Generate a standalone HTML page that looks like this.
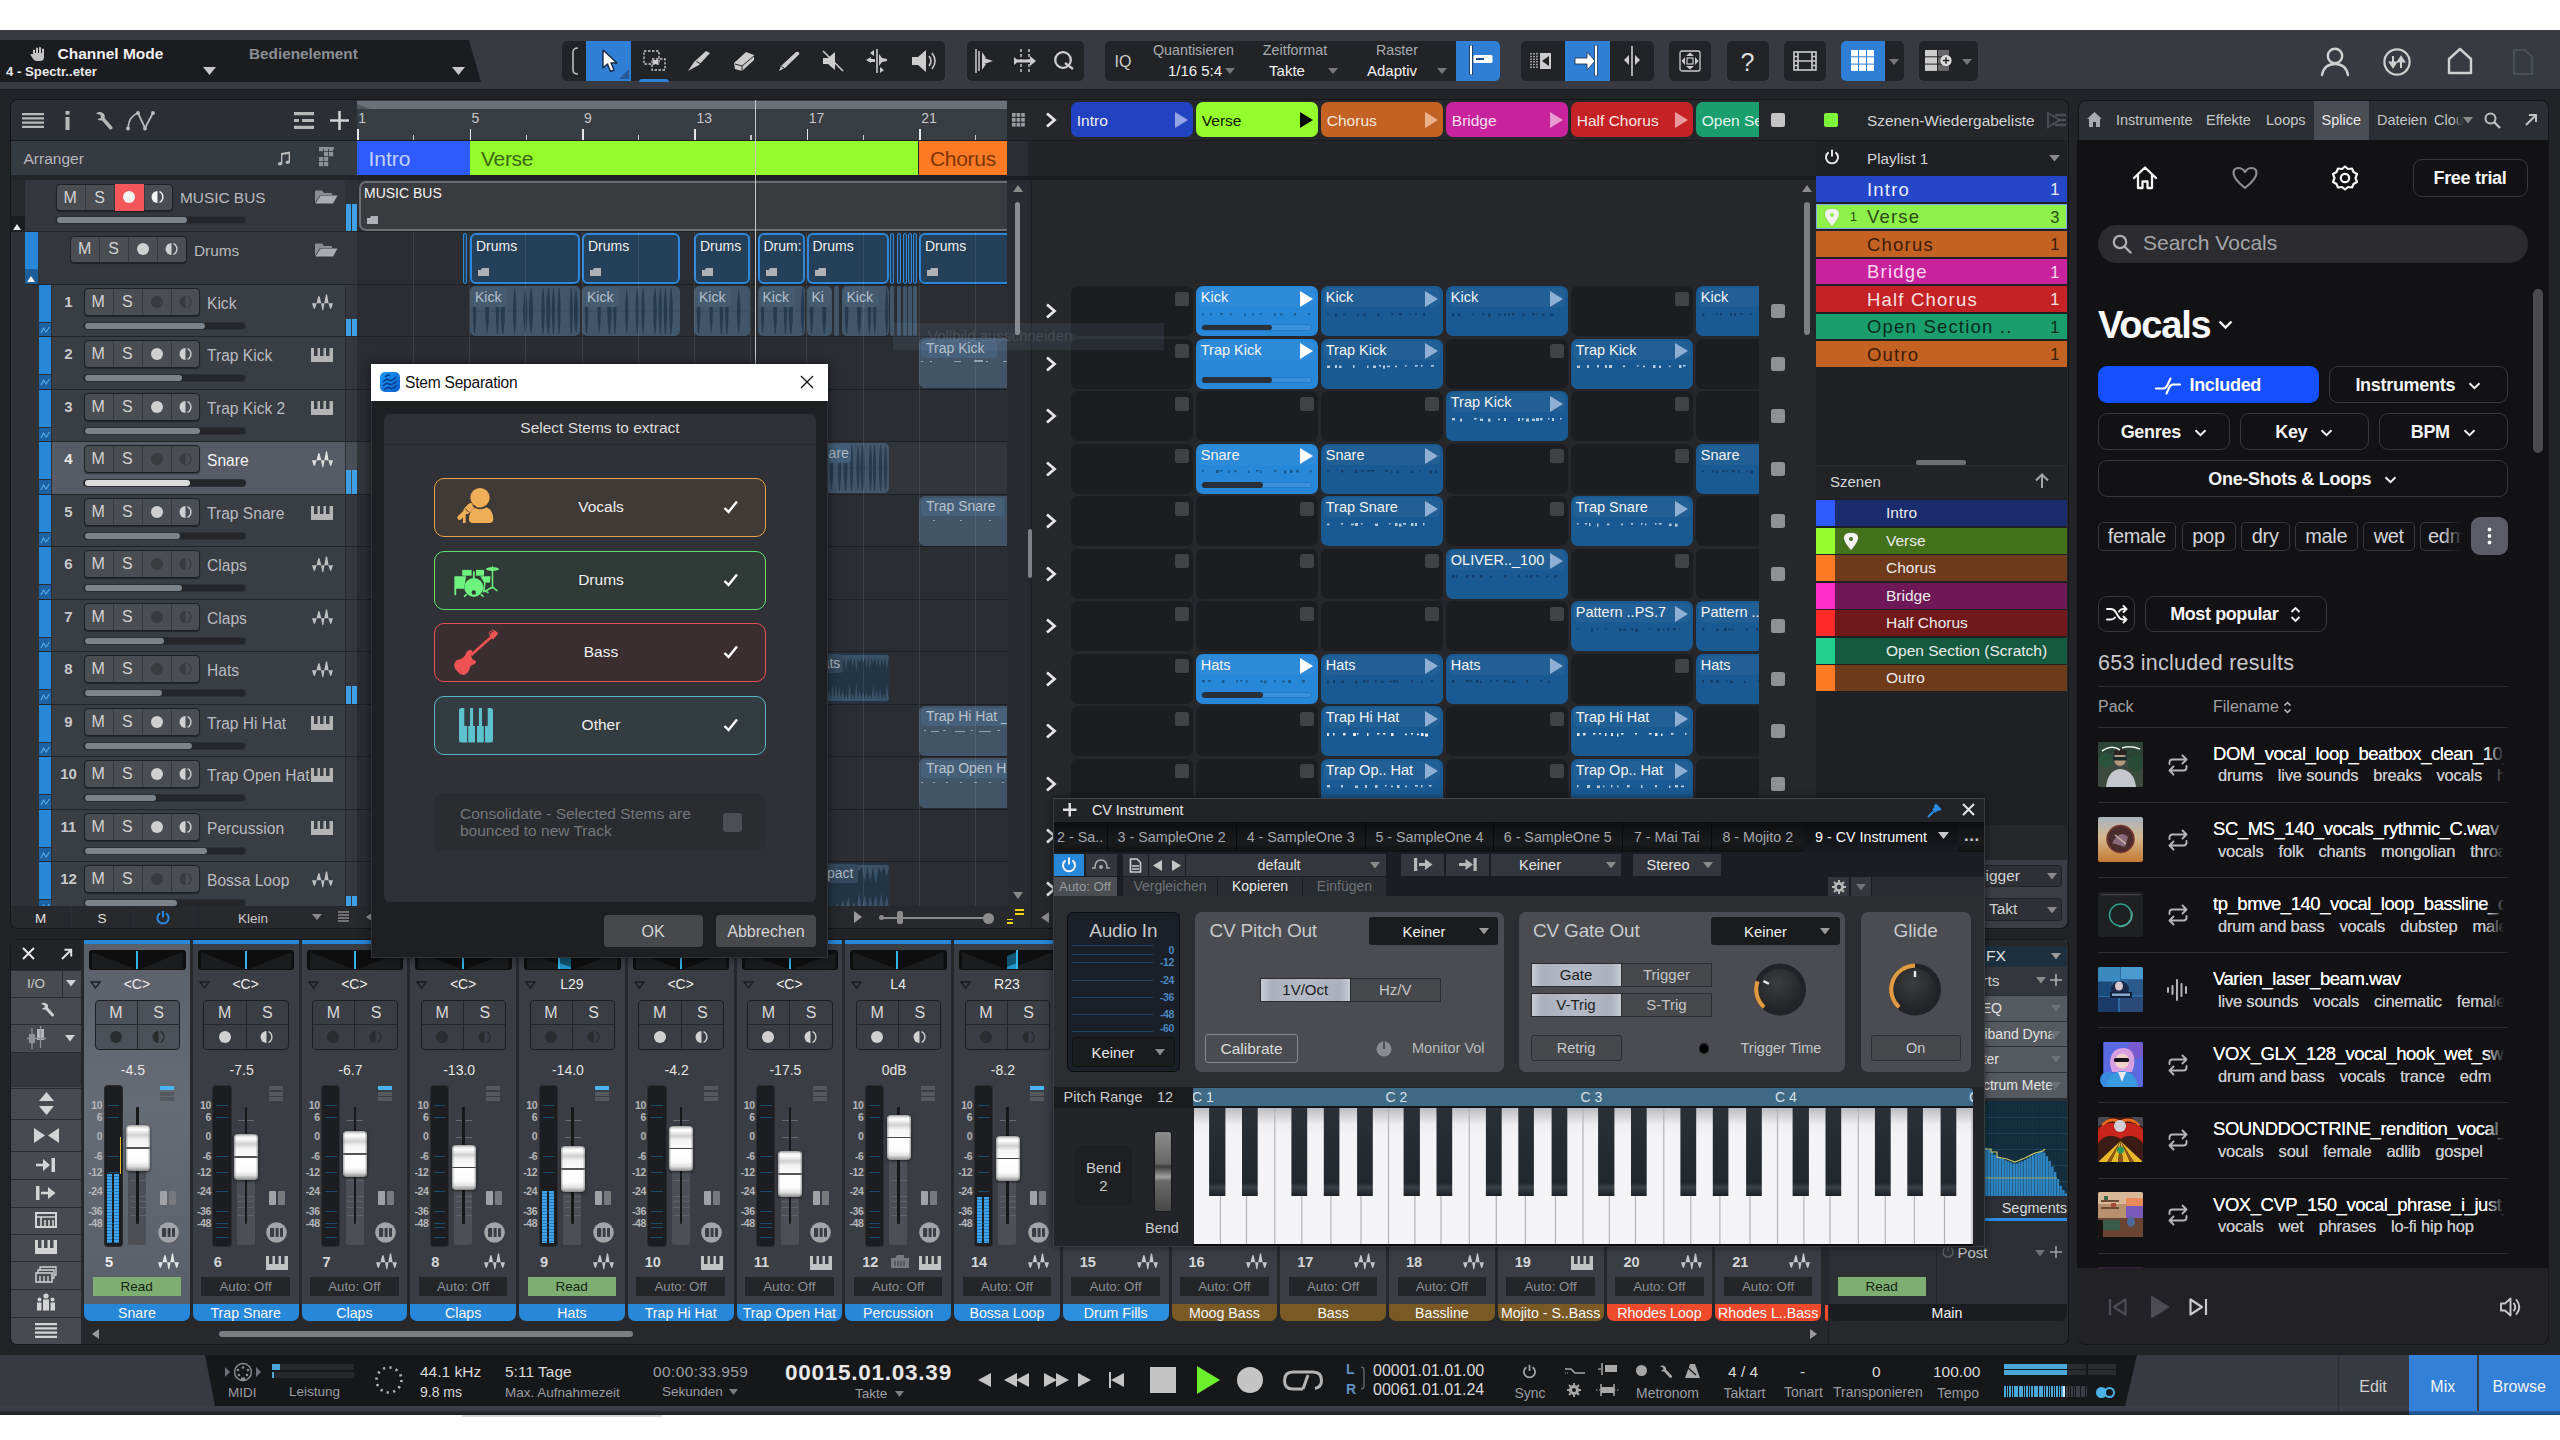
<!DOCTYPE html>
<html><head><meta charset="utf-8"><title>Studio One</title>
<style>
*{box-sizing:border-box;margin:0;padding:0}
html,body{width:2560px;height:1440px;overflow:hidden;background:#fff}
body{font-family:"Liberation Sans",sans-serif;position:relative}
div,svg{position:absolute}
.t{white-space:nowrap;line-height:1.15}
#root{left:0;top:0;width:2560px;height:1440px;overflow:hidden}
.clip{overflow:hidden}
</style></head><body><div id="root">

<div style="left:0px;top:90px;width:2560px;height:1265px;background:#222326"></div>
<div style="left:10.5px;top:99.5px;width:2057px;height:828.5px;background:#25272b;border-radius:7px;box-shadow:0 0 0 1px #151618"></div>
<div style="left:0px;top:30px;width:2560px;height:60px;background:#373b41;border-bottom:1px solid #17181a"></div>
<svg style="left:0px;top:40px;" width="482" height="42" viewBox="0 0 482 42"><polygon points="0,0 469,0 481,42 0,42" fill="#1a1c20"/></svg>
<svg style="left:30px;top:46px;" width="18" height="16" viewBox="0 0 18 16"><path d="M3 8 L3 4 Q4 3 5 4 L5 7 L6 7 L6 2 Q7 1 8 2 L8 7 L9 7 L9 1.5 Q10 .5 11 1.5 L11 7 L12 7 L12 3 Q13 2 14 3 L14 11 Q14 15 10 15 L7 15 Q4 15 2.5 12 L.5 9 Q.5 7.5 2 8 Z" fill="#c4c4c4"/></svg>
<div class="t" style="left:57.5px;top:44.7px;font-size:15.5px;color:#f0f0f0;font-weight:bold">Channel Mode</div>
<div class="t" style="left:6px;top:63.7px;font-size:13.2px;color:#e8e8e8;font-weight:bold">4 - Spectr..eter</div>
<svg style="left:203px;top:67px;" width="13" height="8" viewBox="0 0 13 8"><polygon points="0,0 13,0 6.5,8" fill="#c8c8c8"/></svg>
<div class="t" style="left:249px;top:45px;font-size:15.3px;color:#8b8e93;font-weight:bold">Bedienelement</div>
<svg style="left:452px;top:67px;" width="13" height="8" viewBox="0 0 13 8"><polygon points="0,0 13,0 6.5,8" fill="#c8c8c8"/></svg>
<div style="left:562px;top:41px;width:383px;height:40px;background:#222326;border-radius:5px"></div>
<div style="left:586px;top:41px;width:45px;height:40px;background:#2f7fd6"></div>
<svg style="left:570px;top:47px;" width="10" height="28" viewBox="0 0 10 28"><path d="M8 1 Q3 1 3 5 L3 23 Q3 27 8 27" fill="none" stroke="#bbb" stroke-width="1.6"/></svg>
<svg style="left:600px;top:48px;" width="20" height="26" viewBox="0 0 20 26"><path d="M3 2 L3 20 L7.5 16 L10.5 23.5 L14 22 L11 15 L17 15 Z" fill="#fff" stroke="#1b2c44" stroke-width="1.4" stroke-linejoin="round"/></svg>
<svg style="left:619px;top:69px;" width="10" height="10" viewBox="0 0 10 10"><polygon points="10,0 10,10 0,10" fill="#245a9a"/></svg>
<svg style="left:643px;top:50px;" width="24" height="22" viewBox="0 0 24 22"><rect x="1" y="1" width="15" height="13" fill="none" stroke="#ccc" stroke-width="1.3" stroke-dasharray="2.5 1.5"/><rect x="9" y="9" width="13" height="11" fill="none" stroke="#ccc" stroke-width="1.3" stroke-dasharray="2.5 1.5"/><rect x="10" y="10" width="5" height="4" fill="#ccc"/></svg>
<div style="left:639px;top:78.5px;width:30px;height:3px;background:#2f7fd6;border-radius:3px 3px 0 0"></div>
<svg style="left:687px;top:50px;" width="24" height="22" viewBox="0 0 24 22"><path d="M1 21 L7 12 L19 1 L23 3 L12 15 Z" fill="#ccc"/><path d="M9.5 11.5 L14 14" stroke="#222" stroke-width="1"/></svg>
<svg style="left:732px;top:50px;" width="24" height="22" viewBox="0 0 24 22"><path d="M2 13 L14 2 L22 5 L22 10 L10 21 L3 19 Z" fill="#ccc"/><path d="M3 14 L10 16 L22 6 M10 16 L10 21" stroke="#222" stroke-width="1" fill="none"/></svg>
<svg style="left:777px;top:50px;" width="24" height="22" viewBox="0 0 24 22"><path d="M2 21 L4 16 L19 2 Q22 1 22.5 4 L8 18 Z" fill="#ccc"/><path d="M4.5 16.5 L7.5 18.5" stroke="#222" stroke-width="1"/></svg>
<svg style="left:820px;top:49px;" width="26" height="24" viewBox="0 0 26 24"><path d="M3 9 L8 9 L15 3 L15 21 L8 15 L3 15 Z" fill="#ccc"/><path d="M3 2 L23 22" stroke="#ccc" stroke-width="1.6"/></svg>
<svg style="left:865px;top:48px;" width="24" height="26" viewBox="0 0 24 26"><path d="M12 1 L12 25" stroke="#ccc" stroke-width="1.6"/><path d="M1 12 L6 9 L6 11 L10 11 L10 14 L6 14 L6 15 Z M14 6 L14 18 L17 14 L22 13 L22 11 L17 10 Z M9 2 L9 8 L5 5 Z M15 19 L15 25 L19 22 Z" fill="#ccc"/></svg>
<svg style="left:911px;top:49px;" width="28" height="24" viewBox="0 0 28 24"><path d="M1 8 L7 8 L15 1 L15 23 L7 16 L1 16 Z" fill="#ccc"/><path d="M18 7 Q22 12 18 17 M21 4 Q27 12 21 20" stroke="#ccc" stroke-width="1.6" fill="none"/></svg>
<div style="left:966.5px;top:41px;width:117px;height:40px;background:#222326;border-radius:5px"></div>
<svg style="left:973px;top:48px;" width="22" height="26" viewBox="0 0 22 26"><path d="M3 1 L3 25 M6 3 L6 23" stroke="#ccc" stroke-width="1.5"/><path d="M9 4 L13 10 L11 10 L20 13 L11 16 L13 16 L9 22 Z" fill="#ccc"/></svg>
<svg style="left:1013px;top:48px;" width="24" height="26" viewBox="0 0 24 26"><path d="M8 1 L8 25 M16 1 L16 25" stroke="#ccc" stroke-width="1.4" stroke-dasharray="3 2"/><path d="M1 9 L1 17 L4 14.5 L17 14.5 L17 18 L23 13 L17 8 L17 11.5 L4 11.5 Z" fill="#ccc"/></svg>
<svg style="left:1053px;top:50px;" width="22" height="22" viewBox="0 0 22 22"><circle cx="10" cy="10" r="7.8" fill="none" stroke="#ccc" stroke-width="2.3"/><path d="M12 13 L20 19" stroke="#ccc" stroke-width="2.3"/></svg>
<div style="left:1105px;top:41px;width:395px;height:40px;background:#222326;border-radius:5px"></div>
<div style="left:1456px;top:41px;width:44px;height:40px;background:#2f7fd6;border-radius:0 5px 5px 0"></div>
<div class="t" style="left:1114.5px;top:52.5px;font-size:16px;color:#ccc;">IQ</div>
<div class="t" style="left:1113.5px;top:42.3px;font-size:14.3px;color:#a8abb0;width:160px;text-align:center;">Quantisieren</div>
<div class="t" style="left:1115px;top:62.3px;font-size:15px;color:#f2f2f2;width:160px;text-align:center;">1/16 5:4</div>
<svg style="left:1225px;top:68px;" width="10" height="6" viewBox="0 0 10 6"><polygon points="0,0 10,0 5.0,6" fill="#777"/></svg>
<div class="t" style="left:1215px;top:42.3px;font-size:14.3px;color:#a8abb0;width:160px;text-align:center;">Zeitformat</div>
<div class="t" style="left:1207px;top:62.3px;font-size:15px;color:#f2f2f2;width:160px;text-align:center;">Takte</div>
<svg style="left:1328px;top:68px;" width="10" height="6" viewBox="0 0 10 6"><polygon points="0,0 10,0 5.0,6" fill="#777"/></svg>
<div class="t" style="left:1317px;top:42.3px;font-size:14.3px;color:#a8abb0;width:160px;text-align:center;">Raster</div>
<div class="t" style="left:1312px;top:62.3px;font-size:15px;color:#f2f2f2;width:160px;text-align:center;">Adaptiv</div>
<svg style="left:1437px;top:68px;" width="10" height="6" viewBox="0 0 10 6"><polygon points="0,0 10,0 5.0,6" fill="#777"/></svg>
<svg style="left:1466px;top:44px;" width="30" height="34" viewBox="0 0 30 34"><path d="M5 1 L5 31" stroke="#1d2c45" stroke-width="3.4"/><path d="M5 1.5 L5 30.5" stroke="#fff" stroke-width="2"/><rect x="7.5" y="11" width="19" height="8" rx="1.5" fill="#fff"/><rect x="10" y="14" width="8" height="2" fill="#1d4c8a"/></svg>
<div style="left:1521px;top:41px;width:133px;height:40px;background:#222326;border-radius:5px"></div>
<div style="left:1565px;top:41px;width:45px;height:40px;background:#2f7fd6"></div>
<svg style="left:1529px;top:52px;" width="24" height="18" viewBox="0 0 24 18"><path d="M2 1 L2 17 M5 1 L5 17 M8 1 L8 17" stroke="#ccc" stroke-width="1.4" stroke-dasharray="1.5 1.2"/><rect x="11" y="1" width="11" height="16" fill="#ccc"/><polygon points="20,4 20,14 13,9" fill="#222"/></svg>
<svg style="left:1573px;top:44px;" width="28" height="34" viewBox="0 0 28 34"><path d="M2 14 L14 14 L14 8 L22 17 L14 26 L14 20 L2 20 Z" fill="#fff" stroke="#1d2c45" stroke-width=".8"/><path d="M23 1 L23 32" stroke="#1d2c45" stroke-width="3.6"/><path d="M23 1.5 L23 31.5" stroke="#fff" stroke-width="2.2"/></svg>
<svg style="left:1621px;top:45px;" width="22" height="32" viewBox="0 0 22 32"><path d="M11 1 L11 31" stroke="#ccc" stroke-width="1.6"/><polygon points="8,10 8,20 3,15" fill="#ccc"/><polygon points="14,10 14,20 19,15" fill="#ccc"/></svg>
<div style="left:1669px;top:41px;width:42px;height:40px;background:#222326;border-radius:5px"></div>
<svg style="left:1679px;top:50px;" width="22" height="22" viewBox="0 0 22 22"><rect x="1" y="1" width="20" height="20" rx="2" fill="none" stroke="#ccc" stroke-width="1.3"/><rect x="8" y="8" width="6" height="6" fill="none" stroke="#ccc" stroke-width="1.2"/><path d="M7 6 L11 2.5 L15 6 Z M7 16 L11 19.5 L15 16 Z M6 7 L2.5 11 L6 15 Z M16 7 L19.5 11 L16 15 Z" fill="#ccc"/></svg>
<div style="left:1726.5px;top:41px;width:42px;height:40px;background:#222326;border-radius:5px"></div>
<div class="t" style="left:1726.5px;top:48px;font-size:25px;color:#ddd;width:42px;text-align:center;">?</div>
<div style="left:1784px;top:41px;width:42px;height:40px;background:#222326;border-radius:5px"></div>
<svg style="left:1793px;top:50px;" width="24" height="22" viewBox="0 0 24 22"><rect x="1" y="2" width="22" height="18" fill="none" stroke="#ccc" stroke-width="1.6"/><path d="M5 2 L5 20 M19 2 L19 20 M5 11 L19 11 M1 6.5 L5 6.5 M1 11 L5 11 M1 15.5 L5 15.5 M19 6.5 L23 6.5 M19 11 L23 11 M19 15.5 L23 15.5" stroke="#ccc" stroke-width="1.6"/></svg>
<div style="left:1841px;top:41px;width:63px;height:40px;background:#222326;border-radius:5px"></div>
<div style="left:1841px;top:41px;width:44px;height:40px;background:#2f7fd6;border-radius:5px 0 0 5px"></div>
<svg style="left:1851px;top:50px;" width="24" height="22" viewBox="0 0 24 22"><rect x="0" y="0.0" width="7" height="6.3" fill="#fff"/><rect x="8" y="0.0" width="7" height="6.3" fill="#fff"/><rect x="16" y="0.0" width="7" height="6.3" fill="#fff"/><rect x="0" y="7.3" width="7" height="6.3" fill="#fff"/><rect x="8" y="7.3" width="7" height="6.3" fill="#fff"/><rect x="16" y="7.3" width="7" height="6.3" fill="#fff"/><rect x="0" y="14.6" width="7" height="6.3" fill="#fff"/><rect x="8" y="14.6" width="7" height="6.3" fill="#fff"/><rect x="16" y="14.6" width="7" height="6.3" fill="#fff"/></svg>
<svg style="left:1889px;top:59px;" width="10" height="6" viewBox="0 0 10 6"><polygon points="0,0 10,0 5.0,6" fill="#777"/></svg>
<div style="left:1919px;top:41px;width:58.5px;height:40px;background:#222326;border-radius:5px"></div>
<svg style="left:1925px;top:50px;" width="28" height="22" viewBox="0 0 28 22"><rect x="0" y="0.0" width="12" height="6.3" fill="#ccc"/><rect x="13" y="0.0" width="11" height="6.3" fill="#666"/><rect x="0" y="7.3" width="12" height="6.3" fill="#ccc"/><rect x="13" y="7.3" width="11" height="6.3" fill="#666"/><rect x="0" y="14.6" width="12" height="6.3" fill="#ccc"/><rect x="13" y="14.6" width="11" height="6.3" fill="#666"/><circle cx="21" cy="10.5" r="5.6" fill="#ddd"/><path d="M21 7.3 L21 13.7 M17.8 10.5 L24.2 10.5" stroke="#222" stroke-width="1.4"/></svg>
<svg style="left:1962px;top:59px;" width="10" height="6" viewBox="0 0 10 6"><polygon points="0,0 10,0 5.0,6" fill="#777"/></svg>
<svg style="left:2319px;top:46px;" width="32" height="32" viewBox="0 0 32 32"><circle cx="16" cy="10" r="7.2" fill="none" stroke="#d0d0d0" stroke-width="2.4"/><path d="M3 29 Q5 18 16 18 Q27 18 29 29" fill="none" stroke="#d0d0d0" stroke-width="2.4" stroke-linecap="round"/></svg>
<svg style="left:2382px;top:47px;" width="30" height="30" viewBox="0 0 30 30"><circle cx="15" cy="15" r="12.6" fill="none" stroke="#d0d0d0" stroke-width="2.2"/><path d="M11 9 L11 18 M8 15.5 L11 20 L14 15.5 Z M19 21 L19 12 M16 14.5 L19 10 L22 14.5 Z" stroke="#d0d0d0" stroke-width="2" fill="#d0d0d0"/></svg>
<svg style="left:2446px;top:46px;" width="28" height="30" viewBox="0 0 28 30"><path d="M3 13 L14 3 L25 13 L25 27 L3 27 Z" fill="none" stroke="#d0d0d0" stroke-width="2.4" stroke-linejoin="round"/></svg>
<svg style="left:2512px;top:48px;" width="22" height="28" viewBox="0 0 22 28"><path d="M2 2 L13 2 L20 9 L20 26 L2 26 Z" fill="none" stroke="#4b4f55" stroke-width="2.2" stroke-linejoin="round"/></svg>
<div style="left:11px;top:100px;width:346px;height:40px;background:#2b2e33;border-radius:7px 0 0 0"></div><svg style="left:22px;top:113px;" width="22" height="15" viewBox="0 0 22 15"><path d="M0 1.2 L22 1.2 M0 5.4 L22 5.4 M0 9.6 L22 9.6 M0 13.8 L22 13.8" stroke="#b8b8b8" stroke-width="2.2"/></svg><svg style="left:64px;top:111px;" width="8" height="19" viewBox="0 0 8 19"><rect x="1.5" y="0" width="4" height="3.6" fill="#b8b8b8"/><rect x="1.5" y="6" width="4" height="13" fill="#b8b8b8"/></svg><svg style="left:93px;top:110px;" width="22" height="22" viewBox="0 0 22 22"><path d="M3 3.5 Q7.5 .5 11 4 Q12.5 6 11.5 8 L19.5 17 Q20 19 18 19.5 Q17 19.5 16.5 19 L9 10.5 Q6 11 4.5 9 L8 8 L7.5 5 Z" fill="#b8b8b8"/></svg><svg style="left:125px;top:110px;" width="32" height="22" viewBox="0 0 32 22"><path d="M3 18 Q4 6 13 3 L20 18 L28 3" fill="none" stroke="#b8b8b8" stroke-width="1.8"/><circle cx="3" cy="18.5" r="2" fill="#b8b8b8"/><circle cx="13" cy="3" r="2" fill="#b8b8b8"/><circle cx="20" cy="18.5" r="2" fill="#b8b8b8"/><circle cx="28" cy="3" r="2" fill="#b8b8b8"/></svg><svg style="left:294px;top:112px;" width="21" height="17" viewBox="0 0 21 17"><path d="M0 1.7 L20 1.7 M0 15.3 L20 15.3 M0 8.5 L5 8.5 M8 8.5 L20 8.5" stroke="#b8b8b8" stroke-width="3.2"/></svg><svg style="left:330px;top:111px;" width="19" height="19" viewBox="0 0 19 19"><path d="M9.5 0 L9.5 19 M0 9.5 L19 9.5" stroke="#d0d0d0" stroke-width="2.6"/></svg><div style="left:11px;top:139.5px;width:346px;height:1.5px;background:#1b1c1f"></div><div style="left:11px;top:141px;width:346px;height:34px;background:#363a41"></div><div class="t" style="left:23.5px;top:149.5px;font-size:15.5px;color:#b4b7bc;">Arranger</div><svg style="left:276px;top:150px;" width="16" height="16" viewBox="0 0 16 16"><path d="M5 3 L14 1.5 L14 11.5 Q14 14 11.5 14 Q9.5 14 9.5 12.3 Q9.5 10.5 12 10.5 L12.6 10.5 L12.6 4 L6.4 5 L6.4 13 Q6.4 15.5 3.8 15.5 Q1.8 15.5 1.8 13.8 Q1.8 12 4.2 12 L5 12 Z" fill="#b8b8b8"/></svg><svg style="left:318px;top:147px;" width="18" height="20" viewBox="0 0 18 20"><rect x="1" y="0" width="4.2" height="4.2" fill="#8e9196"/><rect x="6" y="0" width="4.2" height="4.2" fill="#8e9196"/><rect x="11" y="0" width="4.2" height="4.2" fill="#8e9196"/><rect x="6" y="5" width="4.2" height="4.2" fill="#8e9196"/><rect x="11" y="5" width="4.2" height="4.2" fill="#8e9196"/><rect x="6" y="10" width="4.2" height="4.2" fill="#8e9196"/><rect x="1" y="10" width="4.2" height="4.2" fill="#8e9196"/><rect x="1" y="15" width="4.2" height="4.2" fill="#8e9196"/><rect x="6" y="15" width="4.2" height="4.2" fill="#8e9196"/><rect x="1" y="0" width="15" height="2" fill="#8e9196"/></svg><div style="left:11px;top:175px;width:346px;height:5px;background:#222428"></div><div style="left:11px;top:180px;width:346px;height:726px;background:#2c2f34"></div><div style="left:11px;top:180px;width:14px;height:51.5px;background:#26282c"></div><div style="left:11px;top:216px;width:14px;height:15.5px;background:#1c1d20"></div><svg style="left:13px;top:223.5px;" width="8" height="6" viewBox="0 0 8 6"><polygon points="0,6 8,6 4.0,0" fill="#e8e8e8"/></svg><div style="left:25px;top:180px;width:320px;height:51px;background:#33363c"></div><div style="left:55.5px;top:183.5px;width:117.5px;height:27px;background:#4a4d52;border:1px solid #1f2023;border-radius:4px;box-shadow:0 1px 1px rgba(0,0,0,.4)"></div><div style="left:84.875px;top:184.5px;width:1px;height:25px;background:#38393d"></div><div style="left:114.25px;top:184.5px;width:1px;height:25px;background:#38393d"></div><div style="left:143.625px;top:184.5px;width:1px;height:25px;background:#38393d"></div><div class="t" style="left:55.5px;top:183.5px;font-size:16px;color:#d2d2d2;width:29.375px;height:27px;line-height:27px;text-align:center;">M</div><div class="t" style="left:84.875px;top:183.5px;font-size:16px;color:#d2d2d2;width:29.375px;height:27px;line-height:27px;text-align:center;">S</div><div style="left:114.75px;top:183.5px;width:29.375px;height:27px;background:#f4565a"></div><div style="left:122.9375px;top:191.0px;width:12px;height:12px;background:#f4f4f4;border-radius:6px"></div><svg style="left:151.3125px;top:190.0px;" width="14" height="14" viewBox="0 0 14 14"><path d="M6.5 1 A6 6 0 0 0 6.5 13 Z" fill="#f4f4f4"/><path d="M8.5 1.6 A6 6 0 0 1 8.5 12.4" fill="none" stroke="#f4f4f4" stroke-width="1.4"/></svg><div class="t" style="left:180px;top:189.3px;font-size:15.4px;color:#b8bbc0;">MUSIC BUS</div><svg style="left:314px;top:190px;" width="24" height="14" viewBox="0 0 24 14"><path d="M1 13 L1 1.5 Q1 .5 2 .5 L8 .5 L10 3 L17 3 Q18 3 18 4 L18 5 L6 5 Z" fill="#8a8d92"/><path d="M1.5 13.5 L6.5 5.5 L23.5 5.5 L19 13.5 Z" fill="#a9acb0"/></svg><div style="left:56px;top:216.8px;width:189px;height:6.4px;background:#24262a;border-radius:4px;box-shadow:0 0 0 1px #2d2f34"></div><div style="left:57px;top:217.3px;width:130.41px;height:5.4px;background:#7d838b;border-radius:3px"></div><div style="left:345px;top:180px;width:12px;height:51px;background:#2e3136"></div><div style="left:345.5px;top:204px;width:5px;height:27px;background:#3ea0e4"></div><div style="left:351.5px;top:204px;width:5px;height:27px;background:#3ea0e4"></div><div style="left:11px;top:231px;width:346px;height:1px;background:#222428"></div><div style="left:11px;top:232px;width:14px;height:674px;background:#2f3237"></div><div style="left:25px;top:232px;width:12.5px;height:36.5px;background:#2787d9"></div><div style="left:25px;top:269px;width:12.5px;height:15.5px;background:#1d5e9a"></div><svg style="left:27px;top:275.5px;" width="8" height="6" viewBox="0 0 8 6"><polygon points="0,6 8,6 4.0,0" fill="#f0f0f0"/></svg><div style="left:37.5px;top:232px;width:319.5px;height:52px;background:#33363c"></div><div style="left:70px;top:236px;width:116.5px;height:26.5px;background:#4a4d52;border:1px solid #1f2023;border-radius:4px;box-shadow:0 1px 1px rgba(0,0,0,.4)"></div><div style="left:99.125px;top:237px;width:1px;height:24.5px;background:#38393d"></div><div style="left:128.25px;top:237px;width:1px;height:24.5px;background:#38393d"></div><div style="left:157.375px;top:237px;width:1px;height:24.5px;background:#38393d"></div><div class="t" style="left:70px;top:236px;font-size:16px;color:#d2d2d2;width:29.125px;height:26.5px;line-height:26.5px;text-align:center;">M</div><div class="t" style="left:99.125px;top:236px;font-size:16px;color:#d2d2d2;width:29.125px;height:26.5px;line-height:26.5px;text-align:center;">S</div><div style="left:136.8125px;top:243.25px;width:12px;height:12px;background:#d0d0d0;border-radius:6px"></div><svg style="left:164.9375px;top:242.25px;" width="14" height="14" viewBox="0 0 14 14"><path d="M6.5 1 A6 6 0 0 0 6.5 13 Z" fill="#d0d0d0"/><path d="M8.5 1.6 A6 6 0 0 1 8.5 12.4" fill="none" stroke="#d0d0d0" stroke-width="1.4"/></svg><div class="t" style="left:194px;top:241.8px;font-size:15.4px;color:#b8bbc0;">Drums</div><svg style="left:314px;top:243px;" width="24" height="14" viewBox="0 0 24 14"><path d="M1 13 L1 1.5 Q1 .5 2 .5 L8 .5 L10 3 L17 3 Q18 3 18 4 L18 5 L6 5 Z" fill="#8a8d92"/><path d="M1.5 13.5 L6.5 5.5 L23.5 5.5 L19 13.5 Z" fill="#a9acb0"/></svg><div style="left:25px;top:284px;width:332px;height:1px;background:#222428"></div><div style="left:25px;top:285px;width:14px;height:621px;background:#2f3237"></div><div style="left:39px;top:285px;width:12px;height:36.5px;background:#2787d9"></div><div style="left:39px;top:322.5px;width:12px;height:13.5px;background:#1d62a5"></div><svg style="left:40px;top:325px;" width="11" height="10" viewBox="0 0 11 10"><path d="M1 8 L3.5 3 L6 7 L9.5 2" fill="none" stroke="#58b0f0" stroke-width="1.1"/></svg><div style="left:51.5px;top:285px;width:293.5px;height:51px;background:#393d44"></div><div style="left:345px;top:285px;width:12px;height:51px;background:#34373d;border-left:1px solid #2a2c30"></div><div class="t" style="left:53.5px;top:293.2px;font-size:15px;color:#c6c8cb;width:30px;text-align:center;font-weight:bold">1</div><div style="left:83.6px;top:288.3px;width:116.8px;height:27.4px;background:#4a4d52;border:1px solid #1f2023;border-radius:4px;box-shadow:0 1px 1px rgba(0,0,0,.4)"></div><div style="left:112.8px;top:289.3px;width:1px;height:25.4px;background:#38393d"></div><div style="left:142.0px;top:289.3px;width:1px;height:25.4px;background:#38393d"></div><div style="left:171.2px;top:289.3px;width:1px;height:25.4px;background:#38393d"></div><div class="t" style="left:83.6px;top:288.3px;font-size:16px;color:#d2d2d2;width:29.2px;height:27.4px;line-height:27.4px;text-align:center;">M</div><div class="t" style="left:112.8px;top:288.3px;font-size:16px;color:#d2d2d2;width:29.2px;height:27.4px;line-height:27.4px;text-align:center;">S</div><div style="left:150.6px;top:296.0px;width:12px;height:12px;background:#393b3f;border-radius:6px"></div><svg style="left:178.8px;top:295.0px;" width="14" height="14" viewBox="0 0 14 14"><path d="M6.5 1 A6 6 0 0 0 6.5 13 Z" fill="#393b3f"/><path d="M8.5 1.6 A6 6 0 0 1 8.5 12.4" fill="none" stroke="#393b3f" stroke-width="1.4"/></svg><div class="t" style="left:207px;top:294.9px;font-size:15.6px;color:#b8bbc0;">Kick</div><svg style="left:312px;top:293.5px;" width="21" height="17.5" viewBox="0 0 21 17.5"><path d="M0 9.3 L4.7 9.3 L3 14.4 Q2.3 15.2 1.7 14.4 Z M4.5 9.3 L9.3 9.3 L7.6 2.6 Q6.9 1.6 6.2 2.6 Z M9.1 9.3 L12.5 9.3 L11.3 16 Q10.8 16.8 10.3 16 Z M12.3 9.3 L16.6 9.3 L15.2 .9 Q14.5 -.2 13.8 .9 Z M16.4 9.3 L21 9.3 L19.3 14.6 Q18.7 15.4 18.1 14.6 Z" fill="#c0c0c0"/></svg><div style="left:84px;top:322.7px;width:161px;height:6.4px;background:#24262a;border-radius:4px;box-shadow:0 0 0 1px #2d2f34"></div><div style="left:85px;top:323.2px;width:119.945px;height:5.4px;background:#7d838b;border-radius:3px"></div><div style="left:345.5px;top:319px;width:5px;height:17px;background:#3ea0e4"></div><div style="left:351.5px;top:319px;width:5px;height:17px;background:#3ea0e4"></div><div style="left:39px;top:336px;width:318px;height:1px;background:#222428"></div><div style="left:39px;top:337px;width:12px;height:36.5px;background:#2787d9"></div><div style="left:39px;top:374.5px;width:12px;height:14.5px;background:#1d62a5"></div><svg style="left:40px;top:377px;" width="11" height="10" viewBox="0 0 11 10"><path d="M1 8 L3.5 3 L6 7 L9.5 2" fill="none" stroke="#58b0f0" stroke-width="1.1"/></svg><div style="left:51.5px;top:337px;width:293.5px;height:52px;background:#393d44"></div><div style="left:345px;top:337px;width:12px;height:52px;background:#34373d;border-left:1px solid #2a2c30"></div><div class="t" style="left:53.5px;top:345.2px;font-size:15px;color:#c6c8cb;width:30px;text-align:center;font-weight:bold">2</div><div style="left:83.6px;top:340.3px;width:116.8px;height:27.4px;background:#4a4d52;border:1px solid #1f2023;border-radius:4px;box-shadow:0 1px 1px rgba(0,0,0,.4)"></div><div style="left:112.8px;top:341.3px;width:1px;height:25.4px;background:#38393d"></div><div style="left:142.0px;top:341.3px;width:1px;height:25.4px;background:#38393d"></div><div style="left:171.2px;top:341.3px;width:1px;height:25.4px;background:#38393d"></div><div class="t" style="left:83.6px;top:340.3px;font-size:16px;color:#d2d2d2;width:29.2px;height:27.4px;line-height:27.4px;text-align:center;">M</div><div class="t" style="left:112.8px;top:340.3px;font-size:16px;color:#d2d2d2;width:29.2px;height:27.4px;line-height:27.4px;text-align:center;">S</div><div style="left:150.6px;top:348.0px;width:12px;height:12px;background:#d0d0d0;border-radius:6px"></div><svg style="left:178.8px;top:347.0px;" width="14" height="14" viewBox="0 0 14 14"><path d="M6.5 1 A6 6 0 0 0 6.5 13 Z" fill="#d0d0d0"/><path d="M8.5 1.6 A6 6 0 0 1 8.5 12.4" fill="none" stroke="#d0d0d0" stroke-width="1.4"/></svg><div class="t" style="left:207px;top:346.9px;font-size:15.6px;color:#b8bbc0;">Trap Kick</div><svg style="left:311px;top:347.6px;" width="22" height="14" viewBox="0 0 22 14"><path d="M0 0 L3 0 L3 8 L6.5 8 L6.5 0 L9 0 L9 8 L12.5 8 L12.5 0 L15 0 L15 8 L18.5 8 L18.5 0 L22 0 L22 14 L0 14 Z" fill="#b4b4b4"/></svg><div style="left:84px;top:374.7px;width:161px;height:6.4px;background:#24262a;border-radius:4px;box-shadow:0 0 0 1px #2d2f34"></div><div style="left:85px;top:375.2px;width:96.6px;height:5.4px;background:#7d838b;border-radius:3px"></div><div style="left:39px;top:389px;width:318px;height:1px;background:#222428"></div><div style="left:39px;top:390px;width:12px;height:36.5px;background:#2787d9"></div><div style="left:39px;top:427.5px;width:12px;height:13.5px;background:#1d62a5"></div><svg style="left:40px;top:430px;" width="11" height="10" viewBox="0 0 11 10"><path d="M1 8 L3.5 3 L6 7 L9.5 2" fill="none" stroke="#58b0f0" stroke-width="1.1"/></svg><div style="left:51.5px;top:390px;width:293.5px;height:51px;background:#393d44"></div><div style="left:345px;top:390px;width:12px;height:51px;background:#34373d;border-left:1px solid #2a2c30"></div><div class="t" style="left:53.5px;top:398.2px;font-size:15px;color:#c6c8cb;width:30px;text-align:center;font-weight:bold">3</div><div style="left:83.6px;top:393.3px;width:116.8px;height:27.4px;background:#4a4d52;border:1px solid #1f2023;border-radius:4px;box-shadow:0 1px 1px rgba(0,0,0,.4)"></div><div style="left:112.8px;top:394.3px;width:1px;height:25.4px;background:#38393d"></div><div style="left:142.0px;top:394.3px;width:1px;height:25.4px;background:#38393d"></div><div style="left:171.2px;top:394.3px;width:1px;height:25.4px;background:#38393d"></div><div class="t" style="left:83.6px;top:393.3px;font-size:16px;color:#d2d2d2;width:29.2px;height:27.4px;line-height:27.4px;text-align:center;">M</div><div class="t" style="left:112.8px;top:393.3px;font-size:16px;color:#d2d2d2;width:29.2px;height:27.4px;line-height:27.4px;text-align:center;">S</div><div style="left:150.6px;top:401.0px;width:12px;height:12px;background:#d0d0d0;border-radius:6px"></div><svg style="left:178.8px;top:400.0px;" width="14" height="14" viewBox="0 0 14 14"><path d="M6.5 1 A6 6 0 0 0 6.5 13 Z" fill="#d0d0d0"/><path d="M8.5 1.6 A6 6 0 0 1 8.5 12.4" fill="none" stroke="#d0d0d0" stroke-width="1.4"/></svg><div class="t" style="left:207px;top:399.9px;font-size:15.6px;color:#b8bbc0;">Trap Kick 2</div><svg style="left:311px;top:400.6px;" width="22" height="14" viewBox="0 0 22 14"><path d="M0 0 L3 0 L3 8 L6.5 8 L6.5 0 L9 0 L9 8 L12.5 8 L12.5 0 L15 0 L15 8 L18.5 8 L18.5 0 L22 0 L22 14 L0 14 Z" fill="#b4b4b4"/></svg><div style="left:84px;top:427.7px;width:161px;height:6.4px;background:#24262a;border-radius:4px;box-shadow:0 0 0 1px #2d2f34"></div><div style="left:85px;top:428.2px;width:115.115px;height:5.4px;background:#7d838b;border-radius:3px"></div><div style="left:39px;top:441px;width:318px;height:1px;background:#222428"></div><div style="left:39px;top:442px;width:12px;height:36.5px;background:#2787d9"></div><div style="left:39px;top:479.5px;width:12px;height:14.5px;background:#1d62a5"></div><svg style="left:40px;top:482px;" width="11" height="10" viewBox="0 0 11 10"><path d="M1 8 L3.5 3 L6 7 L9.5 2" fill="none" stroke="#58b0f0" stroke-width="1.1"/></svg><div style="left:51.5px;top:442px;width:293.5px;height:52px;background:#565b65"></div><div style="left:345px;top:442px;width:12px;height:52px;background:#4a4e57;border-left:1px solid #2a2c30"></div><div class="t" style="left:53.5px;top:450.2px;font-size:15px;color:#e8e8e8;width:30px;text-align:center;font-weight:bold">4</div><div style="left:83.6px;top:445.3px;width:116.8px;height:27.4px;background:#4a4d52;border:1px solid #1f2023;border-radius:4px;box-shadow:0 1px 1px rgba(0,0,0,.4)"></div><div style="left:112.8px;top:446.3px;width:1px;height:25.4px;background:#38393d"></div><div style="left:142.0px;top:446.3px;width:1px;height:25.4px;background:#38393d"></div><div style="left:171.2px;top:446.3px;width:1px;height:25.4px;background:#38393d"></div><div class="t" style="left:83.6px;top:445.3px;font-size:16px;color:#d2d2d2;width:29.2px;height:27.4px;line-height:27.4px;text-align:center;">M</div><div class="t" style="left:112.8px;top:445.3px;font-size:16px;color:#d2d2d2;width:29.2px;height:27.4px;line-height:27.4px;text-align:center;">S</div><div style="left:150.6px;top:453.0px;width:12px;height:12px;background:#393b3f;border-radius:6px"></div><svg style="left:178.8px;top:452.0px;" width="14" height="14" viewBox="0 0 14 14"><path d="M6.5 1 A6 6 0 0 0 6.5 13 Z" fill="#393b3f"/><path d="M8.5 1.6 A6 6 0 0 1 8.5 12.4" fill="none" stroke="#393b3f" stroke-width="1.4"/></svg><div class="t" style="left:207px;top:451.9px;font-size:15.6px;color:#f2f2f2;">Snare</div><svg style="left:312px;top:450.5px;" width="21" height="17.5" viewBox="0 0 21 17.5"><path d="M0 9.3 L4.7 9.3 L3 14.4 Q2.3 15.2 1.7 14.4 Z M4.5 9.3 L9.3 9.3 L7.6 2.6 Q6.9 1.6 6.2 2.6 Z M9.1 9.3 L12.5 9.3 L11.3 16 Q10.8 16.8 10.3 16 Z M12.3 9.3 L16.6 9.3 L15.2 .9 Q14.5 -.2 13.8 .9 Z M16.4 9.3 L21 9.3 L19.3 14.6 Q18.7 15.4 18.1 14.6 Z" fill="#e0e0e0"/></svg><div style="left:84px;top:479.7px;width:161px;height:6.4px;background:#24262a;border-radius:4px;box-shadow:0 0 0 1px #2d2f34"></div><div style="left:85px;top:480.2px;width:105.455px;height:5.4px;background:#dcdcdc;border-radius:3px"></div><div style="left:345.5px;top:469.5px;width:5px;height:24.5px;background:#3ea0e4"></div><div style="left:351.5px;top:469.5px;width:5px;height:24.5px;background:#3ea0e4"></div><div style="left:39px;top:494px;width:318px;height:1px;background:#222428"></div><div style="left:39px;top:495px;width:12px;height:36.5px;background:#2787d9"></div><div style="left:39px;top:532.5px;width:12px;height:13.5px;background:#1d62a5"></div><svg style="left:40px;top:535px;" width="11" height="10" viewBox="0 0 11 10"><path d="M1 8 L3.5 3 L6 7 L9.5 2" fill="none" stroke="#58b0f0" stroke-width="1.1"/></svg><div style="left:51.5px;top:495px;width:293.5px;height:51px;background:#393d44"></div><div style="left:345px;top:495px;width:12px;height:51px;background:#34373d;border-left:1px solid #2a2c30"></div><div class="t" style="left:53.5px;top:503.2px;font-size:15px;color:#c6c8cb;width:30px;text-align:center;font-weight:bold">5</div><div style="left:83.6px;top:498.3px;width:116.8px;height:27.4px;background:#4a4d52;border:1px solid #1f2023;border-radius:4px;box-shadow:0 1px 1px rgba(0,0,0,.4)"></div><div style="left:112.8px;top:499.3px;width:1px;height:25.4px;background:#38393d"></div><div style="left:142.0px;top:499.3px;width:1px;height:25.4px;background:#38393d"></div><div style="left:171.2px;top:499.3px;width:1px;height:25.4px;background:#38393d"></div><div class="t" style="left:83.6px;top:498.3px;font-size:16px;color:#d2d2d2;width:29.2px;height:27.4px;line-height:27.4px;text-align:center;">M</div><div class="t" style="left:112.8px;top:498.3px;font-size:16px;color:#d2d2d2;width:29.2px;height:27.4px;line-height:27.4px;text-align:center;">S</div><div style="left:150.6px;top:506.0px;width:12px;height:12px;background:#d0d0d0;border-radius:6px"></div><svg style="left:178.8px;top:505.0px;" width="14" height="14" viewBox="0 0 14 14"><path d="M6.5 1 A6 6 0 0 0 6.5 13 Z" fill="#d0d0d0"/><path d="M8.5 1.6 A6 6 0 0 1 8.5 12.4" fill="none" stroke="#d0d0d0" stroke-width="1.4"/></svg><div class="t" style="left:207px;top:504.9px;font-size:15.6px;color:#b8bbc0;">Trap Snare</div><svg style="left:311px;top:505.6px;" width="22" height="14" viewBox="0 0 22 14"><path d="M0 0 L3 0 L3 8 L6.5 8 L6.5 0 L9 0 L9 8 L12.5 8 L12.5 0 L15 0 L15 8 L18.5 8 L18.5 0 L22 0 L22 14 L0 14 Z" fill="#b4b4b4"/></svg><div style="left:84px;top:532.7px;width:161px;height:6.4px;background:#24262a;border-radius:4px;box-shadow:0 0 0 1px #2d2f34"></div><div style="left:85px;top:533.2px;width:94.99px;height:5.4px;background:#7d838b;border-radius:3px"></div><div style="left:39px;top:546px;width:318px;height:1px;background:#222428"></div><div style="left:39px;top:547px;width:12px;height:36.5px;background:#2787d9"></div><div style="left:39px;top:584.5px;width:12px;height:14.5px;background:#1d62a5"></div><svg style="left:40px;top:587px;" width="11" height="10" viewBox="0 0 11 10"><path d="M1 8 L3.5 3 L6 7 L9.5 2" fill="none" stroke="#58b0f0" stroke-width="1.1"/></svg><div style="left:51.5px;top:547px;width:293.5px;height:52px;background:#393d44"></div><div style="left:345px;top:547px;width:12px;height:52px;background:#34373d;border-left:1px solid #2a2c30"></div><div class="t" style="left:53.5px;top:555.2px;font-size:15px;color:#c6c8cb;width:30px;text-align:center;font-weight:bold">6</div><div style="left:83.6px;top:550.3px;width:116.8px;height:27.4px;background:#4a4d52;border:1px solid #1f2023;border-radius:4px;box-shadow:0 1px 1px rgba(0,0,0,.4)"></div><div style="left:112.8px;top:551.3px;width:1px;height:25.4px;background:#38393d"></div><div style="left:142.0px;top:551.3px;width:1px;height:25.4px;background:#38393d"></div><div style="left:171.2px;top:551.3px;width:1px;height:25.4px;background:#38393d"></div><div class="t" style="left:83.6px;top:550.3px;font-size:16px;color:#d2d2d2;width:29.2px;height:27.4px;line-height:27.4px;text-align:center;">M</div><div class="t" style="left:112.8px;top:550.3px;font-size:16px;color:#d2d2d2;width:29.2px;height:27.4px;line-height:27.4px;text-align:center;">S</div><div style="left:150.6px;top:558.0px;width:12px;height:12px;background:#393b3f;border-radius:6px"></div><svg style="left:178.8px;top:557.0px;" width="14" height="14" viewBox="0 0 14 14"><path d="M6.5 1 A6 6 0 0 0 6.5 13 Z" fill="#393b3f"/><path d="M8.5 1.6 A6 6 0 0 1 8.5 12.4" fill="none" stroke="#393b3f" stroke-width="1.4"/></svg><div class="t" style="left:207px;top:556.9px;font-size:15.6px;color:#b8bbc0;">Claps</div><svg style="left:312px;top:555.5px;" width="21" height="17.5" viewBox="0 0 21 17.5"><path d="M0 9.3 L4.7 9.3 L3 14.4 Q2.3 15.2 1.7 14.4 Z M4.5 9.3 L9.3 9.3 L7.6 2.6 Q6.9 1.6 6.2 2.6 Z M9.1 9.3 L12.5 9.3 L11.3 16 Q10.8 16.8 10.3 16 Z M12.3 9.3 L16.6 9.3 L15.2 .9 Q14.5 -.2 13.8 .9 Z M16.4 9.3 L21 9.3 L19.3 14.6 Q18.7 15.4 18.1 14.6 Z" fill="#c0c0c0"/></svg><div style="left:84px;top:584.7px;width:161px;height:6.4px;background:#24262a;border-radius:4px;box-shadow:0 0 0 1px #2d2f34"></div><div style="left:85px;top:585.2px;width:96.6px;height:5.4px;background:#7d838b;border-radius:3px"></div><div style="left:39px;top:599px;width:318px;height:1px;background:#222428"></div><div style="left:39px;top:600px;width:12px;height:36.5px;background:#2787d9"></div><div style="left:39px;top:637.5px;width:12px;height:13.5px;background:#1d62a5"></div><svg style="left:40px;top:640px;" width="11" height="10" viewBox="0 0 11 10"><path d="M1 8 L3.5 3 L6 7 L9.5 2" fill="none" stroke="#58b0f0" stroke-width="1.1"/></svg><div style="left:51.5px;top:600px;width:293.5px;height:51px;background:#393d44"></div><div style="left:345px;top:600px;width:12px;height:51px;background:#34373d;border-left:1px solid #2a2c30"></div><div class="t" style="left:53.5px;top:608.2px;font-size:15px;color:#c6c8cb;width:30px;text-align:center;font-weight:bold">7</div><div style="left:83.6px;top:603.3px;width:116.8px;height:27.4px;background:#4a4d52;border:1px solid #1f2023;border-radius:4px;box-shadow:0 1px 1px rgba(0,0,0,.4)"></div><div style="left:112.8px;top:604.3px;width:1px;height:25.4px;background:#38393d"></div><div style="left:142.0px;top:604.3px;width:1px;height:25.4px;background:#38393d"></div><div style="left:171.2px;top:604.3px;width:1px;height:25.4px;background:#38393d"></div><div class="t" style="left:83.6px;top:603.3px;font-size:16px;color:#d2d2d2;width:29.2px;height:27.4px;line-height:27.4px;text-align:center;">M</div><div class="t" style="left:112.8px;top:603.3px;font-size:16px;color:#d2d2d2;width:29.2px;height:27.4px;line-height:27.4px;text-align:center;">S</div><div style="left:150.6px;top:611.0px;width:12px;height:12px;background:#393b3f;border-radius:6px"></div><svg style="left:178.8px;top:610.0px;" width="14" height="14" viewBox="0 0 14 14"><path d="M6.5 1 A6 6 0 0 0 6.5 13 Z" fill="#393b3f"/><path d="M8.5 1.6 A6 6 0 0 1 8.5 12.4" fill="none" stroke="#393b3f" stroke-width="1.4"/></svg><div class="t" style="left:207px;top:609.9px;font-size:15.6px;color:#b8bbc0;">Claps</div><svg style="left:312px;top:608.5px;" width="21" height="17.5" viewBox="0 0 21 17.5"><path d="M0 9.3 L4.7 9.3 L3 14.4 Q2.3 15.2 1.7 14.4 Z M4.5 9.3 L9.3 9.3 L7.6 2.6 Q6.9 1.6 6.2 2.6 Z M9.1 9.3 L12.5 9.3 L11.3 16 Q10.8 16.8 10.3 16 Z M12.3 9.3 L16.6 9.3 L15.2 .9 Q14.5 -.2 13.8 .9 Z M16.4 9.3 L21 9.3 L19.3 14.6 Q18.7 15.4 18.1 14.6 Z" fill="#c0c0c0"/></svg><div style="left:84px;top:637.7px;width:161px;height:6.4px;background:#24262a;border-radius:4px;box-shadow:0 0 0 1px #2d2f34"></div><div style="left:85px;top:638.2px;width:78.89px;height:5.4px;background:#7d838b;border-radius:3px"></div><div style="left:39px;top:651px;width:318px;height:1px;background:#222428"></div><div style="left:39px;top:652px;width:12px;height:36.5px;background:#2787d9"></div><div style="left:39px;top:689.5px;width:12px;height:14.5px;background:#1d62a5"></div><svg style="left:40px;top:692px;" width="11" height="10" viewBox="0 0 11 10"><path d="M1 8 L3.5 3 L6 7 L9.5 2" fill="none" stroke="#58b0f0" stroke-width="1.1"/></svg><div style="left:51.5px;top:652px;width:293.5px;height:52px;background:#393d44"></div><div style="left:345px;top:652px;width:12px;height:52px;background:#34373d;border-left:1px solid #2a2c30"></div><div class="t" style="left:53.5px;top:660.2px;font-size:15px;color:#c6c8cb;width:30px;text-align:center;font-weight:bold">8</div><div style="left:83.6px;top:655.3px;width:116.8px;height:27.4px;background:#4a4d52;border:1px solid #1f2023;border-radius:4px;box-shadow:0 1px 1px rgba(0,0,0,.4)"></div><div style="left:112.8px;top:656.3px;width:1px;height:25.4px;background:#38393d"></div><div style="left:142.0px;top:656.3px;width:1px;height:25.4px;background:#38393d"></div><div style="left:171.2px;top:656.3px;width:1px;height:25.4px;background:#38393d"></div><div class="t" style="left:83.6px;top:655.3px;font-size:16px;color:#d2d2d2;width:29.2px;height:27.4px;line-height:27.4px;text-align:center;">M</div><div class="t" style="left:112.8px;top:655.3px;font-size:16px;color:#d2d2d2;width:29.2px;height:27.4px;line-height:27.4px;text-align:center;">S</div><div style="left:150.6px;top:663.0px;width:12px;height:12px;background:#393b3f;border-radius:6px"></div><svg style="left:178.8px;top:662.0px;" width="14" height="14" viewBox="0 0 14 14"><path d="M6.5 1 A6 6 0 0 0 6.5 13 Z" fill="#393b3f"/><path d="M8.5 1.6 A6 6 0 0 1 8.5 12.4" fill="none" stroke="#393b3f" stroke-width="1.4"/></svg><div class="t" style="left:207px;top:661.9px;font-size:15.6px;color:#b8bbc0;">Hats</div><svg style="left:312px;top:660.5px;" width="21" height="17.5" viewBox="0 0 21 17.5"><path d="M0 9.3 L4.7 9.3 L3 14.4 Q2.3 15.2 1.7 14.4 Z M4.5 9.3 L9.3 9.3 L7.6 2.6 Q6.9 1.6 6.2 2.6 Z M9.1 9.3 L12.5 9.3 L11.3 16 Q10.8 16.8 10.3 16 Z M12.3 9.3 L16.6 9.3 L15.2 .9 Q14.5 -.2 13.8 .9 Z M16.4 9.3 L21 9.3 L19.3 14.6 Q18.7 15.4 18.1 14.6 Z" fill="#c0c0c0"/></svg><div style="left:84px;top:689.7px;width:161px;height:6.4px;background:#24262a;border-radius:4px;box-shadow:0 0 0 1px #2d2f34"></div><div style="left:85px;top:690.2px;width:77.28px;height:5.4px;background:#7d838b;border-radius:3px"></div><div style="left:345.5px;top:686px;width:5px;height:18px;background:#3ea0e4"></div><div style="left:351.5px;top:686px;width:5px;height:18px;background:#3ea0e4"></div><div style="left:39px;top:704px;width:318px;height:1px;background:#222428"></div><div style="left:39px;top:705px;width:12px;height:36.5px;background:#2787d9"></div><div style="left:39px;top:742.5px;width:12px;height:13.5px;background:#1d62a5"></div><svg style="left:40px;top:745px;" width="11" height="10" viewBox="0 0 11 10"><path d="M1 8 L3.5 3 L6 7 L9.5 2" fill="none" stroke="#58b0f0" stroke-width="1.1"/></svg><div style="left:51.5px;top:705px;width:293.5px;height:51px;background:#393d44"></div><div style="left:345px;top:705px;width:12px;height:51px;background:#34373d;border-left:1px solid #2a2c30"></div><div class="t" style="left:53.5px;top:713.2px;font-size:15px;color:#c6c8cb;width:30px;text-align:center;font-weight:bold">9</div><div style="left:83.6px;top:708.3px;width:116.8px;height:27.4px;background:#4a4d52;border:1px solid #1f2023;border-radius:4px;box-shadow:0 1px 1px rgba(0,0,0,.4)"></div><div style="left:112.8px;top:709.3px;width:1px;height:25.4px;background:#38393d"></div><div style="left:142.0px;top:709.3px;width:1px;height:25.4px;background:#38393d"></div><div style="left:171.2px;top:709.3px;width:1px;height:25.4px;background:#38393d"></div><div class="t" style="left:83.6px;top:708.3px;font-size:16px;color:#d2d2d2;width:29.2px;height:27.4px;line-height:27.4px;text-align:center;">M</div><div class="t" style="left:112.8px;top:708.3px;font-size:16px;color:#d2d2d2;width:29.2px;height:27.4px;line-height:27.4px;text-align:center;">S</div><div style="left:150.6px;top:716.0px;width:12px;height:12px;background:#d0d0d0;border-radius:6px"></div><svg style="left:178.8px;top:715.0px;" width="14" height="14" viewBox="0 0 14 14"><path d="M6.5 1 A6 6 0 0 0 6.5 13 Z" fill="#d0d0d0"/><path d="M8.5 1.6 A6 6 0 0 1 8.5 12.4" fill="none" stroke="#d0d0d0" stroke-width="1.4"/></svg><div class="t" style="left:207px;top:714.9px;font-size:15.6px;color:#b8bbc0;">Trap Hi Hat</div><svg style="left:311px;top:715.6px;" width="22" height="14" viewBox="0 0 22 14"><path d="M0 0 L3 0 L3 8 L6.5 8 L6.5 0 L9 0 L9 8 L12.5 8 L12.5 0 L15 0 L15 8 L18.5 8 L18.5 0 L22 0 L22 14 L0 14 Z" fill="#b4b4b4"/></svg><div style="left:84px;top:742.7px;width:161px;height:6.4px;background:#24262a;border-radius:4px;box-shadow:0 0 0 1px #2d2f34"></div><div style="left:85px;top:743.2px;width:107.06500000000001px;height:5.4px;background:#7d838b;border-radius:3px"></div><div style="left:39px;top:756px;width:318px;height:1px;background:#222428"></div><div style="left:39px;top:757px;width:12px;height:36.5px;background:#2787d9"></div><div style="left:39px;top:794.5px;width:12px;height:14.5px;background:#1d62a5"></div><svg style="left:40px;top:797px;" width="11" height="10" viewBox="0 0 11 10"><path d="M1 8 L3.5 3 L6 7 L9.5 2" fill="none" stroke="#58b0f0" stroke-width="1.1"/></svg><div style="left:51.5px;top:757px;width:293.5px;height:52px;background:#393d44"></div><div style="left:345px;top:757px;width:12px;height:52px;background:#34373d;border-left:1px solid #2a2c30"></div><div class="t" style="left:53.5px;top:765.2px;font-size:15px;color:#c6c8cb;width:30px;text-align:center;font-weight:bold">10</div><div style="left:83.6px;top:760.3px;width:116.8px;height:27.4px;background:#4a4d52;border:1px solid #1f2023;border-radius:4px;box-shadow:0 1px 1px rgba(0,0,0,.4)"></div><div style="left:112.8px;top:761.3px;width:1px;height:25.4px;background:#38393d"></div><div style="left:142.0px;top:761.3px;width:1px;height:25.4px;background:#38393d"></div><div style="left:171.2px;top:761.3px;width:1px;height:25.4px;background:#38393d"></div><div class="t" style="left:83.6px;top:760.3px;font-size:16px;color:#d2d2d2;width:29.2px;height:27.4px;line-height:27.4px;text-align:center;">M</div><div class="t" style="left:112.8px;top:760.3px;font-size:16px;color:#d2d2d2;width:29.2px;height:27.4px;line-height:27.4px;text-align:center;">S</div><div style="left:150.6px;top:768.0px;width:12px;height:12px;background:#d0d0d0;border-radius:6px"></div><svg style="left:178.8px;top:767.0px;" width="14" height="14" viewBox="0 0 14 14"><path d="M6.5 1 A6 6 0 0 0 6.5 13 Z" fill="#d0d0d0"/><path d="M8.5 1.6 A6 6 0 0 1 8.5 12.4" fill="none" stroke="#d0d0d0" stroke-width="1.4"/></svg><div class="t" style="left:207px;top:766.9px;font-size:15.6px;color:#b8bbc0;">Trap Open Hat</div><svg style="left:311px;top:767.6px;" width="22" height="14" viewBox="0 0 22 14"><path d="M0 0 L3 0 L3 8 L6.5 8 L6.5 0 L9 0 L9 8 L12.5 8 L12.5 0 L15 0 L15 8 L18.5 8 L18.5 0 L22 0 L22 14 L0 14 Z" fill="#b4b4b4"/></svg><div style="left:84px;top:794.7px;width:161px;height:6.4px;background:#24262a;border-radius:4px;box-shadow:0 0 0 1px #2d2f34"></div><div style="left:85px;top:795.2px;width:70.84px;height:5.4px;background:#7d838b;border-radius:3px"></div><div style="left:39px;top:809px;width:318px;height:1px;background:#222428"></div><div style="left:39px;top:810px;width:12px;height:36.5px;background:#2787d9"></div><div style="left:39px;top:847.5px;width:12px;height:13.5px;background:#1d62a5"></div><svg style="left:40px;top:850px;" width="11" height="10" viewBox="0 0 11 10"><path d="M1 8 L3.5 3 L6 7 L9.5 2" fill="none" stroke="#58b0f0" stroke-width="1.1"/></svg><div style="left:51.5px;top:810px;width:293.5px;height:51px;background:#393d44"></div><div style="left:345px;top:810px;width:12px;height:51px;background:#34373d;border-left:1px solid #2a2c30"></div><div class="t" style="left:53.5px;top:818.2px;font-size:15px;color:#c6c8cb;width:30px;text-align:center;font-weight:bold">11</div><div style="left:83.6px;top:813.3px;width:116.8px;height:27.4px;background:#4a4d52;border:1px solid #1f2023;border-radius:4px;box-shadow:0 1px 1px rgba(0,0,0,.4)"></div><div style="left:112.8px;top:814.3px;width:1px;height:25.4px;background:#38393d"></div><div style="left:142.0px;top:814.3px;width:1px;height:25.4px;background:#38393d"></div><div style="left:171.2px;top:814.3px;width:1px;height:25.4px;background:#38393d"></div><div class="t" style="left:83.6px;top:813.3px;font-size:16px;color:#d2d2d2;width:29.2px;height:27.4px;line-height:27.4px;text-align:center;">M</div><div class="t" style="left:112.8px;top:813.3px;font-size:16px;color:#d2d2d2;width:29.2px;height:27.4px;line-height:27.4px;text-align:center;">S</div><div style="left:150.6px;top:821.0px;width:12px;height:12px;background:#d0d0d0;border-radius:6px"></div><svg style="left:178.8px;top:820.0px;" width="14" height="14" viewBox="0 0 14 14"><path d="M6.5 1 A6 6 0 0 0 6.5 13 Z" fill="#d0d0d0"/><path d="M8.5 1.6 A6 6 0 0 1 8.5 12.4" fill="none" stroke="#d0d0d0" stroke-width="1.4"/></svg><div class="t" style="left:207px;top:819.9px;font-size:15.6px;color:#b8bbc0;">Percussion</div><svg style="left:311px;top:820.6px;" width="22" height="14" viewBox="0 0 22 14"><path d="M0 0 L3 0 L3 8 L6.5 8 L6.5 0 L9 0 L9 8 L12.5 8 L12.5 0 L15 0 L15 8 L18.5 8 L18.5 0 L22 0 L22 14 L0 14 Z" fill="#b4b4b4"/></svg><div style="left:84px;top:847.7px;width:161px;height:6.4px;background:#24262a;border-radius:4px;box-shadow:0 0 0 1px #2d2f34"></div><div style="left:85px;top:848.2px;width:122.36px;height:5.4px;background:#7d838b;border-radius:3px"></div><div style="left:39px;top:861px;width:318px;height:1px;background:#222428"></div><div style="left:39px;top:862px;width:12px;height:36.5px;background:#2787d9"></div><div style="left:39px;top:899.5px;width:12px;height:14.5px;background:#1d62a5"></div><svg style="left:40px;top:902px;" width="11" height="10" viewBox="0 0 11 10"><path d="M1 8 L3.5 3 L6 7 L9.5 2" fill="none" stroke="#58b0f0" stroke-width="1.1"/></svg><div style="left:51.5px;top:862px;width:293.5px;height:52px;background:#393d44"></div><div style="left:345px;top:862px;width:12px;height:52px;background:#34373d;border-left:1px solid #2a2c30"></div><div class="t" style="left:53.5px;top:870.2px;font-size:15px;color:#c6c8cb;width:30px;text-align:center;font-weight:bold">12</div><div style="left:83.6px;top:865.3px;width:116.8px;height:27.4px;background:#4a4d52;border:1px solid #1f2023;border-radius:4px;box-shadow:0 1px 1px rgba(0,0,0,.4)"></div><div style="left:112.8px;top:866.3px;width:1px;height:25.4px;background:#38393d"></div><div style="left:142.0px;top:866.3px;width:1px;height:25.4px;background:#38393d"></div><div style="left:171.2px;top:866.3px;width:1px;height:25.4px;background:#38393d"></div><div class="t" style="left:83.6px;top:865.3px;font-size:16px;color:#d2d2d2;width:29.2px;height:27.4px;line-height:27.4px;text-align:center;">M</div><div class="t" style="left:112.8px;top:865.3px;font-size:16px;color:#d2d2d2;width:29.2px;height:27.4px;line-height:27.4px;text-align:center;">S</div><div style="left:150.6px;top:873.0px;width:12px;height:12px;background:#393b3f;border-radius:6px"></div><svg style="left:178.8px;top:872.0px;" width="14" height="14" viewBox="0 0 14 14"><path d="M6.5 1 A6 6 0 0 0 6.5 13 Z" fill="#393b3f"/><path d="M8.5 1.6 A6 6 0 0 1 8.5 12.4" fill="none" stroke="#393b3f" stroke-width="1.4"/></svg><div class="t" style="left:207px;top:871.9px;font-size:15.6px;color:#b8bbc0;">Bossa Loop</div><svg style="left:312px;top:870.5px;" width="21" height="17.5" viewBox="0 0 21 17.5"><path d="M0 9.3 L4.7 9.3 L3 14.4 Q2.3 15.2 1.7 14.4 Z M4.5 9.3 L9.3 9.3 L7.6 2.6 Q6.9 1.6 6.2 2.6 Z M9.1 9.3 L12.5 9.3 L11.3 16 Q10.8 16.8 10.3 16 Z M12.3 9.3 L16.6 9.3 L15.2 .9 Q14.5 -.2 13.8 .9 Z M16.4 9.3 L21 9.3 L19.3 14.6 Q18.7 15.4 18.1 14.6 Z" fill="#c0c0c0"/></svg><div style="left:84px;top:899.7px;width:161px;height:6.4px;background:#24262a;border-radius:4px;box-shadow:0 0 0 1px #2d2f34"></div><div style="left:85px;top:900.2px;width:91.77px;height:5.4px;background:#7d838b;border-radius:3px"></div><div style="left:345.5px;top:896px;width:5px;height:18px;background:#3ea0e4"></div><div style="left:351.5px;top:896px;width:5px;height:18px;background:#3ea0e4"></div><div style="left:39px;top:914px;width:318px;height:1px;background:#222428"></div>
<div style="left:357px;top:100px;width:650px;height:40px;background:#383c43"></div><div style="left:357px;top:101px;width:650px;height:8px;background:#6c7079"></div><svg style="left:357px;top:101px;" width="14" height="8" viewBox="0 0 14 8"><polygon points="0,3 0,8 13,8 " fill="#50545b"/></svg><div class="t" style="left:358.2px;top:110.3px;font-size:14px;color:#c4c6c9;">1</div><div style="left:357.2px;top:129px;width:1.5px;height:11px;background:#e6e6e6"></div><div style="left:413.2px;top:135px;width:1.2px;height:5px;background:#c8c8c8"></div><div class="t" style="left:471.6px;top:110.3px;font-size:14px;color:#c4c6c9;">5</div><div style="left:469.6px;top:129px;width:1.5px;height:11px;background:#e6e6e6"></div><div style="left:525.6px;top:135px;width:1.2px;height:5px;background:#c8c8c8"></div><div class="t" style="left:584.0px;top:110.3px;font-size:14px;color:#c4c6c9;">9</div><div style="left:582.0px;top:129px;width:1.5px;height:11px;background:#e6e6e6"></div><div style="left:638.0px;top:135px;width:1.2px;height:5px;background:#c8c8c8"></div><div class="t" style="left:696.4000000000001px;top:110.3px;font-size:14px;color:#c4c6c9;">13</div><div style="left:694.4000000000001px;top:129px;width:1.5px;height:11px;background:#e6e6e6"></div><div style="left:750.4000000000001px;top:135px;width:1.2px;height:5px;background:#c8c8c8"></div><div class="t" style="left:808.8px;top:110.3px;font-size:14px;color:#c4c6c9;">17</div><div style="left:806.8px;top:129px;width:1.5px;height:11px;background:#e6e6e6"></div><div style="left:862.8px;top:135px;width:1.2px;height:5px;background:#c8c8c8"></div><div class="t" style="left:921.2px;top:110.3px;font-size:14px;color:#c4c6c9;">21</div><div style="left:919.2px;top:129px;width:1.5px;height:11px;background:#e6e6e6"></div><div style="left:975.2px;top:135px;width:1.2px;height:5px;background:#c8c8c8"></div><div style="left:357px;top:139.5px;width:650px;height:1.5px;background:#1b1c1f"></div><div style="left:357px;top:141px;width:113px;height:34px;background:#2d5bff"></div><div style="left:470px;top:141px;width:448px;height:34px;background:#95fd2b"></div><div style="left:918.5px;top:141px;width:88.5px;height:34px;background:#ff7a24"></div><div class="t" style="left:368.5px;top:146.5px;font-size:21px;color:#c4d0ff;letter-spacing:0px">Intro</div><div class="t" style="left:481px;top:146.5px;font-size:21px;color:#3c6614;letter-spacing:-.3px">Verse</div><div class="t" style="left:930px;top:146.5px;font-size:21px;color:#7c3608;letter-spacing:-.3px">Chorus</div><div style="left:357px;top:175px;width:671px;height:5px;background:#1f2124"></div><div style="left:357px;top:180px;width:650px;height:726px;background:#2a2d32"></div><div style="left:357px;top:442px;width:650px;height:52px;background:#323539"></div><div style="left:357px;top:231px;width:650px;height:1px;background:#1e1f22"></div><div style="left:357px;top:284px;width:650px;height:1px;background:#1e1f22"></div><div style="left:357px;top:336px;width:650px;height:1px;background:#1e1f22"></div><div style="left:357px;top:389px;width:650px;height:1px;background:#1e1f22"></div><div style="left:357px;top:441px;width:650px;height:1px;background:#1e1f22"></div><div style="left:357px;top:494px;width:650px;height:1px;background:#1e1f22"></div><div style="left:357px;top:546px;width:650px;height:1px;background:#1e1f22"></div><div style="left:357px;top:599px;width:650px;height:1px;background:#1e1f22"></div><div style="left:357px;top:651px;width:650px;height:1px;background:#1e1f22"></div><div style="left:357px;top:704px;width:650px;height:1px;background:#1e1f22"></div><div style="left:357px;top:756px;width:650px;height:1px;background:#1e1f22"></div><div style="left:357px;top:809px;width:650px;height:1px;background:#1e1f22"></div><div style="left:357px;top:861px;width:650px;height:1px;background:#1e1f22"></div><div style="left:357px;top:914px;width:650px;height:1px;background:#1e1f22"></div><div style="left:359px;top:181px;width:660px;height:49.5px;background:#3a3b3e;border:2px solid #6c6e72;border-radius:7px"></div><div class="t" style="left:364px;top:184.5px;font-size:14px;color:#f4f4f4;">MUSIC BUS</div><svg style="left:367px;top:216px;" width="11" height="8" viewBox="0 0 11 8"><path d="M0 8 L0 2 L3 2 L4 0 L11 0 L11 8 Z" fill="#aeb1b5"/></svg><div style="left:470px;top:233px;width:110px;height:50.5px;background:#243f58;border:2px solid #2b88dc;border-radius:6px;overflow:hidden"><div class="t" style="left:4px;top:3px;font-size:14px;color:#f0f0f0;">Drums</div><svg style="left:6px;top:33px;" width="11" height="8" viewBox="0 0 11 8"><path d="M0 8 L0 2 L3 2 L4 0 L11 0 L11 8 Z" fill="#aeb1b5"/></svg></div><div style="left:582px;top:233px;width:98px;height:50.5px;background:#243f58;border:2px solid #2b88dc;border-radius:6px;overflow:hidden"><div class="t" style="left:4px;top:3px;font-size:14px;color:#f0f0f0;">Drums</div><svg style="left:6px;top:33px;" width="11" height="8" viewBox="0 0 11 8"><path d="M0 8 L0 2 L3 2 L4 0 L11 0 L11 8 Z" fill="#aeb1b5"/></svg></div><div style="left:694px;top:233px;width:56px;height:50.5px;background:#243f58;border:2px solid #2b88dc;border-radius:6px;overflow:hidden"><div class="t" style="left:4px;top:3px;font-size:14px;color:#f0f0f0;">Drums</div><svg style="left:6px;top:33px;" width="11" height="8" viewBox="0 0 11 8"><path d="M0 8 L0 2 L3 2 L4 0 L11 0 L11 8 Z" fill="#aeb1b5"/></svg></div><div style="left:757.5px;top:233px;width:47.0px;height:50.5px;background:#243f58;border:2px solid #2b88dc;border-radius:6px;overflow:hidden"><div class="t" style="left:4px;top:3px;font-size:14px;color:#f0f0f0;">Drum:</div><svg style="left:6px;top:33px;" width="11" height="8" viewBox="0 0 11 8"><path d="M0 8 L0 2 L3 2 L4 0 L11 0 L11 8 Z" fill="#aeb1b5"/></svg></div><div style="left:806.5px;top:233px;width:82.0px;height:50.5px;background:#243f58;border:2px solid #2b88dc;border-radius:6px;overflow:hidden"><div class="t" style="left:4px;top:3px;font-size:14px;color:#f0f0f0;">Drums</div><svg style="left:6px;top:33px;" width="11" height="8" viewBox="0 0 11 8"><path d="M0 8 L0 2 L3 2 L4 0 L11 0 L11 8 Z" fill="#aeb1b5"/></svg></div><div style="left:919px;top:233px;width:101px;height:50.5px;background:#243f58;border:2px solid #2b88dc;border-radius:6px;overflow:hidden"><div class="t" style="left:4px;top:3px;font-size:14px;color:#f0f0f0;">Drums</div><svg style="left:6px;top:33px;" width="11" height="8" viewBox="0 0 11 8"><path d="M0 8 L0 2 L3 2 L4 0 L11 0 L11 8 Z" fill="#aeb1b5"/></svg></div><div style="left:462.5px;top:233px;width:4.5px;height:50.5px;border:1.6px solid #2b88dc;border-radius:2px;background:#243f58"></div><div style="left:890px;top:233px;width:4.2px;height:50.5px;border:1.5px solid #2b88dc;border-radius:2px;background:#243f58"></div><div style="left:897px;top:233px;width:4.2px;height:50.5px;border:1.5px solid #2b88dc;border-radius:2px;background:#243f58"></div><div style="left:902.5px;top:233px;width:4.2px;height:50.5px;border:1.5px solid #2b88dc;border-radius:2px;background:#243f58"></div><div style="left:908px;top:233px;width:4.2px;height:50.5px;border:1.5px solid #2b88dc;border-radius:2px;background:#243f58"></div><div style="left:913px;top:233px;width:4.2px;height:50.5px;border:1.5px solid #2b88dc;border-radius:2px;background:#243f58"></div><div style="left:470px;top:286px;width:110px;height:49.5px;background:#3f566b;border-radius:5px;overflow:hidden"><svg style="left:0px;top:2px;" width="110" height="46" viewBox="0 0 110 46"><path d="M4.2 0.0 L5.0 0.0 Q7.7 23.0 5.0 46.0 L4.2 46.0 Q1.5 23.0 4.2 0.0 Z" fill="#253b50"/><path d="M16.8 1.8 L17.6 1.8 Q20.5 23.0 17.6 44.2 L16.8 44.2 Q13.9 23.0 16.8 1.8 Z" fill="#253b50"/><path d="M27.0 0.0 L27.8 0.0 Q30.3 23.0 27.8 46.0 L27.0 46.0 Q24.5 23.0 27.0 0.0 Z" fill="#253b50"/><path d="M32.4 0.0 L33.2 0.0 Q36.7 23.0 33.2 46.0 L32.4 46.0 Q28.9 23.0 32.4 0.0 Z" fill="#253b50"/><path d="M44.3 0.0 L45.1 0.0 Q47.8 23.0 45.1 46.0 L44.3 46.0 Q41.6 23.0 44.3 0.0 Z" fill="#253b50"/><path d="M54.9 1.8 L55.7 1.8 Q59.2 23.0 55.7 44.2 L54.9 44.2 Q51.4 23.0 54.9 1.8 Z" fill="#253b50"/><path d="M60.6 0.0 L61.4 0.0 Q64.9 23.0 61.4 46.0 L60.6 46.0 Q57.1 23.0 60.6 0.0 Z" fill="#253b50"/><path d="M72.6 0.0 L73.4 0.0 Q76.1 23.0 73.4 46.0 L72.6 46.0 Q69.9 23.0 72.6 0.0 Z" fill="#253b50"/><path d="M77.9 0.0 L78.7 0.0 Q82.2 23.0 78.7 46.0 L77.9 46.0 Q74.4 23.0 77.9 0.0 Z" fill="#253b50"/><path d="M83.0 0.0 L83.8 0.0 Q86.3 23.0 83.8 46.0 L83.0 46.0 Q80.5 23.0 83.0 0.0 Z" fill="#253b50"/><path d="M88.6 0.0 L89.4 0.0 Q91.9 23.0 89.4 46.0 L88.6 46.0 Q86.1 23.0 88.6 0.0 Z" fill="#253b50"/><path d="M100.8 0.0 L101.6 0.0 Q104.1 23.0 101.6 46.0 L100.8 46.0 Q98.3 23.0 100.8 0.0 Z" fill="#253b50"/><path d="M105.6 1.8 L106.4 1.8 Q109.9 23.0 106.4 44.2 L105.6 44.2 Q102.1 23.0 105.6 1.8 Z" fill="#253b50"/><rect x="0" y="22.7" width="110" height=".6" fill="#253b50" opacity=".5"/></svg><div style="left:1px;top:1px;width:36px;height:20px;background:#455b70;border-radius:4px"></div><div class="t" style="left:5px;top:3px;font-size:14px;color:#b4c0cc;">Kick</div></div><div style="left:582px;top:286px;width:98px;height:49.5px;background:#3f566b;border-radius:5px;overflow:hidden"><svg style="left:0px;top:2px;" width="98" height="46" viewBox="0 0 98 46"><path d="M4.2 0.0 L5.0 0.0 Q7.7 23.0 5.0 46.0 L4.2 46.0 Q1.5 23.0 4.2 0.0 Z" fill="#253b50"/><path d="M16.8 1.8 L17.6 1.8 Q20.1 23.0 17.6 44.2 L16.8 44.2 Q14.3 23.0 16.8 1.8 Z" fill="#253b50"/><path d="M27.0 0.0 L27.8 0.0 Q31.3 23.0 27.8 46.0 L27.0 46.0 Q23.5 23.0 27.0 0.0 Z" fill="#253b50"/><path d="M32.4 0.0 L33.2 0.0 Q35.7 23.0 33.2 46.0 L32.4 46.0 Q29.9 23.0 32.4 0.0 Z" fill="#253b50"/><path d="M44.3 1.8 L45.1 1.8 Q47.6 23.0 45.1 44.2 L44.3 44.2 Q41.8 23.0 44.3 1.8 Z" fill="#253b50"/><path d="M54.9 0.0 L55.7 0.0 Q58.6 23.0 55.7 46.0 L54.9 46.0 Q52.0 23.0 54.9 0.0 Z" fill="#253b50"/><path d="M60.6 0.0 L61.4 0.0 Q64.1 23.0 61.4 46.0 L60.6 46.0 Q57.9 23.0 60.6 0.0 Z" fill="#253b50"/><path d="M72.6 0.0 L73.4 0.0 Q76.3 23.0 73.4 46.0 L72.6 46.0 Q69.7 23.0 72.6 0.0 Z" fill="#253b50"/><path d="M77.9 0.0 L78.7 0.0 Q81.2 23.0 78.7 46.0 L77.9 46.0 Q75.4 23.0 77.9 0.0 Z" fill="#253b50"/><path d="M83.0 0.0 L83.8 0.0 Q86.5 23.0 83.8 46.0 L83.0 46.0 Q80.3 23.0 83.0 0.0 Z" fill="#253b50"/><path d="M88.6 0.0 L89.4 0.0 Q92.3 23.0 89.4 46.0 L88.6 46.0 Q85.7 23.0 88.6 0.0 Z" fill="#253b50"/><rect x="0" y="22.7" width="98" height=".6" fill="#253b50" opacity=".5"/></svg><div style="left:1px;top:1px;width:36px;height:20px;background:#455b70;border-radius:4px"></div><div class="t" style="left:5px;top:3px;font-size:14px;color:#b4c0cc;">Kick</div></div><div style="left:694px;top:286px;width:55.5px;height:49.5px;background:#3f566b;border-radius:5px;overflow:hidden"><svg style="left:0px;top:2px;" width="55.5" height="46" viewBox="0 0 55.5 46"><path d="M4.2 0.0 L5.0 0.0 Q7.9 23.0 5.0 46.0 L4.2 46.0 Q1.3 23.0 4.2 0.0 Z" fill="#253b50"/><path d="M16.8 1.8 L17.6 1.8 Q20.1 23.0 17.6 44.2 L16.8 44.2 Q14.3 23.0 16.8 1.8 Z" fill="#253b50"/><path d="M27.0 0.0 L27.8 0.0 Q30.5 23.0 27.8 46.0 L27.0 46.0 Q24.3 23.0 27.0 0.0 Z" fill="#253b50"/><path d="M32.4 0.0 L33.2 0.0 Q35.9 23.0 33.2 46.0 L32.4 46.0 Q29.7 23.0 32.4 0.0 Z" fill="#253b50"/><path d="M44.3 1.8 L45.1 1.8 Q48.0 23.0 45.1 44.2 L44.3 44.2 Q41.4 23.0 44.3 1.8 Z" fill="#253b50"/><rect x="0" y="22.7" width="55.5" height=".6" fill="#253b50" opacity=".5"/></svg><div style="left:1px;top:1px;width:36px;height:20px;background:#455b70;border-radius:4px"></div><div class="t" style="left:5px;top:3px;font-size:14px;color:#b4c0cc;">Kick</div></div><div style="left:757.5px;top:286px;width:47.0px;height:49.5px;background:#3f566b;border-radius:5px;overflow:hidden"><svg style="left:0px;top:2px;" width="47.0" height="46" viewBox="0 0 47.0 46"><path d="M4.2 1.8 L5.0 1.8 Q7.5 23.0 5.0 44.2 L4.2 44.2 Q1.7 23.0 4.2 1.8 Z" fill="#253b50"/><path d="M16.8 0.0 L17.6 0.0 Q20.5 23.0 17.6 46.0 L16.8 46.0 Q13.9 23.0 16.8 0.0 Z" fill="#253b50"/><path d="M27.0 0.0 L27.8 0.0 Q30.3 23.0 27.8 46.0 L27.0 46.0 Q24.5 23.0 27.0 0.0 Z" fill="#253b50"/><path d="M32.4 0.0 L33.2 0.0 Q36.7 23.0 33.2 46.0 L32.4 46.0 Q28.9 23.0 32.4 0.0 Z" fill="#253b50"/><path d="M44.3 0.0 L45.1 0.0 Q48.0 23.0 45.1 46.0 L44.3 46.0 Q41.4 23.0 44.3 0.0 Z" fill="#253b50"/><rect x="0" y="22.7" width="47.0" height=".6" fill="#253b50" opacity=".5"/></svg><div style="left:1px;top:1px;width:36px;height:20px;background:#455b70;border-radius:4px"></div><div class="t" style="left:5px;top:3px;font-size:14px;color:#b4c0cc;">Kick</div></div><div style="left:806.5px;top:286px;width:25.0px;height:49.5px;background:#3f566b;border-radius:5px;overflow:hidden"><svg style="left:0px;top:2px;" width="25.0" height="46" viewBox="0 0 25.0 46"><path d="M4.2 0.0 L5.0 0.0 Q7.9 23.0 5.0 46.0 L4.2 46.0 Q1.3 23.0 4.2 0.0 Z" fill="#253b50"/><path d="M16.8 0.0 L17.6 0.0 Q21.1 23.0 17.6 46.0 L16.8 46.0 Q13.3 23.0 16.8 0.0 Z" fill="#253b50"/><rect x="0" y="22.7" width="25.0" height=".6" fill="#253b50" opacity=".5"/></svg><div style="left:1px;top:1px;width:23.0px;height:20px;background:#455b70;border-radius:4px"></div><div class="t" style="left:5px;top:3px;font-size:14px;color:#b4c0cc;">Ki</div></div><div style="left:841.5px;top:286px;width:47.0px;height:49.5px;background:#3f566b;border-radius:5px;overflow:hidden"><svg style="left:0px;top:2px;" width="47.0" height="46" viewBox="0 0 47.0 46"><path d="M4.2 0.0 L5.0 0.0 Q7.7 23.0 5.0 46.0 L4.2 46.0 Q1.5 23.0 4.2 0.0 Z" fill="#253b50"/><path d="M16.8 0.0 L17.6 0.0 Q21.1 23.0 17.6 46.0 L16.8 46.0 Q13.3 23.0 16.8 0.0 Z" fill="#253b50"/><path d="M27.0 0.0 L27.8 0.0 Q30.5 23.0 27.8 46.0 L27.0 46.0 Q24.3 23.0 27.0 0.0 Z" fill="#253b50"/><path d="M32.4 0.0 L33.2 0.0 Q35.7 23.0 33.2 46.0 L32.4 46.0 Q29.9 23.0 32.4 0.0 Z" fill="#253b50"/><path d="M44.3 0.0 L45.1 0.0 Q47.8 23.0 45.1 46.0 L44.3 46.0 Q41.6 23.0 44.3 0.0 Z" fill="#253b50"/><rect x="0" y="22.7" width="47.0" height=".6" fill="#253b50" opacity=".5"/></svg><div style="left:1px;top:1px;width:36px;height:20px;background:#455b70;border-radius:4px"></div><div class="t" style="left:5px;top:3px;font-size:14px;color:#b4c0cc;">Kick</div></div><div style="left:834px;top:286px;width:5px;height:49.5px;background:#3f566b;border-radius:2px"></div><div style="left:890px;top:286px;width:4.2px;height:49.5px;background:#3f566b;border-radius:2px"></div><div style="left:897px;top:286px;width:4.2px;height:49.5px;background:#3f566b;border-radius:2px"></div><div style="left:902.5px;top:286px;width:4.2px;height:49.5px;background:#3f566b;border-radius:2px"></div><div style="left:908px;top:286px;width:4.2px;height:49.5px;background:#3f566b;border-radius:2px"></div><div style="left:913px;top:286px;width:4.2px;height:49.5px;background:#3f566b;border-radius:2px"></div><div style="left:919px;top:337.8px;width:101px;height:50px;background:#415468;border-radius:6px;overflow:hidden"><div style="left:2px;top:2px;width:75.7px;height:18px;background:#47607a;border-radius:4px"></div><div class="t" style="left:7px;top:2.5px;font-size:14px;color:#b8c2cc;">Trap Kick</div><div style="left:2px;top:23px;width:1.5px;height:1.6px;background:#8fa0b0"></div><div style="left:11px;top:23px;width:1.5px;height:1.6px;background:#8fa0b0"></div><div style="left:35px;top:23px;width:7px;height:1.6px;background:#8fa0b0"></div><div style="left:55px;top:22.6px;width:9px;height:1.6px;background:#8fa0b0"></div><div style="left:67px;top:23px;width:2px;height:1.6px;background:#8fa0b0"></div><div style="left:84px;top:23px;width:4px;height:1.6px;background:#8fa0b0"></div></div><div style="left:919px;top:495.8px;width:101px;height:50px;background:#415468;border-radius:6px;overflow:hidden"><div style="left:2px;top:2px;width:83.0px;height:18px;background:#47607a;border-radius:4px"></div><div class="t" style="left:7px;top:2.5px;font-size:14px;color:#b8c2cc;">Trap Snare</div><div style="left:14px;top:24px;width:2px;height:1.6px;background:#8fa0b0"></div><div style="left:41px;top:24px;width:2px;height:1.6px;background:#8fa0b0"></div><div style="left:70px;top:24px;width:2px;height:1.6px;background:#8fa0b0"></div></div><div style="left:919px;top:705.8px;width:101px;height:50px;background:#415468;border-radius:6px;overflow:hidden"><div style="left:2px;top:2px;width:104.89999999999999px;height:18px;background:#47607a;border-radius:4px"></div><div class="t" style="left:7px;top:2.5px;font-size:14px;color:#b8c2cc;">Trap Hi Hat _</div><div style="left:5px;top:24px;width:2px;height:1.6px;background:#8fa0b0"></div><div style="left:12px;top:25px;width:8px;height:1.6px;background:#8fa0b0"></div><div style="left:24px;top:24px;width:3px;height:1.6px;background:#8fa0b0"></div><div style="left:36px;top:25px;width:10px;height:1.6px;background:#8fa0b0"></div><div style="left:52px;top:24px;width:2px;height:1.6px;background:#8fa0b0"></div><div style="left:60px;top:25px;width:12px;height:1.6px;background:#8fa0b0"></div><div style="left:78px;top:24px;width:3px;height:1.6px;background:#8fa0b0"></div></div><div style="left:919px;top:757.8px;width:101px;height:50px;background:#415468;border-radius:6px;overflow:hidden"><div style="left:2px;top:2px;width:90.3px;height:18px;background:#47607a;border-radius:4px"></div><div class="t" style="left:7px;top:2.5px;font-size:14px;color:#b8c2cc;">Trap Open H</div><div style="left:2px;top:24px;width:1.5px;height:1.6px;background:#8fa0b0"></div><div style="left:14px;top:24px;width:2px;height:1.6px;background:#8fa0b0"></div><div style="left:27px;top:24px;width:2px;height:1.6px;background:#8fa0b0"></div><div style="left:41px;top:24px;width:2px;height:1.6px;background:#8fa0b0"></div><div style="left:55px;top:24px;width:3px;height:1.6px;background:#8fa0b0"></div><div style="left:70px;top:24px;width:2px;height:1.6px;background:#8fa0b0"></div><div style="left:83px;top:24px;width:2px;height:1.6px;background:#8fa0b0"></div></div><div style="left:806.5px;top:442.8px;width:82.0px;height:50px;background:#3f566b;border-radius:5px;overflow:hidden"><svg style="left:0px;top:2px;" width="82.0" height="46" viewBox="0 0 82.0 46"><path d="M5.6 1.8 L6.4 1.8 Q9.9 23.0 6.4 44.2 L5.6 44.2 Q2.1 23.0 5.6 1.8 Z" fill="#253b50"/><path d="M12.1 0.0 L12.9 0.0 Q16.4 23.0 12.9 46.0 L12.1 46.0 Q8.6 23.0 12.1 0.0 Z" fill="#253b50"/><path d="M24.1 1.8 L24.9 1.8 Q27.6 23.0 24.9 44.2 L24.1 44.2 Q21.4 23.0 24.1 1.8 Z" fill="#253b50"/><path d="M32.1 0.0 L32.9 0.0 Q35.6 23.0 32.9 46.0 L32.1 46.0 Q29.4 23.0 32.1 0.0 Z" fill="#253b50"/><path d="M38.1 0.0 L38.9 0.0 Q42.4 23.0 38.9 46.0 L38.1 46.0 Q34.6 23.0 38.1 0.0 Z" fill="#253b50"/><path d="M44.1 0.0 L44.9 0.0 Q47.6 23.0 44.9 46.0 L44.1 46.0 Q41.4 23.0 44.1 0.0 Z" fill="#253b50"/><path d="M50.6 1.8 L51.4 1.8 Q53.9 23.0 51.4 44.2 L50.6 44.2 Q48.1 23.0 50.6 1.8 Z" fill="#253b50"/><path d="M55.1 0.0 L55.9 0.0 Q59.4 23.0 55.9 46.0 L55.1 46.0 Q51.6 23.0 55.1 0.0 Z" fill="#253b50"/><path d="M63.1 0.0 L63.9 0.0 Q66.4 23.0 63.9 46.0 L63.1 46.0 Q60.6 23.0 63.1 0.0 Z" fill="#253b50"/><path d="M67.1 0.0 L67.9 0.0 Q70.4 23.0 67.9 46.0 L67.1 46.0 Q64.6 23.0 67.1 0.0 Z" fill="#253b50"/><path d="M73.1 0.0 L73.9 0.0 Q76.6 23.0 73.9 46.0 L73.1 46.0 Q70.4 23.0 73.1 0.0 Z" fill="#253b50"/><path d="M78.1 1.8 L78.9 1.8 Q81.4 23.0 78.9 44.2 L78.1 44.2 Q75.6 23.0 78.1 1.8 Z" fill="#253b50"/><rect x="0" y="22.7" width="82.0" height=".6" fill="#253b50" opacity=".5"/></svg><div style="left:1px;top:1px;width:43.0px;height:19px;background:#425d78;border-radius:4px"></div><div class="t" style="left:5px;top:2.5px;font-size:14px;color:#aab6c2;">Snare</div></div><div style="left:806.5px;top:652.8px;width:82.0px;height:50px;background:#223545;border-radius:5px;overflow:hidden"><svg style="left:0px;top:2px;" width="82.0" height="46" viewBox="0 0 82.0 46"><path d="M0 0 L0.0 2 L1.7 12.2 L3.4 2 L5.1 14.3 L6.8 2 L8.5 7.1 L10.2 2 L11.9 10.0 L13.6 2 L15.3 14.6 L17.0 2 L18.7 13.1 L20.4 2 L22.1 8.6 L23.8 2 L25.5 8.8 L27.2 2 L28.9 7.6 L30.6 2 L32.3 7.8 L34.0 2 L35.7 10.7 L37.4 2 L39.1 16.3 L40.8 2 L42.5 7.7 L44.2 2 L45.9 12.6 L47.6 2 L49.3 17.9 L51.0 2 L52.7 8.2 L54.4 2 L56.1 8.5 L57.8 2 L59.5 13.8 L61.2 2 L62.9 14.7 L64.6 2 L66.3 8.9 L68.0 2 L69.7 11.4 L71.4 2 L73.1 13.6 L74.8 2 L76.5 11.2 L78.2 2 L79.9 15.0 L81.6 2 L83.3 17.7 L82.0 2 L82.0 0 Z" fill="#3a5268"/><path d="M0 46 L0.0 44 L1.7 31.8 L3.4 44 L5.1 37.4 L6.8 44 L8.5 34.9 L10.2 44 L11.9 30.1 L13.6 44 L15.3 32.4 L17.0 44 L18.7 31.7 L20.4 44 L22.1 34.2 L23.8 44 L25.5 29.0 L27.2 44 L28.9 30.0 L30.6 44 L32.3 31.4 L34.0 44 L35.7 34.5 L37.4 44 L39.1 38.8 L40.8 44 L42.5 28.9 L44.2 44 L45.9 38.0 L47.6 44 L49.3 28.6 L51.0 44 L52.7 34.3 L54.4 44 L56.1 35.6 L57.8 44 L59.5 37.2 L61.2 44 L62.9 38.4 L64.6 44 L66.3 30.0 L68.0 44 L69.7 34.4 L71.4 44 L73.1 33.8 L74.8 44 L76.5 38.7 L78.2 44 L79.9 28.4 L81.6 44 L83.3 31.7 L82.0 44 L82.0 46 Z" fill="#3a5268"/></svg><div style="left:1px;top:1px;width:35.8px;height:19px;background:#34495c;border-radius:4px"></div><div class="t" style="left:5px;top:2.5px;font-size:14px;color:#aab6c2;">Hats</div></div><div style="left:806.5px;top:862.8px;width:82.0px;height:50px;background:#223545;border-radius:5px;overflow:hidden"><svg style="left:0px;top:2px;" width="82.0" height="46" viewBox="0 0 82.0 46"><path d="M0 0 L0.0 2 L2.8 8.1 L5.5 2 L8.2 14.9 L11.0 2 L13.8 7.0 L16.5 2 L19.2 6.4 L22.0 2 L24.8 15.7 L27.5 2 L30.2 12.5 L33.0 2 L35.8 8.7 L38.5 2 L41.2 17.4 L44.0 2 L46.8 4.2 L49.5 2 L52.2 6.3 L55.0 2 L57.8 17.0 L60.5 2 L63.2 17.2 L66.0 2 L68.8 19.2 L71.5 2 L74.2 8.1 L77.0 2 L79.8 11.8 L82.0 2 L82.0 0 Z" fill="#3a5268"/><path d="M0 46 L0.0 44 L2.8 31.0 L5.5 44 L8.2 28.4 L11.0 44 L13.8 38.3 L16.5 44 L19.2 38.4 L22.0 44 L24.8 39.9 L27.5 44 L30.2 38.6 L33.0 44 L35.8 35.1 L38.5 44 L41.2 32.3 L44.0 44 L46.8 37.6 L49.5 44 L52.2 28.1 L55.0 44 L57.8 29.1 L60.5 44 L63.2 30.1 L66.0 44 L68.8 29.3 L71.5 44 L74.2 28.4 L77.0 44 L79.8 29.9 L82.0 44 L82.0 46 Z" fill="#3a5268"/></svg><div style="left:1px;top:1px;width:50.2px;height:19px;background:#34495c;border-radius:4px"></div><div class="t" style="left:5px;top:2.5px;font-size:14px;color:#aab6c2;">Impact</div></div><div style="left:412.9px;top:232px;width:1.2px;height:674px;background:rgba(255,255,255,.085)"></div><div style="left:469.1px;top:232px;width:1.2px;height:674px;background:rgba(255,255,255,.085)"></div><div style="left:525.3px;top:232px;width:1.2px;height:674px;background:rgba(255,255,255,.085)"></div><div style="left:581.5px;top:232px;width:1.2px;height:674px;background:rgba(255,255,255,.085)"></div><div style="left:637.7px;top:232px;width:1.2px;height:674px;background:rgba(255,255,255,.085)"></div><div style="left:693.9000000000001px;top:232px;width:1.2px;height:674px;background:rgba(255,255,255,.085)"></div><div style="left:750.1px;top:232px;width:1.2px;height:674px;background:rgba(255,255,255,.085)"></div><div style="left:806.3px;top:232px;width:1.2px;height:674px;background:rgba(255,255,255,.085)"></div><div style="left:862.5px;top:232px;width:1.2px;height:674px;background:rgba(255,255,255,.085)"></div><div style="left:918.7px;top:232px;width:1.2px;height:674px;background:rgba(255,255,255,.085)"></div><div style="left:974.9000000000001px;top:232px;width:1.2px;height:674px;background:rgba(255,255,255,.085)"></div><div style="left:755px;top:100px;width:1.2px;height:806px;background:#c4c6c8"></div>
<div style="left:11px;top:906px;width:346px;height:21.5px;background:#28292c;border-radius:0 0 0 6px"></div><div class="t" style="left:25.5px;top:911px;font-size:13.5px;color:#e0e0e0;width:30px;text-align:center;">M</div><div class="t" style="left:87px;top:911px;font-size:13.5px;color:#e0e0e0;width:30px;text-align:center;">S</div><svg style="left:154.5px;top:910px;" width="16" height="16" viewBox="0 0 16 16"><path d="M5 3.2 A5.6 5.6 0 1 0 11 3.2" fill="none" stroke="#2b8be6" stroke-width="1.9"/><path d="M8 1 L8 7.5" stroke="#2b8be6" stroke-width="1.9"/></svg><div class="t" style="left:223px;top:911px;font-size:13.5px;color:#c8c8c8;width:60px;text-align:center;">Klein</div><svg style="left:312px;top:914px;" width="10" height="6" viewBox="0 0 10 6"><polygon points="0,0 10,0 5.0,6" fill="#8a8a8a"/></svg><svg style="left:338px;top:911px;" width="11" height="11" viewBox="0 0 11 11"><path d="M0 1 L11 1 M0 4 L11 4 M0 7 L11 7 M0 10 L11 10" stroke="#8a8a8a" stroke-width="1.6"/></svg><div style="left:71px;top:906px;width:1px;height:21.5px;background:#2c2e33"></div><div style="left:132.5px;top:906px;width:1px;height:21.5px;background:#2c2e33"></div><div style="left:192.5px;top:906px;width:1px;height:21.5px;background:#2c2e33"></div><div style="left:357px;top:906px;width:671px;height:21.5px;background:#28292c"></div><svg style="left:366px;top:912px;" width="7" height="10" viewBox="0 0 7 10"><polygon points="7,0 0,5.0 7,10" fill="#9a9a9a"/></svg><svg style="left:853.5px;top:911px;" width="8" height="12" viewBox="0 0 8 12"><polygon points="0,0 8,6.0 0,12" fill="#9a9a9a"/></svg><div style="left:881px;top:916.5px;width:108px;height:2.6px;background:#8c8c8c"></div><div style="left:879px;top:915px;width:5px;height:5px;background:#8c8c8c;border-radius:3px"></div><div style="left:897px;top:911px;width:5.5px;height:13px;background:#8c8c8c;border-radius:2px"></div><div style="left:983px;top:912.5px;width:11px;height:11px;background:#8c8c8c;border-radius:6px"></div><div style="left:1015px;top:908.5px;width:9px;height:2.2px;background:#f2d40c"></div><div style="left:1015px;top:912.5px;width:9px;height:2.2px;background:#f2d40c"></div><div style="left:1007px;top:918.5px;width:6px;height:1.8px;background:#f2d40c"></div><div style="left:1007px;top:922px;width:6px;height:1.8px;background:#f2d40c"></div><div style="left:1007px;top:180px;width:21px;height:726px;background:#282b2f"></div><svg style="left:1012.5px;top:185px;" width="10" height="7" viewBox="0 0 10 7"><polygon points="0,7 10,7 5.0,0" fill="#8a8a8a"/></svg><div style="left:1014.5px;top:202px;width:5.5px;height:133px;background:#8a8c90;border-radius:3px"></div><svg style="left:1012.5px;top:892px;" width="10" height="7" viewBox="0 0 10 7"><polygon points="0,0 10,0 5.0,7" fill="#8a8a8a"/></svg>
<div style="left:1007px;top:100px;width:809px;height:39.5px;background:#25272b"></div><svg style="left:1012px;top:112.5px;" width="13" height="15" viewBox="0 0 13 15"><rect x="0.0" y="0.0" width="3.6" height="3.8" fill="#9a9ca0"/><rect x="4.6" y="0.0" width="3.6" height="3.8" fill="#9a9ca0"/><rect x="9.2" y="0.0" width="3.6" height="3.8" fill="#9a9ca0"/><rect x="0.0" y="4.9" width="3.6" height="3.8" fill="#9a9ca0"/><rect x="4.6" y="4.9" width="3.6" height="3.8" fill="#9a9ca0"/><rect x="9.2" y="4.9" width="3.6" height="3.8" fill="#9a9ca0"/><rect x="0.0" y="9.8" width="3.6" height="3.8" fill="#9a9ca0"/><rect x="4.6" y="9.8" width="3.6" height="3.8" fill="#9a9ca0"/><rect x="9.2" y="9.8" width="3.6" height="3.8" fill="#9a9ca0"/></svg><svg style="left:1045px;top:112px;" width="12" height="16" viewBox="0 0 12 16"><path d="M2 1.5 L9.5 8 L2 14.5" fill="none" stroke="#e6e6e6" stroke-width="2.8"/></svg><div style="left:1007px;top:139.5px;width:1060px;height:1.5px;background:#1a1b1e"></div><div style="left:1007px;top:141px;width:21px;height:34.5px;background:#2a2d31"></div><div style="left:1028px;top:141px;width:788px;height:34.5px;background:#222428"></div><div style="left:1007px;top:175.5px;width:809px;height:4.5px;background:#1c1d20"></div><div style="left:1028px;top:180px;width:788px;height:747.5px;background:#25272b"></div><div style="left:1031px;top:180px;width:1px;height:747px;background:#1d1e21"></div><div style="left:1070.8px;top:100px;width:688.2px;height:827px;overflow:hidden"><div style="left:0px;top:2.3px;width:122.6px;height:34.7px;background:#2243c1;border-radius:7px"><div class="t" style="left:6px;top:9.7px;font-size:15.5px;color:#f0f0f0;">Intro</div><svg style="left:104px;top:9.5px;" width="13" height="16" viewBox="0 0 13 16"><polygon points="0,0 13,8 0,16" fill="#93a4e4"/></svg></div><div style="left:125px;top:2.3px;width:122.6px;height:34.7px;background:#95fd2b;border-radius:7px"><div class="t" style="left:6px;top:9.7px;font-size:15.5px;color:#0c1404;">Verse</div><svg style="left:104px;top:9.5px;" width="13" height="16" viewBox="0 0 13 16"><polygon points="0,0 13,8 0,16" fill="#0a0a0a"/></svg></div><div style="left:250px;top:2.3px;width:122.6px;height:34.7px;background:#c46224;border-radius:7px"><div class="t" style="left:6px;top:9.7px;font-size:15.5px;color:#f4e6d8;">Chorus</div><svg style="left:104px;top:9.5px;" width="13" height="16" viewBox="0 0 13 16"><polygon points="0,0 13,8 0,16" fill="#e8b48e"/></svg></div><div style="left:375px;top:2.3px;width:122.6px;height:34.7px;background:#c8239c;border-radius:7px"><div class="t" style="left:6px;top:9.7px;font-size:15.5px;color:#f8e0f0;">Bridge</div><svg style="left:104px;top:9.5px;" width="13" height="16" viewBox="0 0 13 16"><polygon points="0,0 13,8 0,16" fill="#e89ad2"/></svg></div><div style="left:500px;top:2.3px;width:122.6px;height:34.7px;background:#c42225;border-radius:7px"><div class="t" style="left:6px;top:9.7px;font-size:15.5px;color:#f8e4e4;">Half Chorus</div><svg style="left:104px;top:9.5px;" width="13" height="16" viewBox="0 0 13 16"><polygon points="0,0 13,8 0,16" fill="#ea9a9a"/></svg></div><div style="left:625px;top:2.3px;width:122.6px;height:34.7px;background:#1b9e6e;border-radius:7px"><div class="t" style="left:6px;top:9.7px;font-size:15.5px;color:#e4f4ec;">Open Section</div><svg style="left:104px;top:9.5px;" width="13" height="16" viewBox="0 0 13 16"><polygon points="0,0 13,8 0,16" fill="#90d4b8"/></svg></div><div style="left:0px;top:186.3px;width:122.4px;height:49.8px;background:#1c1d20;border-radius:7px"><div style="left:104px;top:5.3px;width:14px;height:14px;background:#404246;border-radius:2.5px"></div></div><div style="left:125px;top:186.3px;width:122.4px;height:49.8px;background:#2787d9;border-radius:7px;overflow:hidden"><div style="left:3px;top:2px;width:116px;height:19px;background:rgba(255,255,255,.035);border-radius:5px"></div><div class="t" style="left:5px;top:2.8px;font-size:14.5px;color:#f4f4f4;">Kick</div><svg style="left:104px;top:4.5px;" width="13" height="16" viewBox="0 0 13 16"><polygon points="0,0 13,8 0,16" fill="#ffffff"/></svg><svg style="left:3px;top:26.5px;" width="116" height="4" viewBox="0 0 116 4"><rect x="3.0" y="0.6" width="2" height="1.6" fill="#1a5a92"/><rect x="11.0" y="0" width="1.5" height="2.4" fill="#1a5a92"/><rect x="21.0" y="0" width="3" height="1.6" fill="#1a5a92"/><rect x="31.0" y="0" width="1.5" height="2.4" fill="#1a5a92"/><rect x="45.0" y="0.6" width="1.5" height="2.4" fill="#1a5a92"/><rect x="53.0" y="0.6" width="2" height="1.6" fill="#1a5a92"/><rect x="61.0" y="0" width="1.5" height="1.6" fill="#1a5a92"/><rect x="75.0" y="0" width="1.5" height="3" fill="#1a5a92"/><rect x="81.0" y="0.6" width="3" height="1.6" fill="#1a5a92"/><rect x="95.0" y="0" width="2" height="2.4" fill="#1a5a92"/><rect x="109.0" y="0" width="2" height="1.6" fill="#1a5a92"/></svg><div style="left:5.5px;top:38px;width:111px;height:6.5px;background:#3a90dc;border-radius:4px;box-shadow:inset 0 0 0 1px #2478c8"></div><div style="left:6px;top:38.5px;width:70px;height:5.5px;background:#2a3038;border-radius:3px"></div></div><div style="left:250px;top:186.3px;width:122.4px;height:49.8px;background:#1a5a92;border-radius:7px;overflow:hidden"><div style="left:3px;top:2px;width:116px;height:19px;background:rgba(255,255,255,.035);border-radius:5px"></div><div class="t" style="left:5px;top:2.8px;font-size:14.5px;color:#f4f4f4;">Kick</div><svg style="left:104px;top:4.5px;" width="13" height="16" viewBox="0 0 13 16"><polygon points="0,0 13,8 0,16" fill="#8fb0d4"/></svg><svg style="left:3px;top:26.5px;" width="116" height="4" viewBox="0 0 116 4"><rect x="3.0" y="0" width="1.5" height="1.6" fill="#123f6a"/><rect x="11.0" y="0.6" width="2" height="3" fill="#123f6a"/><rect x="19.0" y="0.6" width="2.5" height="1.6" fill="#123f6a"/><rect x="33.0" y="0.6" width="1.5" height="3" fill="#123f6a"/><rect x="39.0" y="0.6" width="3" height="2.4" fill="#123f6a"/><rect x="53.0" y="0.6" width="2.5" height="2.4" fill="#123f6a"/><rect x="67.0" y="0" width="2.5" height="1.6" fill="#123f6a"/><rect x="75.0" y="0" width="3" height="2.4" fill="#123f6a"/><rect x="85.0" y="0.6" width="2" height="1.6" fill="#123f6a"/><rect x="91.0" y="0" width="2" height="1.6" fill="#123f6a"/><rect x="99.0" y="0" width="2" height="3" fill="#123f6a"/></svg></div><div style="left:375px;top:186.3px;width:122.4px;height:49.8px;background:#1a5a92;border-radius:7px;overflow:hidden"><div style="left:3px;top:2px;width:116px;height:19px;background:rgba(255,255,255,.035);border-radius:5px"></div><div class="t" style="left:5px;top:2.8px;font-size:14.5px;color:#f4f4f4;">Kick</div><svg style="left:104px;top:4.5px;" width="13" height="16" viewBox="0 0 13 16"><polygon points="0,0 13,8 0,16" fill="#8fb0d4"/></svg><svg style="left:3px;top:26.5px;" width="116" height="4" viewBox="0 0 116 4"><rect x="3.0" y="0.6" width="2" height="3" fill="#123f6a"/><rect x="9.0" y="0.6" width="2.5" height="2.4" fill="#123f6a"/><rect x="23.0" y="0.6" width="1.5" height="1.6" fill="#123f6a"/><rect x="33.0" y="0.6" width="2.5" height="1.6" fill="#123f6a"/><rect x="39.0" y="0.6" width="3" height="3" fill="#123f6a"/><rect x="49.0" y="0.6" width="3" height="1.6" fill="#123f6a"/><rect x="55.0" y="0.6" width="2" height="2.4" fill="#123f6a"/><rect x="59.0" y="0" width="1.5" height="3" fill="#123f6a"/><rect x="63.0" y="0" width="2.5" height="2.4" fill="#123f6a"/><rect x="73.0" y="0.6" width="3" height="2.4" fill="#123f6a"/><rect x="83.0" y="0" width="3" height="2.4" fill="#123f6a"/><rect x="87.0" y="0" width="1.5" height="2.4" fill="#123f6a"/><rect x="93.0" y="0.6" width="2.5" height="2.4" fill="#123f6a"/><rect x="101.0" y="0.6" width="3" height="2.4" fill="#123f6a"/></svg></div><div style="left:500px;top:186.3px;width:122.4px;height:49.8px;background:#1c1d20;border-radius:7px"><div style="left:104px;top:5.3px;width:14px;height:14px;background:#404246;border-radius:2.5px"></div></div><div style="left:625px;top:186.3px;width:122.4px;height:49.8px;background:#1a5a92;border-radius:7px;overflow:hidden"><div style="left:3px;top:2px;width:116px;height:19px;background:rgba(255,255,255,.035);border-radius:5px"></div><div class="t" style="left:5px;top:2.8px;font-size:14.5px;color:#f4f4f4;">Kick</div><svg style="left:104px;top:4.5px;" width="13" height="16" viewBox="0 0 13 16"><polygon points="0,0 13,8 0,16" fill="#8fb0d4"/></svg><svg style="left:3px;top:26.5px;" width="116" height="4" viewBox="0 0 116 4"><rect x="3.0" y="0.6" width="2.5" height="2.4" fill="#123f6a"/><rect x="17.0" y="0" width="1.5" height="1.6" fill="#123f6a"/><rect x="21.0" y="0" width="2" height="2.4" fill="#123f6a"/><rect x="31.0" y="0" width="2" height="3" fill="#123f6a"/><rect x="35.0" y="0" width="2" height="3" fill="#123f6a"/><rect x="41.0" y="0" width="3" height="1.6" fill="#123f6a"/><rect x="51.0" y="0" width="2" height="1.6" fill="#123f6a"/><rect x="65.0" y="0" width="3" height="1.6" fill="#123f6a"/><rect x="69.0" y="0" width="1.5" height="1.6" fill="#123f6a"/><rect x="75.0" y="0" width="2" height="2.4" fill="#123f6a"/><rect x="81.0" y="0" width="2" height="3" fill="#123f6a"/><rect x="87.0" y="0" width="3" height="1.6" fill="#123f6a"/><rect x="95.0" y="0" width="3" height="1.6" fill="#123f6a"/><rect x="103.0" y="0" width="1.5" height="2.4" fill="#123f6a"/></svg></div><div style="left:0px;top:238.8px;width:122.4px;height:49.8px;background:#1c1d20;border-radius:7px"><div style="left:104px;top:5.3px;width:14px;height:14px;background:#404246;border-radius:2.5px"></div></div><div style="left:125px;top:238.8px;width:122.4px;height:49.8px;background:#2787d9;border-radius:7px;overflow:hidden"><div style="left:3px;top:2px;width:116px;height:19px;background:rgba(255,255,255,.035);border-radius:5px"></div><div class="t" style="left:5px;top:2.8px;font-size:14.5px;color:#f4f4f4;">Trap Kick</div><svg style="left:104px;top:4.5px;" width="13" height="16" viewBox="0 0 13 16"><polygon points="0,0 13,8 0,16" fill="#ffffff"/></svg><div style="left:5.5px;top:38px;width:111px;height:6.5px;background:#3a90dc;border-radius:4px;box-shadow:inset 0 0 0 1px #2478c8"></div><div style="left:6px;top:38.5px;width:70px;height:5.5px;background:#2a3038;border-radius:3px"></div></div><div style="left:250px;top:238.8px;width:122.4px;height:49.8px;background:#1a5a92;border-radius:7px;overflow:hidden"><div style="left:3px;top:2px;width:116px;height:19px;background:rgba(255,255,255,.035);border-radius:5px"></div><div class="t" style="left:5px;top:2.8px;font-size:14.5px;color:#f4f4f4;">Trap Kick</div><svg style="left:104px;top:4.5px;" width="13" height="16" viewBox="0 0 13 16"><polygon points="0,0 13,8 0,16" fill="#8fb0d4"/></svg><svg style="left:3px;top:26.5px;" width="116" height="4" viewBox="0 0 116 4"><rect x="3.0" y="0.6" width="3" height="2.4" fill="#b8cce0"/><rect x="11.0" y="0" width="2" height="3" fill="#b8cce0"/><rect x="15.0" y="0.6" width="2.5" height="2.4" fill="#b8cce0"/><rect x="29.0" y="0" width="1.5" height="3" fill="#b8cce0"/><rect x="43.0" y="0.6" width="1.5" height="2.4" fill="#b8cce0"/><rect x="49.0" y="0.6" width="3" height="2.4" fill="#b8cce0"/><rect x="55.0" y="0" width="2" height="1.6" fill="#b8cce0"/><rect x="59.0" y="0.6" width="2" height="3" fill="#b8cce0"/><rect x="63.0" y="0.6" width="3" height="1.6" fill="#b8cce0"/><rect x="71.0" y="0.6" width="2" height="1.6" fill="#b8cce0"/><rect x="81.0" y="0" width="1.5" height="1.6" fill="#b8cce0"/><rect x="91.0" y="0" width="2.5" height="1.6" fill="#b8cce0"/><rect x="97.0" y="0" width="1.5" height="1.6" fill="#b8cce0"/><rect x="107.0" y="0" width="3" height="1.6" fill="#b8cce0"/></svg></div><div style="left:375px;top:238.8px;width:122.4px;height:49.8px;background:#1c1d20;border-radius:7px"><div style="left:104px;top:5.3px;width:14px;height:14px;background:#404246;border-radius:2.5px"></div></div><div style="left:500px;top:238.8px;width:122.4px;height:49.8px;background:#1a5a92;border-radius:7px;overflow:hidden"><div style="left:3px;top:2px;width:116px;height:19px;background:rgba(255,255,255,.035);border-radius:5px"></div><div class="t" style="left:5px;top:2.8px;font-size:14.5px;color:#f4f4f4;">Trap Kick</div><svg style="left:104px;top:4.5px;" width="13" height="16" viewBox="0 0 13 16"><polygon points="0,0 13,8 0,16" fill="#8fb0d4"/></svg><svg style="left:3px;top:26.5px;" width="116" height="4" viewBox="0 0 116 4"><rect x="3.0" y="0.6" width="3" height="2.4" fill="#b8cce0"/><rect x="13.0" y="0" width="2" height="3" fill="#b8cce0"/><rect x="23.0" y="0" width="2" height="2.4" fill="#b8cce0"/><rect x="31.0" y="0" width="2" height="3" fill="#b8cce0"/><rect x="35.0" y="0" width="3" height="3" fill="#b8cce0"/><rect x="49.0" y="0.6" width="2" height="1.6" fill="#b8cce0"/><rect x="63.0" y="0" width="1.5" height="1.6" fill="#b8cce0"/><rect x="69.0" y="0.6" width="2" height="1.6" fill="#b8cce0"/><rect x="79.0" y="0" width="2.5" height="3" fill="#b8cce0"/><rect x="85.0" y="0.6" width="2" height="2.4" fill="#b8cce0"/><rect x="95.0" y="0.6" width="1.5" height="1.6" fill="#b8cce0"/><rect x="105.0" y="0" width="2.5" height="3" fill="#b8cce0"/><rect x="109.0" y="0" width="2.5" height="1.6" fill="#b8cce0"/></svg></div><div style="left:625px;top:238.8px;width:122.4px;height:49.8px;background:#1c1d20;border-radius:7px"><div style="left:104px;top:5.3px;width:14px;height:14px;background:#404246;border-radius:2.5px"></div></div><div style="left:0px;top:291.3px;width:122.4px;height:49.8px;background:#1c1d20;border-radius:7px"><div style="left:104px;top:5.3px;width:14px;height:14px;background:#404246;border-radius:2.5px"></div></div><div style="left:125px;top:291.3px;width:122.4px;height:49.8px;background:#1c1d20;border-radius:7px"><div style="left:104px;top:5.3px;width:14px;height:14px;background:#404246;border-radius:2.5px"></div></div><div style="left:250px;top:291.3px;width:122.4px;height:49.8px;background:#1c1d20;border-radius:7px"><div style="left:104px;top:5.3px;width:14px;height:14px;background:#404246;border-radius:2.5px"></div></div><div style="left:375px;top:291.3px;width:122.4px;height:49.8px;background:#1a5a92;border-radius:7px;overflow:hidden"><div style="left:3px;top:2px;width:116px;height:19px;background:rgba(255,255,255,.035);border-radius:5px"></div><div class="t" style="left:5px;top:2.8px;font-size:14.5px;color:#f4f4f4;">Trap Kick</div><svg style="left:104px;top:4.5px;" width="13" height="16" viewBox="0 0 13 16"><polygon points="0,0 13,8 0,16" fill="#8fb0d4"/></svg><svg style="left:3px;top:26.5px;" width="116" height="4" viewBox="0 0 116 4"><rect x="3.0" y="0" width="3" height="2.4" fill="#b8cce0"/><rect x="11.0" y="0.6" width="2" height="3" fill="#b8cce0"/><rect x="25.0" y="0" width="2.5" height="1.6" fill="#b8cce0"/><rect x="31.0" y="0.6" width="3" height="2.4" fill="#b8cce0"/><rect x="39.0" y="0.6" width="2.5" height="3" fill="#b8cce0"/><rect x="49.0" y="0.6" width="2" height="1.6" fill="#b8cce0"/><rect x="55.0" y="0" width="2" height="3" fill="#b8cce0"/><rect x="69.0" y="0" width="2" height="3" fill="#b8cce0"/><rect x="73.0" y="0" width="1.5" height="2.4" fill="#b8cce0"/><rect x="77.0" y="0.6" width="3" height="3" fill="#b8cce0"/><rect x="83.0" y="0.6" width="3" height="2.4" fill="#b8cce0"/><rect x="87.0" y="0" width="3" height="3" fill="#b8cce0"/><rect x="91.0" y="0" width="2.5" height="2.4" fill="#b8cce0"/><rect x="99.0" y="0" width="1.5" height="1.6" fill="#b8cce0"/><rect x="103.0" y="0" width="2" height="3" fill="#b8cce0"/><rect x="111.0" y="0" width="1.5" height="1.6" fill="#b8cce0"/></svg></div><div style="left:500px;top:291.3px;width:122.4px;height:49.8px;background:#1c1d20;border-radius:7px"><div style="left:104px;top:5.3px;width:14px;height:14px;background:#404246;border-radius:2.5px"></div></div><div style="left:625px;top:291.3px;width:122.4px;height:49.8px;background:#1c1d20;border-radius:7px"><div style="left:104px;top:5.3px;width:14px;height:14px;background:#404246;border-radius:2.5px"></div></div><div style="left:0px;top:343.8px;width:122.4px;height:49.8px;background:#1c1d20;border-radius:7px"><div style="left:104px;top:5.3px;width:14px;height:14px;background:#404246;border-radius:2.5px"></div></div><div style="left:125px;top:343.8px;width:122.4px;height:49.8px;background:#2787d9;border-radius:7px;overflow:hidden"><div style="left:3px;top:2px;width:116px;height:19px;background:rgba(255,255,255,.035);border-radius:5px"></div><div class="t" style="left:5px;top:2.8px;font-size:14.5px;color:#f4f4f4;">Snare</div><svg style="left:104px;top:4.5px;" width="13" height="16" viewBox="0 0 13 16"><polygon points="0,0 13,8 0,16" fill="#ffffff"/></svg><svg style="left:3px;top:26.5px;" width="116" height="4" viewBox="0 0 116 4"><rect x="3.0" y="0" width="2" height="1.6" fill="#1a5a92"/><rect x="17.0" y="0" width="3" height="3" fill="#1a5a92"/><rect x="21.0" y="0" width="2.5" height="1.6" fill="#1a5a92"/><rect x="29.0" y="0" width="1.5" height="3" fill="#1a5a92"/><rect x="35.0" y="0.6" width="3" height="1.6" fill="#1a5a92"/><rect x="49.0" y="0.6" width="1.5" height="2.4" fill="#1a5a92"/><rect x="57.0" y="0" width="3" height="1.6" fill="#1a5a92"/><rect x="61.0" y="0.6" width="1.5" height="2.4" fill="#1a5a92"/><rect x="75.0" y="0" width="2.5" height="1.6" fill="#1a5a92"/><rect x="85.0" y="0.6" width="2.5" height="3" fill="#1a5a92"/><rect x="91.0" y="0" width="2.5" height="3" fill="#1a5a92"/><rect x="97.0" y="0" width="3" height="2.4" fill="#1a5a92"/><rect x="111.0" y="0" width="1.5" height="2.4" fill="#1a5a92"/></svg><div style="left:5.5px;top:38px;width:111px;height:6.5px;background:#3a90dc;border-radius:4px;box-shadow:inset 0 0 0 1px #2478c8"></div><div style="left:6px;top:38.5px;width:61px;height:5.5px;background:#2a3038;border-radius:3px"></div></div><div style="left:250px;top:343.8px;width:122.4px;height:49.8px;background:#1a5a92;border-radius:7px;overflow:hidden"><div style="left:3px;top:2px;width:116px;height:19px;background:rgba(255,255,255,.035);border-radius:5px"></div><div class="t" style="left:5px;top:2.8px;font-size:14.5px;color:#f4f4f4;">Snare</div><svg style="left:104px;top:4.5px;" width="13" height="16" viewBox="0 0 13 16"><polygon points="0,0 13,8 0,16" fill="#8fb0d4"/></svg><svg style="left:3px;top:26.5px;" width="116" height="4" viewBox="0 0 116 4"><rect x="3.0" y="0" width="2.5" height="1.6" fill="#123f6a"/><rect x="17.0" y="0" width="2.5" height="2.4" fill="#123f6a"/><rect x="31.0" y="0" width="2.5" height="3" fill="#123f6a"/><rect x="37.0" y="0" width="2.5" height="1.6" fill="#123f6a"/><rect x="43.0" y="0" width="3" height="1.6" fill="#123f6a"/><rect x="47.0" y="0" width="3" height="1.6" fill="#123f6a"/><rect x="61.0" y="0" width="3" height="1.6" fill="#123f6a"/><rect x="67.0" y="0.6" width="1.5" height="2.4" fill="#123f6a"/><rect x="73.0" y="0.6" width="2" height="2.4" fill="#123f6a"/><rect x="87.0" y="0.6" width="2.5" height="2.4" fill="#123f6a"/><rect x="95.0" y="0" width="1.5" height="1.6" fill="#123f6a"/><rect x="105.0" y="0.6" width="3" height="3" fill="#123f6a"/><rect x="111.0" y="0" width="2" height="3" fill="#123f6a"/></svg></div><div style="left:375px;top:343.8px;width:122.4px;height:49.8px;background:#1c1d20;border-radius:7px"><div style="left:104px;top:5.3px;width:14px;height:14px;background:#404246;border-radius:2.5px"></div></div><div style="left:500px;top:343.8px;width:122.4px;height:49.8px;background:#1c1d20;border-radius:7px"><div style="left:104px;top:5.3px;width:14px;height:14px;background:#404246;border-radius:2.5px"></div></div><div style="left:625px;top:343.8px;width:122.4px;height:49.8px;background:#1a5a92;border-radius:7px;overflow:hidden"><div style="left:3px;top:2px;width:116px;height:19px;background:rgba(255,255,255,.035);border-radius:5px"></div><div class="t" style="left:5px;top:2.8px;font-size:14.5px;color:#f4f4f4;">Snare</div><svg style="left:104px;top:4.5px;" width="13" height="16" viewBox="0 0 13 16"><polygon points="0,0 13,8 0,16" fill="#8fb0d4"/></svg><svg style="left:3px;top:26.5px;" width="116" height="4" viewBox="0 0 116 4"><rect x="3.0" y="0.6" width="2" height="1.6" fill="#123f6a"/><rect x="13.0" y="0" width="1.5" height="2.4" fill="#123f6a"/><rect x="17.0" y="0.6" width="2" height="2.4" fill="#123f6a"/><rect x="23.0" y="0.6" width="3" height="1.6" fill="#123f6a"/><rect x="27.0" y="0" width="2" height="1.6" fill="#123f6a"/><rect x="33.0" y="0" width="3" height="2.4" fill="#123f6a"/><rect x="39.0" y="0" width="1.5" height="3" fill="#123f6a"/><rect x="47.0" y="0.6" width="1.5" height="1.6" fill="#123f6a"/><rect x="51.0" y="0.6" width="3" height="3" fill="#123f6a"/><rect x="65.0" y="0" width="2.5" height="3" fill="#123f6a"/><rect x="75.0" y="0.6" width="3" height="1.6" fill="#123f6a"/><rect x="79.0" y="0" width="2.5" height="3" fill="#123f6a"/><rect x="89.0" y="0.6" width="3" height="3" fill="#123f6a"/><rect x="95.0" y="0" width="1.5" height="1.6" fill="#123f6a"/><rect x="101.0" y="0" width="1.5" height="2.4" fill="#123f6a"/><rect x="107.0" y="0.6" width="2.5" height="1.6" fill="#123f6a"/></svg></div><div style="left:0px;top:396.3px;width:122.4px;height:49.8px;background:#1c1d20;border-radius:7px"><div style="left:104px;top:5.3px;width:14px;height:14px;background:#404246;border-radius:2.5px"></div></div><div style="left:125px;top:396.3px;width:122.4px;height:49.8px;background:#1c1d20;border-radius:7px"><div style="left:104px;top:5.3px;width:14px;height:14px;background:#404246;border-radius:2.5px"></div></div><div style="left:250px;top:396.3px;width:122.4px;height:49.8px;background:#1a5a92;border-radius:7px;overflow:hidden"><div style="left:3px;top:2px;width:116px;height:19px;background:rgba(255,255,255,.035);border-radius:5px"></div><div class="t" style="left:5px;top:2.8px;font-size:14.5px;color:#f4f4f4;">Trap Snare</div><svg style="left:104px;top:4.5px;" width="13" height="16" viewBox="0 0 13 16"><polygon points="0,0 13,8 0,16" fill="#8fb0d4"/></svg><svg style="left:3px;top:26.5px;" width="116" height="4" viewBox="0 0 116 4"><rect x="3.0" y="0.6" width="2.5" height="1.6" fill="#b8cce0"/><rect x="17.0" y="0" width="2" height="1.6" fill="#b8cce0"/><rect x="27.0" y="0.6" width="3" height="1.6" fill="#b8cce0"/><rect x="31.0" y="0" width="3" height="3" fill="#b8cce0"/><rect x="37.0" y="0" width="1.5" height="1.6" fill="#b8cce0"/><rect x="51.0" y="0.6" width="3" height="2.4" fill="#b8cce0"/><rect x="65.0" y="0" width="1.5" height="1.6" fill="#b8cce0"/><rect x="71.0" y="0" width="2.5" height="3" fill="#b8cce0"/><rect x="75.0" y="0.6" width="2.5" height="3" fill="#b8cce0"/><rect x="79.0" y="0" width="3" height="1.6" fill="#b8cce0"/><rect x="87.0" y="0" width="2.5" height="3" fill="#b8cce0"/><rect x="91.0" y="0" width="2" height="3" fill="#b8cce0"/><rect x="99.0" y="0" width="1.5" height="2.4" fill="#b8cce0"/></svg></div><div style="left:375px;top:396.3px;width:122.4px;height:49.8px;background:#1c1d20;border-radius:7px"><div style="left:104px;top:5.3px;width:14px;height:14px;background:#404246;border-radius:2.5px"></div></div><div style="left:500px;top:396.3px;width:122.4px;height:49.8px;background:#1a5a92;border-radius:7px;overflow:hidden"><div style="left:3px;top:2px;width:116px;height:19px;background:rgba(255,255,255,.035);border-radius:5px"></div><div class="t" style="left:5px;top:2.8px;font-size:14.5px;color:#f4f4f4;">Trap Snare</div><svg style="left:104px;top:4.5px;" width="13" height="16" viewBox="0 0 13 16"><polygon points="0,0 13,8 0,16" fill="#8fb0d4"/></svg><svg style="left:3px;top:26.5px;" width="116" height="4" viewBox="0 0 116 4"><rect x="3.0" y="0" width="1.5" height="1.6" fill="#b8cce0"/><rect x="11.0" y="0" width="2" height="1.6" fill="#b8cce0"/><rect x="15.0" y="0" width="1.5" height="3" fill="#b8cce0"/><rect x="23.0" y="0.6" width="1.5" height="3" fill="#b8cce0"/><rect x="33.0" y="0.6" width="2.5" height="1.6" fill="#b8cce0"/><rect x="47.0" y="0.6" width="2" height="1.6" fill="#b8cce0"/><rect x="57.0" y="0" width="2" height="1.6" fill="#b8cce0"/><rect x="67.0" y="0" width="1.5" height="1.6" fill="#b8cce0"/><rect x="71.0" y="0.6" width="1.5" height="1.6" fill="#b8cce0"/><rect x="81.0" y="0" width="1.5" height="1.6" fill="#b8cce0"/><rect x="85.0" y="0" width="2.5" height="1.6" fill="#b8cce0"/><rect x="95.0" y="0.6" width="2.5" height="2.4" fill="#b8cce0"/><rect x="101.0" y="0.6" width="2.5" height="3" fill="#b8cce0"/></svg></div><div style="left:625px;top:396.3px;width:122.4px;height:49.8px;background:#1c1d20;border-radius:7px"><div style="left:104px;top:5.3px;width:14px;height:14px;background:#404246;border-radius:2.5px"></div></div><div style="left:0px;top:448.8px;width:122.4px;height:49.8px;background:#1c1d20;border-radius:7px"><div style="left:104px;top:5.3px;width:14px;height:14px;background:#404246;border-radius:2.5px"></div></div><div style="left:125px;top:448.8px;width:122.4px;height:49.8px;background:#1c1d20;border-radius:7px"><div style="left:104px;top:5.3px;width:14px;height:14px;background:#404246;border-radius:2.5px"></div></div><div style="left:250px;top:448.8px;width:122.4px;height:49.8px;background:#1c1d20;border-radius:7px"><div style="left:104px;top:5.3px;width:14px;height:14px;background:#404246;border-radius:2.5px"></div></div><div style="left:375px;top:448.8px;width:122.4px;height:49.8px;background:#1a5a92;border-radius:7px;overflow:hidden"><div style="left:3px;top:2px;width:116px;height:19px;background:rgba(255,255,255,.035);border-radius:5px"></div><div class="t" style="left:5px;top:2.8px;font-size:14.5px;color:#f4f4f4;">OLIVER.._100</div><svg style="left:104px;top:4.5px;" width="13" height="16" viewBox="0 0 13 16"><polygon points="0,0 13,8 0,16" fill="#8fb0d4"/></svg><svg style="left:3px;top:26.5px;" width="116" height="4" viewBox="0 0 116 4"><rect x="3.0" y="0" width="3" height="3" fill="#123f6a"/><rect x="7.0" y="0" width="1.5" height="3" fill="#123f6a"/><rect x="17.0" y="0" width="2.5" height="3" fill="#123f6a"/><rect x="23.0" y="0" width="2.5" height="2.4" fill="#123f6a"/><rect x="31.0" y="0" width="2.5" height="3" fill="#123f6a"/><rect x="41.0" y="0.6" width="2" height="1.6" fill="#123f6a"/><rect x="55.0" y="0" width="3" height="2.4" fill="#123f6a"/><rect x="69.0" y="0" width="2" height="2.4" fill="#123f6a"/><rect x="77.0" y="0" width="1.5" height="2.4" fill="#123f6a"/><rect x="81.0" y="0" width="2.5" height="3" fill="#123f6a"/><rect x="87.0" y="0" width="3" height="1.6" fill="#123f6a"/><rect x="97.0" y="0.6" width="2.5" height="1.6" fill="#123f6a"/><rect x="105.0" y="0" width="3" height="2.4" fill="#123f6a"/></svg></div><div style="left:500px;top:448.8px;width:122.4px;height:49.8px;background:#1c1d20;border-radius:7px"><div style="left:104px;top:5.3px;width:14px;height:14px;background:#404246;border-radius:2.5px"></div></div><div style="left:625px;top:448.8px;width:122.4px;height:49.8px;background:#1c1d20;border-radius:7px"><div style="left:104px;top:5.3px;width:14px;height:14px;background:#404246;border-radius:2.5px"></div></div><div style="left:0px;top:501.3px;width:122.4px;height:49.8px;background:#1c1d20;border-radius:7px"><div style="left:104px;top:5.3px;width:14px;height:14px;background:#404246;border-radius:2.5px"></div></div><div style="left:125px;top:501.3px;width:122.4px;height:49.8px;background:#1c1d20;border-radius:7px"><div style="left:104px;top:5.3px;width:14px;height:14px;background:#404246;border-radius:2.5px"></div></div><div style="left:250px;top:501.3px;width:122.4px;height:49.8px;background:#1c1d20;border-radius:7px"><div style="left:104px;top:5.3px;width:14px;height:14px;background:#404246;border-radius:2.5px"></div></div><div style="left:375px;top:501.3px;width:122.4px;height:49.8px;background:#1c1d20;border-radius:7px"><div style="left:104px;top:5.3px;width:14px;height:14px;background:#404246;border-radius:2.5px"></div></div><div style="left:500px;top:501.3px;width:122.4px;height:49.8px;background:#1a5a92;border-radius:7px;overflow:hidden"><div style="left:3px;top:2px;width:116px;height:19px;background:rgba(255,255,255,.035);border-radius:5px"></div><div class="t" style="left:5px;top:2.8px;font-size:14.5px;color:#f4f4f4;">Pattern ..PS.7</div><svg style="left:104px;top:4.5px;" width="13" height="16" viewBox="0 0 13 16"><polygon points="0,0 13,8 0,16" fill="#8fb0d4"/></svg><svg style="left:3px;top:26.5px;" width="116" height="4" viewBox="0 0 116 4"><rect x="3.0" y="0" width="1.5" height="1.6" fill="#123f6a"/><rect x="17.0" y="0.6" width="2" height="3" fill="#123f6a"/><rect x="23.0" y="0" width="1.5" height="1.6" fill="#123f6a"/><rect x="31.0" y="0" width="1.5" height="1.6" fill="#123f6a"/><rect x="45.0" y="0.6" width="2.5" height="2.4" fill="#123f6a"/><rect x="49.0" y="0.6" width="3" height="2.4" fill="#123f6a"/><rect x="57.0" y="0" width="2" height="2.4" fill="#123f6a"/><rect x="61.0" y="0.6" width="3" height="3" fill="#123f6a"/><rect x="75.0" y="0" width="1.5" height="1.6" fill="#123f6a"/><rect x="83.0" y="0.6" width="3" height="2.4" fill="#123f6a"/><rect x="89.0" y="0.6" width="1.5" height="2.4" fill="#123f6a"/><rect x="93.0" y="0" width="2.5" height="2.4" fill="#123f6a"/><rect x="99.0" y="0" width="3" height="2.4" fill="#123f6a"/><rect x="105.0" y="0.6" width="1.5" height="1.6" fill="#123f6a"/></svg></div><div style="left:625px;top:501.3px;width:122.4px;height:49.8px;background:#1a5a92;border-radius:7px;overflow:hidden"><div style="left:3px;top:2px;width:116px;height:19px;background:rgba(255,255,255,.035);border-radius:5px"></div><div class="t" style="left:5px;top:2.8px;font-size:14.5px;color:#f4f4f4;">Pattern ..</div><svg style="left:104px;top:4.5px;" width="13" height="16" viewBox="0 0 13 16"><polygon points="0,0 13,8 0,16" fill="#8fb0d4"/></svg><svg style="left:3px;top:26.5px;" width="116" height="4" viewBox="0 0 116 4"><rect x="3.0" y="0" width="2.5" height="2.4" fill="#123f6a"/><rect x="17.0" y="0.6" width="3" height="2.4" fill="#123f6a"/><rect x="25.0" y="0" width="3" height="3" fill="#123f6a"/><rect x="29.0" y="0.6" width="3" height="1.6" fill="#123f6a"/><rect x="33.0" y="0" width="1.5" height="2.4" fill="#123f6a"/><rect x="47.0" y="0" width="1.5" height="3" fill="#123f6a"/><rect x="57.0" y="0" width="2" height="3" fill="#123f6a"/><rect x="71.0" y="0" width="2.5" height="1.6" fill="#123f6a"/><rect x="75.0" y="0.6" width="2.5" height="3" fill="#123f6a"/><rect x="83.0" y="0.6" width="2.5" height="3" fill="#123f6a"/><rect x="89.0" y="0.6" width="2" height="1.6" fill="#123f6a"/><rect x="95.0" y="0" width="2.5" height="2.4" fill="#123f6a"/><rect x="109.0" y="0.6" width="3" height="3" fill="#123f6a"/></svg></div><div style="left:0px;top:553.8px;width:122.4px;height:49.8px;background:#1c1d20;border-radius:7px"><div style="left:104px;top:5.3px;width:14px;height:14px;background:#404246;border-radius:2.5px"></div></div><div style="left:125px;top:553.8px;width:122.4px;height:49.8px;background:#2787d9;border-radius:7px;overflow:hidden"><div style="left:3px;top:2px;width:116px;height:19px;background:rgba(255,255,255,.035);border-radius:5px"></div><div class="t" style="left:5px;top:2.8px;font-size:14.5px;color:#f4f4f4;">Hats</div><svg style="left:104px;top:4.5px;" width="13" height="16" viewBox="0 0 13 16"><polygon points="0,0 13,8 0,16" fill="#ffffff"/></svg><svg style="left:3px;top:26.5px;" width="116" height="4" viewBox="0 0 116 4"><rect x="3.0" y="0" width="3" height="2.4" fill="#1a5a92"/><rect x="9.0" y="0" width="3" height="1.6" fill="#1a5a92"/><rect x="23.0" y="0" width="2.5" height="3" fill="#1a5a92"/><rect x="37.0" y="0" width="1.5" height="2.4" fill="#1a5a92"/><rect x="41.0" y="0" width="2.5" height="1.6" fill="#1a5a92"/><rect x="47.0" y="0" width="1.5" height="3" fill="#1a5a92"/><rect x="61.0" y="0.6" width="3" height="1.6" fill="#1a5a92"/><rect x="65.0" y="0.6" width="2.5" height="3" fill="#1a5a92"/><rect x="75.0" y="0" width="1.5" height="2.4" fill="#1a5a92"/><rect x="83.0" y="0.6" width="3" height="1.6" fill="#1a5a92"/><rect x="89.0" y="0" width="3" height="3" fill="#1a5a92"/><rect x="103.0" y="0" width="3" height="2.4" fill="#1a5a92"/></svg><div style="left:5.5px;top:38px;width:111px;height:6.5px;background:#3a90dc;border-radius:4px;box-shadow:inset 0 0 0 1px #2478c8"></div><div style="left:6px;top:38.5px;width:61px;height:5.5px;background:#2a3038;border-radius:3px"></div></div><div style="left:250px;top:553.8px;width:122.4px;height:49.8px;background:#1a5a92;border-radius:7px;overflow:hidden"><div style="left:3px;top:2px;width:116px;height:19px;background:rgba(255,255,255,.035);border-radius:5px"></div><div class="t" style="left:5px;top:2.8px;font-size:14.5px;color:#f4f4f4;">Hats</div><svg style="left:104px;top:4.5px;" width="13" height="16" viewBox="0 0 13 16"><polygon points="0,0 13,8 0,16" fill="#8fb0d4"/></svg><svg style="left:3px;top:26.5px;" width="116" height="4" viewBox="0 0 116 4"><rect x="3.0" y="0.6" width="2" height="3" fill="#123f6a"/><rect x="9.0" y="0" width="2" height="3" fill="#123f6a"/><rect x="17.0" y="0.6" width="3" height="2.4" fill="#123f6a"/><rect x="31.0" y="0.6" width="2.5" height="3" fill="#123f6a"/><rect x="39.0" y="0" width="3" height="2.4" fill="#123f6a"/><rect x="43.0" y="0" width="1.5" height="3" fill="#123f6a"/><rect x="51.0" y="0" width="1.5" height="3" fill="#123f6a"/><rect x="57.0" y="0.6" width="2.5" height="2.4" fill="#123f6a"/><rect x="65.0" y="0.6" width="3" height="1.6" fill="#123f6a"/><rect x="69.0" y="0" width="3" height="2.4" fill="#123f6a"/><rect x="73.0" y="0" width="1.5" height="3" fill="#123f6a"/><rect x="87.0" y="0" width="1.5" height="3" fill="#123f6a"/><rect x="97.0" y="0.6" width="1.5" height="2.4" fill="#123f6a"/><rect x="107.0" y="0" width="2" height="1.6" fill="#123f6a"/></svg></div><div style="left:375px;top:553.8px;width:122.4px;height:49.8px;background:#1a5a92;border-radius:7px;overflow:hidden"><div style="left:3px;top:2px;width:116px;height:19px;background:rgba(255,255,255,.035);border-radius:5px"></div><div class="t" style="left:5px;top:2.8px;font-size:14.5px;color:#f4f4f4;">Hats</div><svg style="left:104px;top:4.5px;" width="13" height="16" viewBox="0 0 13 16"><polygon points="0,0 13,8 0,16" fill="#8fb0d4"/></svg><svg style="left:3px;top:26.5px;" width="116" height="4" viewBox="0 0 116 4"><rect x="3.0" y="0" width="2.5" height="3" fill="#123f6a"/><rect x="17.0" y="0" width="3" height="2.4" fill="#123f6a"/><rect x="21.0" y="0" width="2" height="2.4" fill="#123f6a"/><rect x="27.0" y="0" width="2.5" height="3" fill="#123f6a"/><rect x="31.0" y="0.6" width="1.5" height="2.4" fill="#123f6a"/><rect x="41.0" y="0" width="1.5" height="1.6" fill="#123f6a"/><rect x="47.0" y="0" width="2" height="1.6" fill="#123f6a"/><rect x="55.0" y="0" width="3" height="2.4" fill="#123f6a"/><rect x="59.0" y="0.6" width="1.5" height="2.4" fill="#123f6a"/><rect x="63.0" y="0.6" width="3" height="2.4" fill="#123f6a"/><rect x="77.0" y="0" width="2" height="2.4" fill="#123f6a"/><rect x="91.0" y="0" width="2" height="1.6" fill="#123f6a"/><rect x="99.0" y="0.6" width="2" height="2.4" fill="#123f6a"/></svg></div><div style="left:500px;top:553.8px;width:122.4px;height:49.8px;background:#1c1d20;border-radius:7px"><div style="left:104px;top:5.3px;width:14px;height:14px;background:#404246;border-radius:2.5px"></div></div><div style="left:625px;top:553.8px;width:122.4px;height:49.8px;background:#1a5a92;border-radius:7px;overflow:hidden"><div style="left:3px;top:2px;width:116px;height:19px;background:rgba(255,255,255,.035);border-radius:5px"></div><div class="t" style="left:5px;top:2.8px;font-size:14.5px;color:#f4f4f4;">Hats</div><svg style="left:104px;top:4.5px;" width="13" height="16" viewBox="0 0 13 16"><polygon points="0,0 13,8 0,16" fill="#8fb0d4"/></svg><svg style="left:3px;top:26.5px;" width="116" height="4" viewBox="0 0 116 4"><rect x="3.0" y="0" width="2" height="3" fill="#123f6a"/><rect x="11.0" y="0" width="3" height="2.4" fill="#123f6a"/><rect x="17.0" y="0" width="3" height="3" fill="#123f6a"/><rect x="27.0" y="0.6" width="2" height="1.6" fill="#123f6a"/><rect x="31.0" y="0.6" width="3" height="2.4" fill="#123f6a"/><rect x="45.0" y="0.6" width="1.5" height="2.4" fill="#123f6a"/><rect x="59.0" y="0" width="2.5" height="2.4" fill="#123f6a"/><rect x="73.0" y="0" width="2" height="3" fill="#123f6a"/><rect x="81.0" y="0" width="2.5" height="3" fill="#123f6a"/><rect x="85.0" y="0.6" width="3" height="1.6" fill="#123f6a"/><rect x="93.0" y="0" width="2.5" height="1.6" fill="#123f6a"/><rect x="97.0" y="0.6" width="2" height="1.6" fill="#123f6a"/><rect x="107.0" y="0" width="2" height="3" fill="#123f6a"/></svg></div><div style="left:0px;top:606.3px;width:122.4px;height:49.8px;background:#1c1d20;border-radius:7px"><div style="left:104px;top:5.3px;width:14px;height:14px;background:#404246;border-radius:2.5px"></div></div><div style="left:125px;top:606.3px;width:122.4px;height:49.8px;background:#1c1d20;border-radius:7px"><div style="left:104px;top:5.3px;width:14px;height:14px;background:#404246;border-radius:2.5px"></div></div><div style="left:250px;top:606.3px;width:122.4px;height:49.8px;background:#1a5a92;border-radius:7px;overflow:hidden"><div style="left:3px;top:2px;width:116px;height:19px;background:rgba(255,255,255,.035);border-radius:5px"></div><div class="t" style="left:5px;top:2.8px;font-size:14.5px;color:#f4f4f4;">Trap Hi Hat</div><svg style="left:104px;top:4.5px;" width="13" height="16" viewBox="0 0 13 16"><polygon points="0,0 13,8 0,16" fill="#8fb0d4"/></svg><svg style="left:3px;top:26.5px;" width="116" height="4" viewBox="0 0 116 4"><rect x="3.0" y="0" width="2" height="3" fill="#e8eef4"/><rect x="9.0" y="0" width="1.5" height="2.4" fill="#e8eef4"/><rect x="19.0" y="0" width="2.5" height="2.4" fill="#e8eef4"/><rect x="29.0" y="0" width="3" height="3" fill="#e8eef4"/><rect x="33.0" y="0" width="1.5" height="1.6" fill="#e8eef4"/><rect x="43.0" y="0" width="1.5" height="3" fill="#e8eef4"/><rect x="53.0" y="0" width="2.5" height="1.6" fill="#e8eef4"/><rect x="59.0" y="0" width="2.5" height="1.6" fill="#e8eef4"/><rect x="67.0" y="0" width="2.5" height="3" fill="#e8eef4"/><rect x="81.0" y="0.6" width="2" height="1.6" fill="#e8eef4"/><rect x="87.0" y="0" width="2" height="1.6" fill="#e8eef4"/><rect x="93.0" y="0.6" width="2" height="1.6" fill="#e8eef4"/><rect x="97.0" y="0" width="2.5" height="3" fill="#e8eef4"/><rect x="101.0" y="0.6" width="3" height="3" fill="#e8eef4"/></svg></div><div style="left:375px;top:606.3px;width:122.4px;height:49.8px;background:#1c1d20;border-radius:7px"><div style="left:104px;top:5.3px;width:14px;height:14px;background:#404246;border-radius:2.5px"></div></div><div style="left:500px;top:606.3px;width:122.4px;height:49.8px;background:#1a5a92;border-radius:7px;overflow:hidden"><div style="left:3px;top:2px;width:116px;height:19px;background:rgba(255,255,255,.035);border-radius:5px"></div><div class="t" style="left:5px;top:2.8px;font-size:14.5px;color:#f4f4f4;">Trap Hi Hat</div><svg style="left:104px;top:4.5px;" width="13" height="16" viewBox="0 0 13 16"><polygon points="0,0 13,8 0,16" fill="#8fb0d4"/></svg><svg style="left:3px;top:26.5px;" width="116" height="4" viewBox="0 0 116 4"><rect x="3.0" y="0" width="2.5" height="3" fill="#e8eef4"/><rect x="9.0" y="0" width="2.5" height="2.4" fill="#e8eef4"/><rect x="19.0" y="0" width="2.5" height="1.6" fill="#e8eef4"/><rect x="25.0" y="0" width="2" height="1.6" fill="#e8eef4"/><rect x="31.0" y="0" width="1.5" height="3" fill="#e8eef4"/><rect x="37.0" y="0" width="2" height="3" fill="#e8eef4"/><rect x="43.0" y="0.6" width="1.5" height="3" fill="#e8eef4"/><rect x="47.0" y="0" width="2.5" height="1.6" fill="#e8eef4"/><rect x="61.0" y="0" width="2" height="1.6" fill="#e8eef4"/><rect x="75.0" y="0" width="2.5" height="1.6" fill="#e8eef4"/><rect x="81.0" y="0" width="2.5" height="3" fill="#e8eef4"/><rect x="87.0" y="0.6" width="1.5" height="2.4" fill="#e8eef4"/><rect x="97.0" y="0" width="2.5" height="1.6" fill="#e8eef4"/><rect x="111.0" y="0" width="1.5" height="1.6" fill="#e8eef4"/></svg></div><div style="left:625px;top:606.3px;width:122.4px;height:49.8px;background:#1c1d20;border-radius:7px"><div style="left:104px;top:5.3px;width:14px;height:14px;background:#404246;border-radius:2.5px"></div></div><div style="left:0px;top:658.8px;width:122.4px;height:49.8px;background:#1c1d20;border-radius:7px"><div style="left:104px;top:5.3px;width:14px;height:14px;background:#404246;border-radius:2.5px"></div></div><div style="left:125px;top:658.8px;width:122.4px;height:49.8px;background:#1c1d20;border-radius:7px"><div style="left:104px;top:5.3px;width:14px;height:14px;background:#404246;border-radius:2.5px"></div></div><div style="left:250px;top:658.8px;width:122.4px;height:49.8px;background:#1a5a92;border-radius:7px;overflow:hidden"><div style="left:3px;top:2px;width:116px;height:19px;background:rgba(255,255,255,.035);border-radius:5px"></div><div class="t" style="left:5px;top:2.8px;font-size:14.5px;color:#f4f4f4;">Trap Op.. Hat</div><svg style="left:104px;top:4.5px;" width="13" height="16" viewBox="0 0 13 16"><polygon points="0,0 13,8 0,16" fill="#8fb0d4"/></svg><svg style="left:3px;top:26.5px;" width="116" height="4" viewBox="0 0 116 4"><rect x="3.0" y="0" width="3" height="2.4" fill="#b8cce0"/><rect x="17.0" y="0" width="2" height="2.4" fill="#b8cce0"/><rect x="31.0" y="0.6" width="3" height="2.4" fill="#b8cce0"/><rect x="41.0" y="0" width="2" height="3" fill="#b8cce0"/><rect x="51.0" y="0" width="2.5" height="3" fill="#b8cce0"/><rect x="61.0" y="0" width="1.5" height="1.6" fill="#b8cce0"/><rect x="67.0" y="0.6" width="2" height="1.6" fill="#b8cce0"/><rect x="73.0" y="0" width="2.5" height="3" fill="#b8cce0"/><rect x="81.0" y="0.6" width="2" height="1.6" fill="#b8cce0"/><rect x="91.0" y="0" width="3" height="1.6" fill="#b8cce0"/><rect x="97.0" y="0" width="1.5" height="2.4" fill="#b8cce0"/><rect x="105.0" y="0" width="2.5" height="1.6" fill="#b8cce0"/></svg></div><div style="left:375px;top:658.8px;width:122.4px;height:49.8px;background:#1c1d20;border-radius:7px"><div style="left:104px;top:5.3px;width:14px;height:14px;background:#404246;border-radius:2.5px"></div></div><div style="left:500px;top:658.8px;width:122.4px;height:49.8px;background:#1a5a92;border-radius:7px;overflow:hidden"><div style="left:3px;top:2px;width:116px;height:19px;background:rgba(255,255,255,.035);border-radius:5px"></div><div class="t" style="left:5px;top:2.8px;font-size:14.5px;color:#f4f4f4;">Trap Op.. Hat</div><svg style="left:104px;top:4.5px;" width="13" height="16" viewBox="0 0 13 16"><polygon points="0,0 13,8 0,16" fill="#8fb0d4"/></svg><svg style="left:3px;top:26.5px;" width="116" height="4" viewBox="0 0 116 4"><rect x="3.0" y="0" width="1.5" height="2.4" fill="#b8cce0"/><rect x="13.0" y="0" width="3" height="3" fill="#b8cce0"/><rect x="23.0" y="0.6" width="3" height="2.4" fill="#b8cce0"/><rect x="29.0" y="0.6" width="1.5" height="1.6" fill="#b8cce0"/><rect x="37.0" y="0" width="1.5" height="2.4" fill="#b8cce0"/><rect x="43.0" y="0.6" width="1.5" height="1.6" fill="#b8cce0"/><rect x="53.0" y="0" width="2.5" height="2.4" fill="#b8cce0"/><rect x="67.0" y="0" width="1.5" height="3" fill="#b8cce0"/><rect x="81.0" y="0" width="2" height="2.4" fill="#b8cce0"/><rect x="95.0" y="0.6" width="1.5" height="2.4" fill="#b8cce0"/><rect x="101.0" y="0" width="3" height="2.4" fill="#b8cce0"/><rect x="107.0" y="0.6" width="3" height="1.6" fill="#b8cce0"/></svg></div><div style="left:625px;top:658.8px;width:122.4px;height:49.8px;background:#1c1d20;border-radius:7px"><div style="left:104px;top:5.3px;width:14px;height:14px;background:#404246;border-radius:2.5px"></div></div><div style="left:0px;top:711.3px;width:122.4px;height:49.8px;background:#1c1d20;border-radius:7px"><div style="left:104px;top:5.3px;width:14px;height:14px;background:#404246;border-radius:2.5px"></div></div><div style="left:125px;top:711.3px;width:122.4px;height:49.8px;background:#1c1d20;border-radius:7px"><div style="left:104px;top:5.3px;width:14px;height:14px;background:#404246;border-radius:2.5px"></div></div><div style="left:250px;top:711.3px;width:122.4px;height:49.8px;background:#1c1d20;border-radius:7px"><div style="left:104px;top:5.3px;width:14px;height:14px;background:#404246;border-radius:2.5px"></div></div><div style="left:375px;top:711.3px;width:122.4px;height:49.8px;background:#1c1d20;border-radius:7px"><div style="left:104px;top:5.3px;width:14px;height:14px;background:#404246;border-radius:2.5px"></div></div><div style="left:500px;top:711.3px;width:122.4px;height:49.8px;background:#1c1d20;border-radius:7px"><div style="left:104px;top:5.3px;width:14px;height:14px;background:#404246;border-radius:2.5px"></div></div><div style="left:625px;top:711.3px;width:122.4px;height:49.8px;background:#1c1d20;border-radius:7px"><div style="left:104px;top:5.3px;width:14px;height:14px;background:#404246;border-radius:2.5px"></div></div></div><svg style="left:1045px;top:303.3px;" width="12" height="16" viewBox="0 0 12 16"><path d="M2 1.5 L9.5 8 L2 14.5" fill="none" stroke="#e6e6e6" stroke-width="2.8"/></svg><svg style="left:1045px;top:355.8px;" width="12" height="16" viewBox="0 0 12 16"><path d="M2 1.5 L9.5 8 L2 14.5" fill="none" stroke="#e6e6e6" stroke-width="2.8"/></svg><svg style="left:1045px;top:408.3px;" width="12" height="16" viewBox="0 0 12 16"><path d="M2 1.5 L9.5 8 L2 14.5" fill="none" stroke="#e6e6e6" stroke-width="2.8"/></svg><svg style="left:1045px;top:460.8px;" width="12" height="16" viewBox="0 0 12 16"><path d="M2 1.5 L9.5 8 L2 14.5" fill="none" stroke="#e6e6e6" stroke-width="2.8"/></svg><svg style="left:1045px;top:513.3px;" width="12" height="16" viewBox="0 0 12 16"><path d="M2 1.5 L9.5 8 L2 14.5" fill="none" stroke="#e6e6e6" stroke-width="2.8"/></svg><svg style="left:1045px;top:565.8px;" width="12" height="16" viewBox="0 0 12 16"><path d="M2 1.5 L9.5 8 L2 14.5" fill="none" stroke="#e6e6e6" stroke-width="2.8"/></svg><svg style="left:1045px;top:618.3px;" width="12" height="16" viewBox="0 0 12 16"><path d="M2 1.5 L9.5 8 L2 14.5" fill="none" stroke="#e6e6e6" stroke-width="2.8"/></svg><svg style="left:1045px;top:670.8px;" width="12" height="16" viewBox="0 0 12 16"><path d="M2 1.5 L9.5 8 L2 14.5" fill="none" stroke="#e6e6e6" stroke-width="2.8"/></svg><svg style="left:1045px;top:723.3px;" width="12" height="16" viewBox="0 0 12 16"><path d="M2 1.5 L9.5 8 L2 14.5" fill="none" stroke="#e6e6e6" stroke-width="2.8"/></svg><svg style="left:1045px;top:775.8px;" width="12" height="16" viewBox="0 0 12 16"><path d="M2 1.5 L9.5 8 L2 14.5" fill="none" stroke="#e6e6e6" stroke-width="2.8"/></svg><svg style="left:1045px;top:828.3px;" width="12" height="16" viewBox="0 0 12 16"><path d="M2 1.5 L9.5 8 L2 14.5" fill="none" stroke="#e6e6e6" stroke-width="2.8"/></svg><svg style="left:1045px;top:880.8px;" width="12" height="16" viewBox="0 0 12 16"><path d="M2 1.5 L9.5 8 L2 14.5" fill="none" stroke="#e6e6e6" stroke-width="2.8"/></svg><div style="left:1771px;top:113px;width:14px;height:14px;background:#c4c4c4;border-radius:2px"></div><div style="left:1771px;top:304.2px;width:14px;height:14px;background:#8e9094;border-radius:2.5px"></div><div style="left:1771px;top:356.7px;width:14px;height:14px;background:#8e9094;border-radius:2.5px"></div><div style="left:1771px;top:409.2px;width:14px;height:14px;background:#8e9094;border-radius:2.5px"></div><div style="left:1771px;top:461.7px;width:14px;height:14px;background:#8e9094;border-radius:2.5px"></div><div style="left:1771px;top:514.2px;width:14px;height:14px;background:#8e9094;border-radius:2.5px"></div><div style="left:1771px;top:566.7px;width:14px;height:14px;background:#8e9094;border-radius:2.5px"></div><div style="left:1771px;top:619.2px;width:14px;height:14px;background:#8e9094;border-radius:2.5px"></div><div style="left:1771px;top:671.7px;width:14px;height:14px;background:#8e9094;border-radius:2.5px"></div><div style="left:1771px;top:724.2px;width:14px;height:14px;background:#8e9094;border-radius:2.5px"></div><div style="left:1771px;top:776.7px;width:14px;height:14px;background:#8e9094;border-radius:2.5px"></div><div style="left:1771px;top:829.2px;width:14px;height:14px;background:#8e9094;border-radius:2.5px"></div><div style="left:1771px;top:881.7px;width:14px;height:14px;background:#8e9094;border-radius:2.5px"></div><svg style="left:1801.5px;top:185px;" width="10" height="7" viewBox="0 0 10 7"><polygon points="0,7 10,7 5.0,0" fill="#8a8a8a"/></svg><div style="left:1804px;top:202px;width:6px;height:133px;background:#7c7e82;border-radius:3px"></div><div style="left:1028px;top:529px;width:3.8px;height:49px;background:#808286;border-radius:2px"></div><svg style="left:1041px;top:912px;" width="8" height="11" viewBox="0 0 8 11"><polygon points="8,0 0,5.5 8,11" fill="#8a8a8a"/></svg><div style="left:893px;top:323px;width:271px;height:27px;background:rgba(120,150,180,.13)"><div class="t" style="left:35px;top:4px;font-size:15px;color:rgba(190,200,210,.16);">Vollbild ausschneiden</div></div>
<div style="left:1816px;top:100px;width:251px;height:39.5px;background:#25272b;border-radius:0 7px 0 0"></div><div style="left:1824px;top:113px;width:14px;height:14px;background:#7cf53a;border-radius:2px"></div><div class="t" style="left:1867px;top:111.7px;font-size:15.4px;color:#d2d4d6;">Szenen-Wiedergabeliste</div><svg style="left:2047px;top:111px;" width="20" height="18" viewBox="0 0 20 18"><path d="M1 2 L13 9 L1 16 Z" fill="none" stroke="#4a4d52" stroke-width="2"/><path d="M8 4 L19 4 M10 9 L19 9 M8 14 L19 14" stroke="#4a4d52" stroke-width="2.4"/></svg><div style="left:1816px;top:141px;width:251px;height:34.5px;background:#1f2023"></div><svg style="left:1823.5px;top:149px;" width="16" height="16" viewBox="0 0 16 16"><path d="M4.6 3.4 A6 6 0 1 0 11.4 3.4" fill="none" stroke="#f0f0f0" stroke-width="1.9"/><path d="M8 .8 L8 7.6" stroke="#f0f0f0" stroke-width="1.9"/></svg><div class="t" style="left:1867px;top:149.7px;font-size:15.3px;color:#d2d4d6;">Playlist 1</div><svg style="left:2049px;top:155px;" width="11" height="6.5" viewBox="0 0 11 6.5"><polygon points="0,0 11,0 5.5,6.5" fill="#8a8a8a"/></svg><div style="left:1816px;top:175.5px;width:251px;height:752px;background:#1f2023;border-radius:0 0 7px 0"></div><div style="left:1816px;top:176.0px;width:250.5px;height:25.9px;background:#2446c8"><div class="t" style="left:51px;top:2.7px;font-size:18.5px;color:#e6ecff;letter-spacing:1.2px">Intro</div><div class="t" style="left:213.5px;top:4px;font-size:16.5px;color:#e6ecff;width:30px;text-align:right;">1</div></div><div style="left:1816px;top:203.5px;width:250.5px;height:25.9px;background:#8ef04a;box-shadow:inset 0 0 0 1px #7ea8f0"><div class="t" style="left:51px;top:2.7px;font-size:18.5px;color:#2c4a14;letter-spacing:1.2px">Verse</div><div class="t" style="left:213.5px;top:4px;font-size:16.5px;color:#2c4a14;width:30px;text-align:right;">3</div></div><div style="left:1816px;top:231.0px;width:250.5px;height:25.9px;background:#c46224"><div class="t" style="left:51px;top:2.7px;font-size:18.5px;color:#3c1c06;letter-spacing:1.2px">Chorus</div><div class="t" style="left:213.5px;top:4px;font-size:16.5px;color:#3c1c06;width:30px;text-align:right;">1</div></div><div style="left:1816px;top:258.5px;width:250.5px;height:25.9px;background:#c8239c"><div class="t" style="left:51px;top:2.7px;font-size:18.5px;color:#fbd8f0;letter-spacing:1.2px">Bridge</div><div class="t" style="left:213.5px;top:4px;font-size:16.5px;color:#fbd8f0;width:30px;text-align:right;">1</div></div><div style="left:1816px;top:286.0px;width:250.5px;height:25.9px;background:#c42225"><div class="t" style="left:51px;top:2.7px;font-size:18.5px;color:#fbe0e0;letter-spacing:1.2px">Half Chorus</div><div class="t" style="left:213.5px;top:4px;font-size:16.5px;color:#fbe0e0;width:30px;text-align:right;">1</div></div><div style="left:1816px;top:313.5px;width:250.5px;height:25.9px;background:#1b9e6e"><div class="t" style="left:51px;top:2.7px;font-size:18.5px;color:#082c1c;letter-spacing:1.2px">Open Section ..</div><div class="t" style="left:213.5px;top:4px;font-size:16.5px;color:#082c1c;width:30px;text-align:right;">1</div></div><div style="left:1816px;top:341.0px;width:250.5px;height:25.9px;background:#c46224"><div class="t" style="left:51px;top:2.7px;font-size:18.5px;color:#3c1c06;letter-spacing:1.2px">Outro</div><div class="t" style="left:213.5px;top:4px;font-size:16.5px;color:#3c1c06;width:30px;text-align:right;">1</div></div><svg style="left:1824px;top:208px;" width="16" height="19" viewBox="0 0 16 19"><path d="M8 .8 Q15.2 .8 15.2 6 Q15.2 10 8 18.2 Q.8 10 .8 6 Q.8 .8 8 .8 Z" fill="#f2f2f2" stroke="rgba(0,0,0,.15)" stroke-width=".6"/><circle cx="8" cy="7" r="2" fill="#8ef04a"/></svg><div class="t" style="left:1850px;top:210px;font-size:12.5px;color:#2c4a14;">1</div><div style="left:1916px;top:460px;width:50px;height:4.5px;background:#6c6e72;border-radius:2px"></div><div style="left:1816px;top:464.5px;width:251px;height:1px;background:#2a2c30"></div><div style="left:1816px;top:466px;width:251px;height:32px;background:#212327"></div><div class="t" style="left:1830px;top:473px;font-size:15px;color:#d6d8da;">Szenen</div><svg style="left:2034px;top:473px;" width="16" height="16" viewBox="0 0 16 16"><path d="M8 15 L8 2 M2 7.5 L8 1.5 L14 7.5" fill="none" stroke="#a4a6aa" stroke-width="2"/></svg><div style="left:1816px;top:500.0px;width:251px;height:26.3px;background:#1a2b6e"><div style="left:0px;top:0px;width:19px;height:26.3px;background:#2d5bff"></div><div class="t" style="left:70px;top:4px;font-size:15.5px;color:#ececec;">Intro</div></div><div style="left:1816px;top:527.5px;width:251px;height:26.3px;background:#44721a"><div style="left:0px;top:0px;width:19px;height:26.3px;background:#95fd2b"></div><div class="t" style="left:70px;top:4px;font-size:15.5px;color:#ececec;">Verse</div></div><div style="left:1816px;top:555.0px;width:251px;height:26.3px;background:#6f3a1a"><div style="left:0px;top:0px;width:19px;height:26.3px;background:#ff7a24"></div><div class="t" style="left:70px;top:4px;font-size:15.5px;color:#ececec;">Chorus</div></div><div style="left:1816px;top:582.5px;width:251px;height:26.3px;background:#6e1858"><div style="left:0px;top:0px;width:19px;height:26.3px;background:#ff2ec8"></div><div class="t" style="left:70px;top:4px;font-size:15.5px;color:#ececec;">Bridge</div></div><div style="left:1816px;top:610.0px;width:251px;height:26.3px;background:#70181a"><div style="left:0px;top:0px;width:19px;height:26.3px;background:#ff2a2a"></div><div class="t" style="left:70px;top:4px;font-size:15.5px;color:#ececec;">Half Chorus</div></div><div style="left:1816px;top:637.5px;width:251px;height:26.3px;background:#155a40"><div style="left:0px;top:0px;width:19px;height:26.3px;background:#22cf8e"></div><div class="t" style="left:70px;top:4px;font-size:15.5px;color:#ececec;">Open Section (Scratch)</div></div><div style="left:1816px;top:665.0px;width:251px;height:26.3px;background:#6f3a1a"><div style="left:0px;top:0px;width:19px;height:26.3px;background:#ff7a24"></div><div class="t" style="left:70px;top:4px;font-size:15.5px;color:#ececec;">Outro</div></div><svg style="left:1843px;top:531.5px;" width="16" height="19" viewBox="0 0 16 19"><path d="M8 .8 Q15.2 .8 15.2 6 Q15.2 10 8 18.2 Q.8 10 .8 6 Q.8 .8 8 .8 Z" fill="#f4f4f4" stroke="rgba(0,0,0,.15)" stroke-width=".6"/><circle cx="8" cy="7" r="2" fill="#44721a"/></svg><div style="left:1985px;top:825px;width:82px;height:35px;background:#25272b"></div><div style="left:1985px;top:860px;width:82px;height:67.5px;background:#3a3d43;border-radius:0 0 7px 0"></div><div style="left:1975px;top:864.5px;width:87px;height:22.5px;background:#2e3035;border:1px solid #222327;border-radius:3px"></div><div style="left:1985px;top:864.5px;width:60px;height:22.5px;overflow:hidden"><div class="t" style="left:-13.5px;top:2.3px;font-size:15.5px;color:#d0d2d4;">Trigger</div></div><svg style="left:2047px;top:873px;" width="10" height="6.5" viewBox="0 0 10 6.5"><polygon points="0,0 10,0 5.0,6.5" fill="#8a8a8a"/></svg><div style="left:1975px;top:898px;width:87px;height:22.5px;background:#2e3035;border:1px solid #222327;border-radius:3px"></div><div class="t" style="left:1989px;top:900.3px;font-size:15.5px;color:#d0d2d4;">Takt</div><svg style="left:2047px;top:906.5px;" width="10" height="6.5" viewBox="0 0 10 6.5"><polygon points="0,0 10,0 5.0,6.5" fill="#8a8a8a"/></svg>
<div style="left:10.5px;top:939.5px;width:2057px;height:404.5px;background:#26282c;border-radius:6px;box-shadow:0 0 0 1px #151618"></div><div style="left:11px;top:940px;width:70px;height:404px;background:#474a4f;border-radius:6px 0 0 6px"></div><div style="left:11px;top:940px;width:70px;height:29.5px;background:#212327;border-radius:6px 0 0 0"></div><svg style="left:21.5px;top:947.2px;" width="13" height="13" viewBox="0 0 13 13"><path d="M1 1 L12 12 M12 1 L1 12" stroke="#e8e8e8" stroke-width="2"/></svg><svg style="left:60px;top:948px;" width="13" height="13" viewBox="0 0 13 13"><path d="M2 11 L11 2 M4.5 1.8 L11.2 1.8 L11.2 8.5" fill="none" stroke="#e0e0e0" stroke-width="2"/></svg><div style="left:11px;top:969.5px;width:70px;height:1px;background:#2a2c30"></div><div style="left:11px;top:996.5px;width:70px;height:1px;background:#2a2c30"></div><div style="left:11px;top:1024px;width:70px;height:1px;background:#2a2c30"></div><div style="left:11px;top:1051.5px;width:70px;height:1px;background:#2a2c30"></div><div class="t" style="left:11px;top:976px;font-size:13.5px;color:#c8cacc;width:50px;text-align:center;">I/O</div><div style="left:61.5px;top:970.5px;width:1px;height:26px;background:#2a2c30"></div><svg style="left:66px;top:980px;" width="10" height="6.5" viewBox="0 0 10 6.5"><polygon points="0,0 10,0 5.0,6.5" fill="#d0d0d0"/></svg><svg style="left:38px;top:1001px;" width="18" height="18" viewBox="0 0 18 18"><path d="M3 3 Q6.5 .5 9.5 3.5 Q10.5 5 9.8 6.5 L16 13.5 Q16.4 15 15 15.6 Q14 15.6 13.6 15.2 L7.6 8.6 Q5 9 4 7.4 L6.8 6.6 L6.4 4.2 Z" fill="#d0d0d0"/></svg><svg style="left:26px;top:1026px;" width="20" height="24" viewBox="0 0 20 24"><rect x="3" y="8" width="6" height="9" fill="#909296"/><rect x="11" y="3" width="7" height="11" fill="#b4b6b9"/><path d="M6 2 L6 23 M14.5 0 L14.5 22 M1 12.5 L20 12.5" stroke="#909296" stroke-width="1.3"/></svg><svg style="left:65px;top:1035px;" width="10" height="6.5" viewBox="0 0 10 6.5"><polygon points="0,0 10,0 5.0,6.5" fill="#d0d0d0"/></svg><div style="left:11px;top:1052.5px;width:70px;height:34.5px;background:#33363b"></div><div style="left:11px;top:1087.5px;width:70px;height:1px;background:#2a2c30"></div><div style="left:11px;top:1119px;width:70px;height:1px;background:#2a2c30"></div><div style="left:11px;top:1151px;width:70px;height:1px;background:#2a2c30"></div><div style="left:11px;top:1179.4px;width:70px;height:1px;background:#2a2c30"></div><div style="left:11px;top:1206.5px;width:70px;height:1px;background:#2a2c30"></div><div style="left:11px;top:1234.3px;width:70px;height:1px;background:#2a2c30"></div><div style="left:11px;top:1261px;width:70px;height:1px;background:#2a2c30"></div><div style="left:11px;top:1288.8px;width:70px;height:1px;background:#2a2c30"></div><div style="left:11px;top:1316.5px;width:70px;height:1px;background:#2a2c30"></div><svg style="left:39px;top:1092px;" width="15" height="24" viewBox="0 0 15 24"><polygon points="7.5,0 15,9 0,9" fill="#d4d4d4"/><polygon points="0,14 15,14 7.5,23" fill="#d4d4d4"/></svg><svg style="left:34px;top:1128px;" width="25" height="15" viewBox="0 0 25 15"><polygon points="0,0 11,7.5 0,15" fill="#d4d4d4"/><polygon points="25,0 14,7.5 25,15" fill="#d4d4d4"/></svg><svg style="left:36px;top:1158px;" width="20" height="14" viewBox="0 0 20 14"><path d="M0 7 L10 7" stroke="#d4d4d4" stroke-width="2.6"/><polygon points="7,1 14,7 7,13" fill="#d4d4d4"/><rect x="15.5" y="0" width="3.5" height="14" fill="#d4d4d4"/></svg><svg style="left:36px;top:1186px;" width="20" height="14" viewBox="0 0 20 14"><rect x="0" y="0" width="3.5" height="14" fill="#d4d4d4"/><path d="M5 7 L14 7" stroke="#d4d4d4" stroke-width="2.6"/><polygon points="12,1 19.5,7 12,13" fill="#d4d4d4"/></svg><svg style="left:35px;top:1212px;" width="22" height="16" viewBox="0 0 22 16"><rect x="1" y="1" width="20" height="14" fill="none" stroke="#d4d4d4" stroke-width="2"/><path d="M1 5 L21 5 M6 5 L6 15 M10 8 L10 15 M14 8 L14 15 M18 8 L18 15" stroke="#d4d4d4" stroke-width="1.6"/></svg><svg style="left:35px;top:1240px;" width="22" height="14" viewBox="0 0 22 14"><path d="M0 0 L3 0 L3 8 L6.5 8 L6.5 0 L9 0 L9 8 L12.5 8 L12.5 0 L15 0 L15 8 L18.5 8 L18.5 0 L22 0 L22 14 L0 14 Z" fill="#d4d4d4"/></svg><svg style="left:35px;top:1266px;" width="22" height="17" viewBox="0 0 22 17"><path d="M5 4 L5 1 L21 1 L21 9 L19 9 M3 7 L3 4 L19 4 L19 12 L17 12" fill="none" stroke="#d4d4d4" stroke-width="1.3"/><rect x="1" y="7" width="16" height="9" fill="none" stroke="#d4d4d4" stroke-width="1.5"/><path d="M5 10 L5 16 M9 10 L9 16 M13 10 L13 16" stroke="#d4d4d4" stroke-width="1.3"/></svg><svg style="left:36px;top:1293px;" width="20" height="18" viewBox="0 0 20 18"><circle cx="10" cy="3" r="2.6" fill="#d4d4d4"/><rect x="7" y="6.5" width="6" height="11" fill="#d4d4d4"/><circle cx="3.5" cy="6.5" r="2" fill="#d4d4d4"/><rect x="1" y="9.5" width="4.5" height="8" fill="#d4d4d4"/><circle cx="16.5" cy="6.5" r="2" fill="#d4d4d4"/><rect x="14.5" y="9.5" width="4.5" height="8" fill="#d4d4d4"/></svg><svg style="left:35px;top:1323px;" width="22" height="15" viewBox="0 0 22 15"><path d="M0 1.2 L22 1.2 M0 5.4 L22 5.4 M0 9.6 L22 9.6 M0 13.8 L22 13.8" stroke="#d4d4d4" stroke-width="2.2"/></svg><div style="left:84.0px;top:940px;width:105.8px;height:364.5px;background:linear-gradient(#5a606a,#666c76 45%,#595f68)"></div><div style="left:84.0px;top:940px;width:105.8px;height:4.2px;background:#2787d9"></div><div style="left:89.0px;top:949.5px;width:96.5px;height:20px;background:#0e0e0f;border-radius:3px;overflow:hidden"><svg style="left:0px;top:0px;" width="96.5" height="20" viewBox="0 0 96.5 20"><polygon points="3,2 46,19 3,19" fill="#1b1c1e"/><polygon points="93.5,2 51,19 93.5,19" fill="#1b1c1e"/></svg></div><div style="left:136.0px;top:950.5px;width:2px;height:18.5px;background:#35b4e8"></div><svg style="left:90.0px;top:981px;" width="11" height="8" viewBox="0 0 11 8"><polygon points="1,1 10,1 5.5,7" fill="none" stroke="#1c1d20" stroke-width="1.3"/></svg><div class="t" style="left:84.0px;top:976px;font-size:14px;color:#ececec;width:105.8px;text-align:center;">&lt;C&gt;</div><div style="left:94.5px;top:999.5px;width:85.5px;height:50.5px;background:#4b5059;border:1px solid #1d1e21;border-radius:4px"></div><div style="left:136.75px;top:1000.5px;width:1px;height:48.5px;background:#25262a"></div><div style="left:95.5px;top:1024.25px;width:83.5px;height:1px;background:#25262a"></div><div class="t" style="left:94.5px;top:999.5px;font-size:16px;color:#d8d8d8;width:42.75px;height:25px;line-height:25px;text-align:center;">M</div><div class="t" style="left:137.25px;top:999.5px;font-size:16px;color:#d8d8d8;width:42.75px;height:25px;line-height:25px;text-align:center;">S</div><div style="left:109.875px;top:1031.375px;width:12px;height:12px;background:#2a2c30;border-radius:6px"></div><svg style="left:151.625px;top:1030.375px;" width="14" height="14" viewBox="0 0 14 14"><path d="M6.5 1 A6 6 0 0 0 6.5 13 Z" fill="#2a2c30"/><path d="M8.5 1.6 A6 6 0 0 1 8.5 12.4" fill="none" stroke="#2a2c30" stroke-width="1.4"/></svg><div class="t" style="left:80.0px;top:1062.3px;font-size:14px;color:#e4e4e4;width:105.8px;text-align:center;">-4.5</div><div style="left:160.0px;top:1086px;width:14px;height:4px;background:#4ab4f0"></div><div style="left:160.0px;top:1091.5px;width:14px;height:4px;background:#55585d"></div><div style="left:160.0px;top:1097px;width:14px;height:4px;background:#55585d"></div><div style="left:104.5px;top:1086px;width:17.3px;height:159.5px;background:#1b1d21;border-radius:3px;box-shadow:0 0 0 1px #2a2c30"></div><div style="left:107.5px;top:1105.0px;width:11.5px;height:1.2px;background:#17506e"></div><div style="left:107.5px;top:1116.5px;width:11.5px;height:1.2px;background:#17506e"></div><div style="left:107.5px;top:1135.5px;width:11.5px;height:1.2px;#8a8c8e"></div><div style="left:107.5px;top:1155.5px;width:11.5px;height:1.2px;background:#17506e"></div><div style="left:107.5px;top:1172.0px;width:11.5px;height:1.2px;background:#17506e"></div><div style="left:107.5px;top:1191.0px;width:11.5px;height:1.2px;background:#17506e"></div><div style="left:107.5px;top:1211.0px;width:11.5px;height:1.2px;background:#17506e"></div><div style="left:107.5px;top:1223.0px;width:11.5px;height:1.2px;background:#17506e"></div><div style="left:107.5px;top:1227px;width:11.5px;height:1.2px;background:#17506e"></div><div style="left:107.5px;top:1237px;width:11.5px;height:1.2px;background:#17506e"></div><div style="left:107.0px;top:1174px;width:5px;height:69px;background:repeating-linear-gradient(#3fa4ea 0 2px,#2a78b8 2px 3px)"></div><div style="left:114.0px;top:1174px;width:5px;height:69px;background:repeating-linear-gradient(#3fa4ea 0 2px,#2a78b8 2px 3px)"></div><div style="left:119.5px;top:1137px;width:1.3px;height:37px;background:#e8b82a"></div><div class="t" style="left:82.0px;top:1099.0px;font-size:10.5px;color:#b4b6b9;width:20px;text-align:right;font-weight:bold;letter-spacing:-.5px">10</div><div class="t" style="left:82.0px;top:1110.5px;font-size:10.5px;color:#b4b6b9;width:20px;text-align:right;font-weight:bold;letter-spacing:-.5px">6</div><div class="t" style="left:82.0px;top:1129.5px;font-size:10.5px;color:#b4b6b9;width:20px;text-align:right;font-weight:bold;letter-spacing:-.5px">0</div><div class="t" style="left:82.0px;top:1149.5px;font-size:10.5px;color:#b4b6b9;width:20px;text-align:right;font-weight:bold;letter-spacing:-.5px">-6</div><div class="t" style="left:82.0px;top:1166.0px;font-size:10.5px;color:#b4b6b9;width:20px;text-align:right;font-weight:bold;letter-spacing:-.5px">-12</div><div class="t" style="left:82.0px;top:1185.0px;font-size:10.5px;color:#b4b6b9;width:20px;text-align:right;font-weight:bold;letter-spacing:-.5px">-24</div><div class="t" style="left:82.0px;top:1205.0px;font-size:10.5px;color:#b4b6b9;width:20px;text-align:right;font-weight:bold;letter-spacing:-.5px">-36</div><div class="t" style="left:82.0px;top:1217.0px;font-size:10.5px;color:#b4b6b9;width:20px;text-align:right;font-weight:bold;letter-spacing:-.5px">-48</div><div style="left:128.0px;top:1155px;width:18px;height:90px;background:#4c4f55;border-radius:2px"></div><div style="left:129.5px;top:1120px;width:16px;height:1px;background:#6a6c70"></div><div style="left:129.5px;top:1136.5px;width:16px;height:1px;background:#6a6c70"></div><div style="left:129.5px;top:1180px;width:16px;height:1px;background:#606368"></div><div style="left:129.5px;top:1196px;width:16px;height:1px;background:#606368"></div><div style="left:129.5px;top:1201px;width:16px;height:1px;background:#606368"></div><div style="left:129.5px;top:1207px;width:16px;height:1px;background:#606368"></div><div style="left:129.5px;top:1215px;width:16px;height:1px;background:#606368"></div><div style="left:136.0px;top:1106.5px;width:2.6px;height:117px;background:#17181a;border-radius:1px"></div><div style="left:125.5px;top:1125px;width:24px;height:45.5px;border-radius:4px;background:linear-gradient(#9a9a9a 0,#e8e8e8 5%,#fff 10%,#d0d0d0 22%,#f4f4f4 32%,#fafafa 48%,#444 49%,#444 51%,#fff 52%,#fcfcfc 80%,#e0e0e0 90%,#8a8a8a 100%);box-shadow:0 1px 3px rgba(0,0,0,.6),inset 1.5px 0 0 rgba(120,120,120,.5),inset -1.5px 0 0 rgba(120,120,120,.5)"></div><div style="left:160.0px;top:1191px;width:7px;height:14px;background:#a0a2a5;border-radius:1px"></div><div style="left:169.0px;top:1191px;width:7px;height:14px;background:#77797d;border-radius:1px"></div><svg style="left:157.5px;top:1221.5px;" width="21" height="21" viewBox="0 0 21 21"><circle cx="10.5" cy="10.5" r="10.3" fill="#a2a4a7"/><rect x="4" y="6" width="4.2" height="9" rx="1" fill="#3a3d43"/><rect x="9.6" y="6" width="3" height="9" fill="#3a3d43"/><rect x="14" y="6" width="3" height="9" rx="1" fill="#3a3d43"/></svg><div class="t" style="left:94.0px;top:1253.5px;font-size:14.6px;color:#f0f0f0;width:30px;text-align:center;font-weight:bold">5</div><svg style="left:158.0px;top:1253.2px;" width="21" height="17.5" viewBox="0 0 21 17.5"><path d="M0 9.3 L4.7 9.3 L3 14.4 Q2.3 15.2 1.7 14.4 Z M4.5 9.3 L9.3 9.3 L7.6 2.6 Q6.9 1.6 6.2 2.6 Z M9.1 9.3 L12.5 9.3 L11.3 16 Q10.8 16.8 10.3 16 Z M12.3 9.3 L16.6 9.3 L15.2 .9 Q14.5 -.2 13.8 .9 Z M16.4 9.3 L21 9.3 L19.3 14.6 Q18.7 15.4 18.1 14.6 Z" fill="#e4e4e4"/></svg><div style="left:92.5px;top:1276.5px;width:88.5px;height:19px;background:#7eae72"><div class="t" style="left:0px;top:0px;font-size:13.5px;color:#14240f;width:88.5px;height:19.5px;line-height:19.5px;text-align:center;">Read</div></div><div style="left:84.0px;top:1304px;width:105.8px;height:17px;background:#2787d9;border-radius:0 0 7px 7px"><div class="t" style="left:-10px;top:0.6px;font-size:14.2px;color:#f6f6f6;width:125.8px;height:17px;line-height:17px;text-align:center;">Snare</div></div><div style="left:192.75px;top:940px;width:105.8px;height:364.5px;background:#3a3d43"></div><div style="left:192.75px;top:940px;width:105.8px;height:4.2px;background:#2787d9"></div><div style="left:197.75px;top:949.5px;width:96.5px;height:20px;background:#0e0e0f;border-radius:3px;overflow:hidden"><svg style="left:0px;top:0px;" width="96.5" height="20" viewBox="0 0 96.5 20"><polygon points="3,2 46,19 3,19" fill="#1b1c1e"/><polygon points="93.5,2 51,19 93.5,19" fill="#1b1c1e"/></svg></div><div style="left:244.75px;top:950.5px;width:2px;height:18.5px;background:#35b4e8"></div><svg style="left:198.75px;top:981px;" width="11" height="8" viewBox="0 0 11 8"><polygon points="1,1 10,1 5.5,7" fill="none" stroke="#1c1d20" stroke-width="1.3"/></svg><div class="t" style="left:192.75px;top:976px;font-size:14px;color:#ececec;width:105.8px;text-align:center;">&lt;C&gt;</div><div style="left:203.25px;top:999.5px;width:85.5px;height:50.5px;background:#3a3d43;border:1px solid #1d1e21;border-radius:4px"></div><div style="left:245.5px;top:1000.5px;width:1px;height:48.5px;background:#25262a"></div><div style="left:204.25px;top:1024.25px;width:83.5px;height:1px;background:#25262a"></div><div class="t" style="left:203.25px;top:999.5px;font-size:16px;color:#d8d8d8;width:42.75px;height:25px;line-height:25px;text-align:center;">M</div><div class="t" style="left:246.0px;top:999.5px;font-size:16px;color:#d8d8d8;width:42.75px;height:25px;line-height:25px;text-align:center;">S</div><div style="left:218.625px;top:1031.375px;width:12px;height:12px;background:#d0d0d0;border-radius:6px"></div><svg style="left:260.375px;top:1030.375px;" width="14" height="14" viewBox="0 0 14 14"><path d="M6.5 1 A6 6 0 0 0 6.5 13 Z" fill="#d0d0d0"/><path d="M8.5 1.6 A6 6 0 0 1 8.5 12.4" fill="none" stroke="#d0d0d0" stroke-width="1.4"/></svg><div class="t" style="left:188.75px;top:1062.3px;font-size:14px;color:#e4e4e4;width:105.8px;text-align:center;">-7.5</div><div style="left:268.75px;top:1086px;width:14px;height:4px;background:#55585d"></div><div style="left:268.75px;top:1091.5px;width:14px;height:4px;background:#55585d"></div><div style="left:268.75px;top:1097px;width:14px;height:4px;background:#55585d"></div><div style="left:213.25px;top:1086px;width:17.3px;height:159.5px;background:#1b1d21;border-radius:3px;box-shadow:0 0 0 1px #2a2c30"></div><div style="left:216.25px;top:1105.0px;width:11.5px;height:1.2px;background:#17506e"></div><div style="left:216.25px;top:1116.5px;width:11.5px;height:1.2px;background:#17506e"></div><div style="left:216.25px;top:1135.5px;width:11.5px;height:1.2px;#8a8c8e"></div><div style="left:216.25px;top:1155.5px;width:11.5px;height:1.2px;background:#17506e"></div><div style="left:216.25px;top:1172.0px;width:11.5px;height:1.2px;background:#17506e"></div><div style="left:216.25px;top:1191.0px;width:11.5px;height:1.2px;background:#17506e"></div><div style="left:216.25px;top:1211.0px;width:11.5px;height:1.2px;background:#17506e"></div><div style="left:216.25px;top:1223.0px;width:11.5px;height:1.2px;background:#17506e"></div><div style="left:216.25px;top:1227px;width:11.5px;height:1.2px;background:#17506e"></div><div style="left:216.25px;top:1237px;width:11.5px;height:1.2px;background:#17506e"></div><div class="t" style="left:190.75px;top:1099.0px;font-size:10.5px;color:#b4b6b9;width:20px;text-align:right;font-weight:bold;letter-spacing:-.5px">10</div><div class="t" style="left:190.75px;top:1110.5px;font-size:10.5px;color:#b4b6b9;width:20px;text-align:right;font-weight:bold;letter-spacing:-.5px">6</div><div class="t" style="left:190.75px;top:1129.5px;font-size:10.5px;color:#b4b6b9;width:20px;text-align:right;font-weight:bold;letter-spacing:-.5px">0</div><div class="t" style="left:190.75px;top:1149.5px;font-size:10.5px;color:#b4b6b9;width:20px;text-align:right;font-weight:bold;letter-spacing:-.5px">-6</div><div class="t" style="left:190.75px;top:1166.0px;font-size:10.5px;color:#b4b6b9;width:20px;text-align:right;font-weight:bold;letter-spacing:-.5px">-12</div><div class="t" style="left:190.75px;top:1185.0px;font-size:10.5px;color:#b4b6b9;width:20px;text-align:right;font-weight:bold;letter-spacing:-.5px">-24</div><div class="t" style="left:190.75px;top:1205.0px;font-size:10.5px;color:#b4b6b9;width:20px;text-align:right;font-weight:bold;letter-spacing:-.5px">-36</div><div class="t" style="left:190.75px;top:1217.0px;font-size:10.5px;color:#b4b6b9;width:20px;text-align:right;font-weight:bold;letter-spacing:-.5px">-48</div><div style="left:236.75px;top:1164px;width:18px;height:81px;background:#4c4f55;border-radius:2px"></div><div style="left:238.25px;top:1120px;width:16px;height:1px;background:#6a6c70"></div><div style="left:238.25px;top:1136.5px;width:16px;height:1px;background:#6a6c70"></div><div style="left:238.25px;top:1196px;width:16px;height:1px;background:#606368"></div><div style="left:238.25px;top:1201px;width:16px;height:1px;background:#606368"></div><div style="left:238.25px;top:1207px;width:16px;height:1px;background:#606368"></div><div style="left:238.25px;top:1215px;width:16px;height:1px;background:#606368"></div><div style="left:244.75px;top:1106.5px;width:2.6px;height:117px;background:#17181a;border-radius:1px"></div><div style="left:234.25px;top:1134px;width:24px;height:45.5px;border-radius:4px;background:linear-gradient(#9a9a9a 0,#e8e8e8 5%,#fff 10%,#d0d0d0 22%,#f4f4f4 32%,#fafafa 48%,#444 49%,#444 51%,#fff 52%,#fcfcfc 80%,#e0e0e0 90%,#8a8a8a 100%);box-shadow:0 1px 3px rgba(0,0,0,.6),inset 1.5px 0 0 rgba(120,120,120,.5),inset -1.5px 0 0 rgba(120,120,120,.5)"></div><div style="left:268.75px;top:1191px;width:7px;height:14px;background:#a0a2a5;border-radius:1px"></div><div style="left:277.75px;top:1191px;width:7px;height:14px;background:#77797d;border-radius:1px"></div><svg style="left:266.25px;top:1221.5px;" width="21" height="21" viewBox="0 0 21 21"><circle cx="10.5" cy="10.5" r="10.3" fill="#a2a4a7"/><rect x="4" y="6" width="4.2" height="9" rx="1" fill="#3a3d43"/><rect x="9.6" y="6" width="3" height="9" fill="#3a3d43"/><rect x="14" y="6" width="3" height="9" rx="1" fill="#3a3d43"/></svg><div class="t" style="left:202.75px;top:1253.5px;font-size:14.6px;color:#d4d6d8;width:30px;text-align:center;font-weight:bold">6</div><svg style="left:266.25px;top:1256px;" width="22" height="14" viewBox="0 0 22 14"><path d="M0 0 L3 0 L3 8 L6.5 8 L6.5 0 L9 0 L9 8 L12.5 8 L12.5 0 L15 0 L15 8 L18.5 8 L18.5 0 L22 0 L22 14 L0 14 Z" fill="#c0c2c4"/></svg><div style="left:201.25px;top:1276.5px;width:88.5px;height:19px;background:#232529"><div class="t" style="left:0px;top:0px;font-size:13.3px;color:#8c8f93;width:88.5px;height:19.5px;line-height:19.5px;text-align:center;">Auto: Off</div></div><div style="left:192.75px;top:1304px;width:105.8px;height:17px;background:#2787d9;border-radius:0 0 7px 7px"><div class="t" style="left:-10px;top:0.6px;font-size:14.2px;color:#f6f6f6;width:125.8px;height:17px;line-height:17px;text-align:center;">Trap Snare</div></div><div style="left:301.5px;top:940px;width:105.8px;height:364.5px;background:#3a3d43"></div><div style="left:301.5px;top:940px;width:105.8px;height:4.2px;background:#2787d9"></div><div style="left:306.5px;top:949.5px;width:96.5px;height:20px;background:#0e0e0f;border-radius:3px;overflow:hidden"><svg style="left:0px;top:0px;" width="96.5" height="20" viewBox="0 0 96.5 20"><polygon points="3,2 46,19 3,19" fill="#1b1c1e"/><polygon points="93.5,2 51,19 93.5,19" fill="#1b1c1e"/></svg></div><div style="left:353.5px;top:950.5px;width:2px;height:18.5px;background:#35b4e8"></div><svg style="left:307.5px;top:981px;" width="11" height="8" viewBox="0 0 11 8"><polygon points="1,1 10,1 5.5,7" fill="none" stroke="#1c1d20" stroke-width="1.3"/></svg><div class="t" style="left:301.5px;top:976px;font-size:14px;color:#ececec;width:105.8px;text-align:center;">&lt;C&gt;</div><div style="left:312.0px;top:999.5px;width:85.5px;height:50.5px;background:#3a3d43;border:1px solid #1d1e21;border-radius:4px"></div><div style="left:354.25px;top:1000.5px;width:1px;height:48.5px;background:#25262a"></div><div style="left:313.0px;top:1024.25px;width:83.5px;height:1px;background:#25262a"></div><div class="t" style="left:312.0px;top:999.5px;font-size:16px;color:#d8d8d8;width:42.75px;height:25px;line-height:25px;text-align:center;">M</div><div class="t" style="left:354.75px;top:999.5px;font-size:16px;color:#d8d8d8;width:42.75px;height:25px;line-height:25px;text-align:center;">S</div><div style="left:327.375px;top:1031.375px;width:12px;height:12px;background:#2a2c30;border-radius:6px"></div><svg style="left:369.125px;top:1030.375px;" width="14" height="14" viewBox="0 0 14 14"><path d="M6.5 1 A6 6 0 0 0 6.5 13 Z" fill="#2a2c30"/><path d="M8.5 1.6 A6 6 0 0 1 8.5 12.4" fill="none" stroke="#2a2c30" stroke-width="1.4"/></svg><div class="t" style="left:297.5px;top:1062.3px;font-size:14px;color:#e4e4e4;width:105.8px;text-align:center;">-6.7</div><div style="left:377.5px;top:1086px;width:14px;height:4px;background:#4ab4f0"></div><div style="left:377.5px;top:1091.5px;width:14px;height:4px;background:#55585d"></div><div style="left:377.5px;top:1097px;width:14px;height:4px;background:#55585d"></div><div style="left:322.0px;top:1086px;width:17.3px;height:159.5px;background:#1b1d21;border-radius:3px;box-shadow:0 0 0 1px #2a2c30"></div><div style="left:325.0px;top:1105.0px;width:11.5px;height:1.2px;background:#17506e"></div><div style="left:325.0px;top:1116.5px;width:11.5px;height:1.2px;background:#17506e"></div><div style="left:325.0px;top:1135.5px;width:11.5px;height:1.2px;#8a8c8e"></div><div style="left:325.0px;top:1155.5px;width:11.5px;height:1.2px;background:#17506e"></div><div style="left:325.0px;top:1172.0px;width:11.5px;height:1.2px;background:#17506e"></div><div style="left:325.0px;top:1191.0px;width:11.5px;height:1.2px;background:#17506e"></div><div style="left:325.0px;top:1211.0px;width:11.5px;height:1.2px;background:#17506e"></div><div style="left:325.0px;top:1223.0px;width:11.5px;height:1.2px;background:#17506e"></div><div style="left:325.0px;top:1227px;width:11.5px;height:1.2px;background:#17506e"></div><div style="left:325.0px;top:1237px;width:11.5px;height:1.2px;background:#17506e"></div><div class="t" style="left:299.5px;top:1099.0px;font-size:10.5px;color:#b4b6b9;width:20px;text-align:right;font-weight:bold;letter-spacing:-.5px">10</div><div class="t" style="left:299.5px;top:1110.5px;font-size:10.5px;color:#b4b6b9;width:20px;text-align:right;font-weight:bold;letter-spacing:-.5px">6</div><div class="t" style="left:299.5px;top:1129.5px;font-size:10.5px;color:#b4b6b9;width:20px;text-align:right;font-weight:bold;letter-spacing:-.5px">0</div><div class="t" style="left:299.5px;top:1149.5px;font-size:10.5px;color:#b4b6b9;width:20px;text-align:right;font-weight:bold;letter-spacing:-.5px">-6</div><div class="t" style="left:299.5px;top:1166.0px;font-size:10.5px;color:#b4b6b9;width:20px;text-align:right;font-weight:bold;letter-spacing:-.5px">-12</div><div class="t" style="left:299.5px;top:1185.0px;font-size:10.5px;color:#b4b6b9;width:20px;text-align:right;font-weight:bold;letter-spacing:-.5px">-24</div><div class="t" style="left:299.5px;top:1205.0px;font-size:10.5px;color:#b4b6b9;width:20px;text-align:right;font-weight:bold;letter-spacing:-.5px">-36</div><div class="t" style="left:299.5px;top:1217.0px;font-size:10.5px;color:#b4b6b9;width:20px;text-align:right;font-weight:bold;letter-spacing:-.5px">-48</div><div style="left:345.5px;top:1161px;width:18px;height:84px;background:#4c4f55;border-radius:2px"></div><div style="left:347.0px;top:1120px;width:16px;height:1px;background:#6a6c70"></div><div style="left:347.0px;top:1136.5px;width:16px;height:1px;background:#6a6c70"></div><div style="left:347.0px;top:1180px;width:16px;height:1px;background:#606368"></div><div style="left:347.0px;top:1196px;width:16px;height:1px;background:#606368"></div><div style="left:347.0px;top:1201px;width:16px;height:1px;background:#606368"></div><div style="left:347.0px;top:1207px;width:16px;height:1px;background:#606368"></div><div style="left:347.0px;top:1215px;width:16px;height:1px;background:#606368"></div><div style="left:353.5px;top:1106.5px;width:2.6px;height:117px;background:#17181a;border-radius:1px"></div><div style="left:343.0px;top:1131px;width:24px;height:45.5px;border-radius:4px;background:linear-gradient(#9a9a9a 0,#e8e8e8 5%,#fff 10%,#d0d0d0 22%,#f4f4f4 32%,#fafafa 48%,#444 49%,#444 51%,#fff 52%,#fcfcfc 80%,#e0e0e0 90%,#8a8a8a 100%);box-shadow:0 1px 3px rgba(0,0,0,.6),inset 1.5px 0 0 rgba(120,120,120,.5),inset -1.5px 0 0 rgba(120,120,120,.5)"></div><div style="left:377.5px;top:1191px;width:7px;height:14px;background:#a0a2a5;border-radius:1px"></div><div style="left:386.5px;top:1191px;width:7px;height:14px;background:#77797d;border-radius:1px"></div><svg style="left:375.0px;top:1221.5px;" width="21" height="21" viewBox="0 0 21 21"><circle cx="10.5" cy="10.5" r="10.3" fill="#a2a4a7"/><rect x="4" y="6" width="4.2" height="9" rx="1" fill="#3a3d43"/><rect x="9.6" y="6" width="3" height="9" fill="#3a3d43"/><rect x="14" y="6" width="3" height="9" rx="1" fill="#3a3d43"/></svg><div class="t" style="left:311.5px;top:1253.5px;font-size:14.6px;color:#d4d6d8;width:30px;text-align:center;font-weight:bold">7</div><svg style="left:375.5px;top:1253.2px;" width="21" height="17.5" viewBox="0 0 21 17.5"><path d="M0 9.3 L4.7 9.3 L3 14.4 Q2.3 15.2 1.7 14.4 Z M4.5 9.3 L9.3 9.3 L7.6 2.6 Q6.9 1.6 6.2 2.6 Z M9.1 9.3 L12.5 9.3 L11.3 16 Q10.8 16.8 10.3 16 Z M12.3 9.3 L16.6 9.3 L15.2 .9 Q14.5 -.2 13.8 .9 Z M16.4 9.3 L21 9.3 L19.3 14.6 Q18.7 15.4 18.1 14.6 Z" fill="#c4c6c8"/></svg><div style="left:310.0px;top:1276.5px;width:88.5px;height:19px;background:#232529"><div class="t" style="left:0px;top:0px;font-size:13.3px;color:#8c8f93;width:88.5px;height:19.5px;line-height:19.5px;text-align:center;">Auto: Off</div></div><div style="left:301.5px;top:1304px;width:105.8px;height:17px;background:#2787d9;border-radius:0 0 7px 7px"><div class="t" style="left:-10px;top:0.6px;font-size:14.2px;color:#f6f6f6;width:125.8px;height:17px;line-height:17px;text-align:center;">Claps</div></div><div style="left:410.25px;top:940px;width:105.8px;height:364.5px;background:#3a3d43"></div><div style="left:410.25px;top:940px;width:105.8px;height:4.2px;background:#2787d9"></div><div style="left:415.25px;top:949.5px;width:96.5px;height:20px;background:#0e0e0f;border-radius:3px;overflow:hidden"><svg style="left:0px;top:0px;" width="96.5" height="20" viewBox="0 0 96.5 20"><polygon points="3,2 46,19 3,19" fill="#1b1c1e"/><polygon points="93.5,2 51,19 93.5,19" fill="#1b1c1e"/></svg></div><div style="left:462.25px;top:950.5px;width:2px;height:18.5px;background:#35b4e8"></div><svg style="left:416.25px;top:981px;" width="11" height="8" viewBox="0 0 11 8"><polygon points="1,1 10,1 5.5,7" fill="none" stroke="#1c1d20" stroke-width="1.3"/></svg><div class="t" style="left:410.25px;top:976px;font-size:14px;color:#ececec;width:105.8px;text-align:center;">&lt;C&gt;</div><div style="left:420.75px;top:999.5px;width:85.5px;height:50.5px;background:#3a3d43;border:1px solid #1d1e21;border-radius:4px"></div><div style="left:463.0px;top:1000.5px;width:1px;height:48.5px;background:#25262a"></div><div style="left:421.75px;top:1024.25px;width:83.5px;height:1px;background:#25262a"></div><div class="t" style="left:420.75px;top:999.5px;font-size:16px;color:#d8d8d8;width:42.75px;height:25px;line-height:25px;text-align:center;">M</div><div class="t" style="left:463.5px;top:999.5px;font-size:16px;color:#d8d8d8;width:42.75px;height:25px;line-height:25px;text-align:center;">S</div><div style="left:436.125px;top:1031.375px;width:12px;height:12px;background:#2a2c30;border-radius:6px"></div><svg style="left:477.875px;top:1030.375px;" width="14" height="14" viewBox="0 0 14 14"><path d="M6.5 1 A6 6 0 0 0 6.5 13 Z" fill="#2a2c30"/><path d="M8.5 1.6 A6 6 0 0 1 8.5 12.4" fill="none" stroke="#2a2c30" stroke-width="1.4"/></svg><div class="t" style="left:406.25px;top:1062.3px;font-size:14px;color:#e4e4e4;width:105.8px;text-align:center;">-13.0</div><div style="left:486.25px;top:1086px;width:14px;height:4px;background:#55585d"></div><div style="left:486.25px;top:1091.5px;width:14px;height:4px;background:#55585d"></div><div style="left:486.25px;top:1097px;width:14px;height:4px;background:#55585d"></div><div style="left:430.75px;top:1086px;width:17.3px;height:159.5px;background:#1b1d21;border-radius:3px;box-shadow:0 0 0 1px #2a2c30"></div><div style="left:433.75px;top:1105.0px;width:11.5px;height:1.2px;background:#17506e"></div><div style="left:433.75px;top:1116.5px;width:11.5px;height:1.2px;background:#17506e"></div><div style="left:433.75px;top:1135.5px;width:11.5px;height:1.2px;#8a8c8e"></div><div style="left:433.75px;top:1155.5px;width:11.5px;height:1.2px;background:#17506e"></div><div style="left:433.75px;top:1172.0px;width:11.5px;height:1.2px;background:#17506e"></div><div style="left:433.75px;top:1191.0px;width:11.5px;height:1.2px;background:#17506e"></div><div style="left:433.75px;top:1211.0px;width:11.5px;height:1.2px;background:#17506e"></div><div style="left:433.75px;top:1223.0px;width:11.5px;height:1.2px;background:#17506e"></div><div style="left:433.75px;top:1227px;width:11.5px;height:1.2px;background:#17506e"></div><div style="left:433.75px;top:1237px;width:11.5px;height:1.2px;background:#17506e"></div><div class="t" style="left:408.25px;top:1099.0px;font-size:10.5px;color:#b4b6b9;width:20px;text-align:right;font-weight:bold;letter-spacing:-.5px">10</div><div class="t" style="left:408.25px;top:1110.5px;font-size:10.5px;color:#b4b6b9;width:20px;text-align:right;font-weight:bold;letter-spacing:-.5px">6</div><div class="t" style="left:408.25px;top:1129.5px;font-size:10.5px;color:#b4b6b9;width:20px;text-align:right;font-weight:bold;letter-spacing:-.5px">0</div><div class="t" style="left:408.25px;top:1149.5px;font-size:10.5px;color:#b4b6b9;width:20px;text-align:right;font-weight:bold;letter-spacing:-.5px">-6</div><div class="t" style="left:408.25px;top:1166.0px;font-size:10.5px;color:#b4b6b9;width:20px;text-align:right;font-weight:bold;letter-spacing:-.5px">-12</div><div class="t" style="left:408.25px;top:1185.0px;font-size:10.5px;color:#b4b6b9;width:20px;text-align:right;font-weight:bold;letter-spacing:-.5px">-24</div><div class="t" style="left:408.25px;top:1205.0px;font-size:10.5px;color:#b4b6b9;width:20px;text-align:right;font-weight:bold;letter-spacing:-.5px">-36</div><div class="t" style="left:408.25px;top:1217.0px;font-size:10.5px;color:#b4b6b9;width:20px;text-align:right;font-weight:bold;letter-spacing:-.5px">-48</div><div style="left:454.25px;top:1174.5px;width:18px;height:70.5px;background:#4c4f55;border-radius:2px"></div><div style="left:455.75px;top:1120px;width:16px;height:1px;background:#6a6c70"></div><div style="left:455.75px;top:1136.5px;width:16px;height:1px;background:#6a6c70"></div><div style="left:455.75px;top:1196px;width:16px;height:1px;background:#606368"></div><div style="left:455.75px;top:1201px;width:16px;height:1px;background:#606368"></div><div style="left:455.75px;top:1207px;width:16px;height:1px;background:#606368"></div><div style="left:455.75px;top:1215px;width:16px;height:1px;background:#606368"></div><div style="left:462.25px;top:1106.5px;width:2.6px;height:117px;background:#17181a;border-radius:1px"></div><div style="left:451.75px;top:1144.5px;width:24px;height:45.5px;border-radius:4px;background:linear-gradient(#9a9a9a 0,#e8e8e8 5%,#fff 10%,#d0d0d0 22%,#f4f4f4 32%,#fafafa 48%,#444 49%,#444 51%,#fff 52%,#fcfcfc 80%,#e0e0e0 90%,#8a8a8a 100%);box-shadow:0 1px 3px rgba(0,0,0,.6),inset 1.5px 0 0 rgba(120,120,120,.5),inset -1.5px 0 0 rgba(120,120,120,.5)"></div><div style="left:486.25px;top:1191px;width:7px;height:14px;background:#a0a2a5;border-radius:1px"></div><div style="left:495.25px;top:1191px;width:7px;height:14px;background:#77797d;border-radius:1px"></div><svg style="left:483.75px;top:1221.5px;" width="21" height="21" viewBox="0 0 21 21"><circle cx="10.5" cy="10.5" r="10.3" fill="#a2a4a7"/><rect x="4" y="6" width="4.2" height="9" rx="1" fill="#3a3d43"/><rect x="9.6" y="6" width="3" height="9" fill="#3a3d43"/><rect x="14" y="6" width="3" height="9" rx="1" fill="#3a3d43"/></svg><div class="t" style="left:420.25px;top:1253.5px;font-size:14.6px;color:#d4d6d8;width:30px;text-align:center;font-weight:bold">8</div><svg style="left:484.25px;top:1253.2px;" width="21" height="17.5" viewBox="0 0 21 17.5"><path d="M0 9.3 L4.7 9.3 L3 14.4 Q2.3 15.2 1.7 14.4 Z M4.5 9.3 L9.3 9.3 L7.6 2.6 Q6.9 1.6 6.2 2.6 Z M9.1 9.3 L12.5 9.3 L11.3 16 Q10.8 16.8 10.3 16 Z M12.3 9.3 L16.6 9.3 L15.2 .9 Q14.5 -.2 13.8 .9 Z M16.4 9.3 L21 9.3 L19.3 14.6 Q18.7 15.4 18.1 14.6 Z" fill="#c4c6c8"/></svg><div style="left:418.75px;top:1276.5px;width:88.5px;height:19px;background:#232529"><div class="t" style="left:0px;top:0px;font-size:13.3px;color:#8c8f93;width:88.5px;height:19.5px;line-height:19.5px;text-align:center;">Auto: Off</div></div><div style="left:410.25px;top:1304px;width:105.8px;height:17px;background:#2787d9;border-radius:0 0 7px 7px"><div class="t" style="left:-10px;top:0.6px;font-size:14.2px;color:#f6f6f6;width:125.8px;height:17px;line-height:17px;text-align:center;">Claps</div></div><div style="left:519.0px;top:940px;width:105.8px;height:364.5px;background:#3a3d43"></div><div style="left:519.0px;top:940px;width:105.8px;height:4.2px;background:#2787d9"></div><div style="left:524.0px;top:949.5px;width:96.5px;height:20px;background:#0e0e0f;border-radius:3px;overflow:hidden"><svg style="left:0px;top:0px;" width="96.5" height="20" viewBox="0 0 96.5 20"><polygon points="3,2 46,19 3,19" fill="#1b1c1e"/><polygon points="93.5,2 51,19 93.5,19" fill="#1b1c1e"/></svg></div><div style="left:559.0px;top:950px;width:12px;height:19px;background:#0f5674"></div><svg style="left:559.0px;top:950px;" width="12" height="19" viewBox="0 0 12 19"><polygon points="0,13 12,17 12,19 0,19" fill="#2196c8"/><polygon points="0,0 12,0 12,6 0,2" fill="#0e0e0f"/></svg><div style="left:558.0px;top:950px;width:2px;height:19px;background:#35b4e8"></div><svg style="left:525.0px;top:981px;" width="11" height="8" viewBox="0 0 11 8"><polygon points="1,1 10,1 5.5,7" fill="none" stroke="#1c1d20" stroke-width="1.3"/></svg><div class="t" style="left:519.0px;top:976px;font-size:14px;color:#ececec;width:105.8px;text-align:center;">L29</div><div style="left:529.5px;top:999.5px;width:85.5px;height:50.5px;background:#3a3d43;border:1px solid #1d1e21;border-radius:4px"></div><div style="left:571.75px;top:1000.5px;width:1px;height:48.5px;background:#25262a"></div><div style="left:530.5px;top:1024.25px;width:83.5px;height:1px;background:#25262a"></div><div class="t" style="left:529.5px;top:999.5px;font-size:16px;color:#d8d8d8;width:42.75px;height:25px;line-height:25px;text-align:center;">M</div><div class="t" style="left:572.25px;top:999.5px;font-size:16px;color:#d8d8d8;width:42.75px;height:25px;line-height:25px;text-align:center;">S</div><div style="left:544.875px;top:1031.375px;width:12px;height:12px;background:#2a2c30;border-radius:6px"></div><svg style="left:586.625px;top:1030.375px;" width="14" height="14" viewBox="0 0 14 14"><path d="M6.5 1 A6 6 0 0 0 6.5 13 Z" fill="#2a2c30"/><path d="M8.5 1.6 A6 6 0 0 1 8.5 12.4" fill="none" stroke="#2a2c30" stroke-width="1.4"/></svg><div class="t" style="left:515.0px;top:1062.3px;font-size:14px;color:#e4e4e4;width:105.8px;text-align:center;">-14.0</div><div style="left:595.0px;top:1086px;width:14px;height:4px;background:#4ab4f0"></div><div style="left:595.0px;top:1091.5px;width:14px;height:4px;background:#55585d"></div><div style="left:595.0px;top:1097px;width:14px;height:4px;background:#55585d"></div><div style="left:539.5px;top:1086px;width:17.3px;height:159.5px;background:#1b1d21;border-radius:3px;box-shadow:0 0 0 1px #2a2c30"></div><div style="left:542.5px;top:1105.0px;width:11.5px;height:1.2px;background:#17506e"></div><div style="left:542.5px;top:1116.5px;width:11.5px;height:1.2px;background:#17506e"></div><div style="left:542.5px;top:1135.5px;width:11.5px;height:1.2px;#8a8c8e"></div><div style="left:542.5px;top:1155.5px;width:11.5px;height:1.2px;background:#17506e"></div><div style="left:542.5px;top:1172.0px;width:11.5px;height:1.2px;background:#17506e"></div><div style="left:542.5px;top:1191.0px;width:11.5px;height:1.2px;background:#17506e"></div><div style="left:542.5px;top:1211.0px;width:11.5px;height:1.2px;background:#17506e"></div><div style="left:542.5px;top:1223.0px;width:11.5px;height:1.2px;background:#17506e"></div><div style="left:542.5px;top:1227px;width:11.5px;height:1.2px;background:#17506e"></div><div style="left:542.5px;top:1237px;width:11.5px;height:1.2px;background:#17506e"></div><div style="left:542.0px;top:1191px;width:5px;height:52px;background:repeating-linear-gradient(#3fa4ea 0 2px,#2a78b8 2px 3px)"></div><div style="left:549.0px;top:1191px;width:5px;height:52px;background:repeating-linear-gradient(#3fa4ea 0 2px,#2a78b8 2px 3px)"></div><div class="t" style="left:517.0px;top:1099.0px;font-size:10.5px;color:#b4b6b9;width:20px;text-align:right;font-weight:bold;letter-spacing:-.5px">10</div><div class="t" style="left:517.0px;top:1110.5px;font-size:10.5px;color:#b4b6b9;width:20px;text-align:right;font-weight:bold;letter-spacing:-.5px">6</div><div class="t" style="left:517.0px;top:1129.5px;font-size:10.5px;color:#b4b6b9;width:20px;text-align:right;font-weight:bold;letter-spacing:-.5px">0</div><div class="t" style="left:517.0px;top:1149.5px;font-size:10.5px;color:#b4b6b9;width:20px;text-align:right;font-weight:bold;letter-spacing:-.5px">-6</div><div class="t" style="left:517.0px;top:1166.0px;font-size:10.5px;color:#b4b6b9;width:20px;text-align:right;font-weight:bold;letter-spacing:-.5px">-12</div><div class="t" style="left:517.0px;top:1185.0px;font-size:10.5px;color:#b4b6b9;width:20px;text-align:right;font-weight:bold;letter-spacing:-.5px">-24</div><div class="t" style="left:517.0px;top:1205.0px;font-size:10.5px;color:#b4b6b9;width:20px;text-align:right;font-weight:bold;letter-spacing:-.5px">-36</div><div class="t" style="left:517.0px;top:1217.0px;font-size:10.5px;color:#b4b6b9;width:20px;text-align:right;font-weight:bold;letter-spacing:-.5px">-48</div><div style="left:563.0px;top:1176px;width:18px;height:69px;background:#4c4f55;border-radius:2px"></div><div style="left:564.5px;top:1120px;width:16px;height:1px;background:#6a6c70"></div><div style="left:564.5px;top:1136.5px;width:16px;height:1px;background:#6a6c70"></div><div style="left:564.5px;top:1196px;width:16px;height:1px;background:#606368"></div><div style="left:564.5px;top:1201px;width:16px;height:1px;background:#606368"></div><div style="left:564.5px;top:1207px;width:16px;height:1px;background:#606368"></div><div style="left:564.5px;top:1215px;width:16px;height:1px;background:#606368"></div><div style="left:571.0px;top:1106.5px;width:2.6px;height:117px;background:#17181a;border-radius:1px"></div><div style="left:560.5px;top:1146px;width:24px;height:45.5px;border-radius:4px;background:linear-gradient(#9a9a9a 0,#e8e8e8 5%,#fff 10%,#d0d0d0 22%,#f4f4f4 32%,#fafafa 48%,#444 49%,#444 51%,#fff 52%,#fcfcfc 80%,#e0e0e0 90%,#8a8a8a 100%);box-shadow:0 1px 3px rgba(0,0,0,.6),inset 1.5px 0 0 rgba(120,120,120,.5),inset -1.5px 0 0 rgba(120,120,120,.5)"></div><div style="left:595.0px;top:1191px;width:7px;height:14px;background:#a0a2a5;border-radius:1px"></div><div style="left:604.0px;top:1191px;width:7px;height:14px;background:#77797d;border-radius:1px"></div><svg style="left:592.5px;top:1221.5px;" width="21" height="21" viewBox="0 0 21 21"><circle cx="10.5" cy="10.5" r="10.3" fill="#a2a4a7"/><rect x="4" y="6" width="4.2" height="9" rx="1" fill="#3a3d43"/><rect x="9.6" y="6" width="3" height="9" fill="#3a3d43"/><rect x="14" y="6" width="3" height="9" rx="1" fill="#3a3d43"/></svg><div class="t" style="left:529.0px;top:1253.5px;font-size:14.6px;color:#d4d6d8;width:30px;text-align:center;font-weight:bold">9</div><svg style="left:593.0px;top:1253.2px;" width="21" height="17.5" viewBox="0 0 21 17.5"><path d="M0 9.3 L4.7 9.3 L3 14.4 Q2.3 15.2 1.7 14.4 Z M4.5 9.3 L9.3 9.3 L7.6 2.6 Q6.9 1.6 6.2 2.6 Z M9.1 9.3 L12.5 9.3 L11.3 16 Q10.8 16.8 10.3 16 Z M12.3 9.3 L16.6 9.3 L15.2 .9 Q14.5 -.2 13.8 .9 Z M16.4 9.3 L21 9.3 L19.3 14.6 Q18.7 15.4 18.1 14.6 Z" fill="#c4c6c8"/></svg><div style="left:527.5px;top:1276.5px;width:88.5px;height:19px;background:#7eae72"><div class="t" style="left:0px;top:0px;font-size:13.5px;color:#14240f;width:88.5px;height:19.5px;line-height:19.5px;text-align:center;">Read</div></div><div style="left:519.0px;top:1304px;width:105.8px;height:17px;background:#2787d9;border-radius:0 0 7px 7px"><div class="t" style="left:-10px;top:0.6px;font-size:14.2px;color:#f6f6f6;width:125.8px;height:17px;line-height:17px;text-align:center;">Hats</div></div><div style="left:627.75px;top:940px;width:105.8px;height:364.5px;background:#3a3d43"></div><div style="left:627.75px;top:940px;width:105.8px;height:4.2px;background:#2787d9"></div><div style="left:632.75px;top:949.5px;width:96.5px;height:20px;background:#0e0e0f;border-radius:3px;overflow:hidden"><svg style="left:0px;top:0px;" width="96.5" height="20" viewBox="0 0 96.5 20"><polygon points="3,2 46,19 3,19" fill="#1b1c1e"/><polygon points="93.5,2 51,19 93.5,19" fill="#1b1c1e"/></svg></div><div style="left:679.75px;top:950.5px;width:2px;height:18.5px;background:#35b4e8"></div><svg style="left:633.75px;top:981px;" width="11" height="8" viewBox="0 0 11 8"><polygon points="1,1 10,1 5.5,7" fill="none" stroke="#1c1d20" stroke-width="1.3"/></svg><div class="t" style="left:627.75px;top:976px;font-size:14px;color:#ececec;width:105.8px;text-align:center;">&lt;C&gt;</div><div style="left:638.25px;top:999.5px;width:85.5px;height:50.5px;background:#3a3d43;border:1px solid #1d1e21;border-radius:4px"></div><div style="left:680.5px;top:1000.5px;width:1px;height:48.5px;background:#25262a"></div><div style="left:639.25px;top:1024.25px;width:83.5px;height:1px;background:#25262a"></div><div class="t" style="left:638.25px;top:999.5px;font-size:16px;color:#d8d8d8;width:42.75px;height:25px;line-height:25px;text-align:center;">M</div><div class="t" style="left:681.0px;top:999.5px;font-size:16px;color:#d8d8d8;width:42.75px;height:25px;line-height:25px;text-align:center;">S</div><div style="left:653.625px;top:1031.375px;width:12px;height:12px;background:#d0d0d0;border-radius:6px"></div><svg style="left:695.375px;top:1030.375px;" width="14" height="14" viewBox="0 0 14 14"><path d="M6.5 1 A6 6 0 0 0 6.5 13 Z" fill="#d0d0d0"/><path d="M8.5 1.6 A6 6 0 0 1 8.5 12.4" fill="none" stroke="#d0d0d0" stroke-width="1.4"/></svg><div class="t" style="left:623.75px;top:1062.3px;font-size:14px;color:#e4e4e4;width:105.8px;text-align:center;">-4.2</div><div style="left:703.75px;top:1086px;width:14px;height:4px;background:#55585d"></div><div style="left:703.75px;top:1091.5px;width:14px;height:4px;background:#55585d"></div><div style="left:703.75px;top:1097px;width:14px;height:4px;background:#55585d"></div><div style="left:648.25px;top:1086px;width:17.3px;height:159.5px;background:#1b1d21;border-radius:3px;box-shadow:0 0 0 1px #2a2c30"></div><div style="left:651.25px;top:1105.0px;width:11.5px;height:1.2px;background:#17506e"></div><div style="left:651.25px;top:1116.5px;width:11.5px;height:1.2px;background:#17506e"></div><div style="left:651.25px;top:1135.5px;width:11.5px;height:1.2px;#8a8c8e"></div><div style="left:651.25px;top:1155.5px;width:11.5px;height:1.2px;background:#17506e"></div><div style="left:651.25px;top:1172.0px;width:11.5px;height:1.2px;background:#17506e"></div><div style="left:651.25px;top:1191.0px;width:11.5px;height:1.2px;background:#17506e"></div><div style="left:651.25px;top:1211.0px;width:11.5px;height:1.2px;background:#17506e"></div><div style="left:651.25px;top:1223.0px;width:11.5px;height:1.2px;background:#17506e"></div><div style="left:651.25px;top:1227px;width:11.5px;height:1.2px;background:#17506e"></div><div style="left:651.25px;top:1237px;width:11.5px;height:1.2px;background:#17506e"></div><div class="t" style="left:625.75px;top:1099.0px;font-size:10.5px;color:#b4b6b9;width:20px;text-align:right;font-weight:bold;letter-spacing:-.5px">10</div><div class="t" style="left:625.75px;top:1110.5px;font-size:10.5px;color:#b4b6b9;width:20px;text-align:right;font-weight:bold;letter-spacing:-.5px">6</div><div class="t" style="left:625.75px;top:1129.5px;font-size:10.5px;color:#b4b6b9;width:20px;text-align:right;font-weight:bold;letter-spacing:-.5px">0</div><div class="t" style="left:625.75px;top:1149.5px;font-size:10.5px;color:#b4b6b9;width:20px;text-align:right;font-weight:bold;letter-spacing:-.5px">-6</div><div class="t" style="left:625.75px;top:1166.0px;font-size:10.5px;color:#b4b6b9;width:20px;text-align:right;font-weight:bold;letter-spacing:-.5px">-12</div><div class="t" style="left:625.75px;top:1185.0px;font-size:10.5px;color:#b4b6b9;width:20px;text-align:right;font-weight:bold;letter-spacing:-.5px">-24</div><div class="t" style="left:625.75px;top:1205.0px;font-size:10.5px;color:#b4b6b9;width:20px;text-align:right;font-weight:bold;letter-spacing:-.5px">-36</div><div class="t" style="left:625.75px;top:1217.0px;font-size:10.5px;color:#b4b6b9;width:20px;text-align:right;font-weight:bold;letter-spacing:-.5px">-48</div><div style="left:671.75px;top:1155.5px;width:18px;height:89.5px;background:#4c4f55;border-radius:2px"></div><div style="left:673.25px;top:1120px;width:16px;height:1px;background:#6a6c70"></div><div style="left:673.25px;top:1136.5px;width:16px;height:1px;background:#6a6c70"></div><div style="left:673.25px;top:1180px;width:16px;height:1px;background:#606368"></div><div style="left:673.25px;top:1196px;width:16px;height:1px;background:#606368"></div><div style="left:673.25px;top:1201px;width:16px;height:1px;background:#606368"></div><div style="left:673.25px;top:1207px;width:16px;height:1px;background:#606368"></div><div style="left:673.25px;top:1215px;width:16px;height:1px;background:#606368"></div><div style="left:679.75px;top:1106.5px;width:2.6px;height:117px;background:#17181a;border-radius:1px"></div><div style="left:669.25px;top:1125.5px;width:24px;height:45.5px;border-radius:4px;background:linear-gradient(#9a9a9a 0,#e8e8e8 5%,#fff 10%,#d0d0d0 22%,#f4f4f4 32%,#fafafa 48%,#444 49%,#444 51%,#fff 52%,#fcfcfc 80%,#e0e0e0 90%,#8a8a8a 100%);box-shadow:0 1px 3px rgba(0,0,0,.6),inset 1.5px 0 0 rgba(120,120,120,.5),inset -1.5px 0 0 rgba(120,120,120,.5)"></div><div style="left:703.75px;top:1191px;width:7px;height:14px;background:#a0a2a5;border-radius:1px"></div><div style="left:712.75px;top:1191px;width:7px;height:14px;background:#77797d;border-radius:1px"></div><svg style="left:701.25px;top:1221.5px;" width="21" height="21" viewBox="0 0 21 21"><circle cx="10.5" cy="10.5" r="10.3" fill="#a2a4a7"/><rect x="4" y="6" width="4.2" height="9" rx="1" fill="#3a3d43"/><rect x="9.6" y="6" width="3" height="9" fill="#3a3d43"/><rect x="14" y="6" width="3" height="9" rx="1" fill="#3a3d43"/></svg><div class="t" style="left:637.75px;top:1253.5px;font-size:14.6px;color:#d4d6d8;width:30px;text-align:center;font-weight:bold">10</div><svg style="left:701.25px;top:1256px;" width="22" height="14" viewBox="0 0 22 14"><path d="M0 0 L3 0 L3 8 L6.5 8 L6.5 0 L9 0 L9 8 L12.5 8 L12.5 0 L15 0 L15 8 L18.5 8 L18.5 0 L22 0 L22 14 L0 14 Z" fill="#c0c2c4"/></svg><div style="left:636.25px;top:1276.5px;width:88.5px;height:19px;background:#232529"><div class="t" style="left:0px;top:0px;font-size:13.3px;color:#8c8f93;width:88.5px;height:19.5px;line-height:19.5px;text-align:center;">Auto: Off</div></div><div style="left:627.75px;top:1304px;width:105.8px;height:17px;background:#2787d9;border-radius:0 0 7px 7px"><div class="t" style="left:-10px;top:0.6px;font-size:14.2px;color:#f6f6f6;width:125.8px;height:17px;line-height:17px;text-align:center;">Trap Hi Hat</div></div><div style="left:736.5px;top:940px;width:105.8px;height:364.5px;background:#3a3d43"></div><div style="left:736.5px;top:940px;width:105.8px;height:4.2px;background:#2787d9"></div><div style="left:741.5px;top:949.5px;width:96.5px;height:20px;background:#0e0e0f;border-radius:3px;overflow:hidden"><svg style="left:0px;top:0px;" width="96.5" height="20" viewBox="0 0 96.5 20"><polygon points="3,2 46,19 3,19" fill="#1b1c1e"/><polygon points="93.5,2 51,19 93.5,19" fill="#1b1c1e"/></svg></div><div style="left:788.5px;top:950.5px;width:2px;height:18.5px;background:#35b4e8"></div><svg style="left:742.5px;top:981px;" width="11" height="8" viewBox="0 0 11 8"><polygon points="1,1 10,1 5.5,7" fill="none" stroke="#1c1d20" stroke-width="1.3"/></svg><div class="t" style="left:736.5px;top:976px;font-size:14px;color:#ececec;width:105.8px;text-align:center;">&lt;C&gt;</div><div style="left:747.0px;top:999.5px;width:85.5px;height:50.5px;background:#3a3d43;border:1px solid #1d1e21;border-radius:4px"></div><div style="left:789.25px;top:1000.5px;width:1px;height:48.5px;background:#25262a"></div><div style="left:748.0px;top:1024.25px;width:83.5px;height:1px;background:#25262a"></div><div class="t" style="left:747.0px;top:999.5px;font-size:16px;color:#d8d8d8;width:42.75px;height:25px;line-height:25px;text-align:center;">M</div><div class="t" style="left:789.75px;top:999.5px;font-size:16px;color:#d8d8d8;width:42.75px;height:25px;line-height:25px;text-align:center;">S</div><div style="left:762.375px;top:1031.375px;width:12px;height:12px;background:#d0d0d0;border-radius:6px"></div><svg style="left:804.125px;top:1030.375px;" width="14" height="14" viewBox="0 0 14 14"><path d="M6.5 1 A6 6 0 0 0 6.5 13 Z" fill="#d0d0d0"/><path d="M8.5 1.6 A6 6 0 0 1 8.5 12.4" fill="none" stroke="#d0d0d0" stroke-width="1.4"/></svg><div class="t" style="left:732.5px;top:1062.3px;font-size:14px;color:#e4e4e4;width:105.8px;text-align:center;">-17.5</div><div style="left:812.5px;top:1086px;width:14px;height:4px;background:#55585d"></div><div style="left:812.5px;top:1091.5px;width:14px;height:4px;background:#55585d"></div><div style="left:812.5px;top:1097px;width:14px;height:4px;background:#55585d"></div><div style="left:757.0px;top:1086px;width:17.3px;height:159.5px;background:#1b1d21;border-radius:3px;box-shadow:0 0 0 1px #2a2c30"></div><div style="left:760.0px;top:1105.0px;width:11.5px;height:1.2px;background:#17506e"></div><div style="left:760.0px;top:1116.5px;width:11.5px;height:1.2px;background:#17506e"></div><div style="left:760.0px;top:1135.5px;width:11.5px;height:1.2px;#8a8c8e"></div><div style="left:760.0px;top:1155.5px;width:11.5px;height:1.2px;background:#17506e"></div><div style="left:760.0px;top:1172.0px;width:11.5px;height:1.2px;background:#17506e"></div><div style="left:760.0px;top:1191.0px;width:11.5px;height:1.2px;background:#17506e"></div><div style="left:760.0px;top:1211.0px;width:11.5px;height:1.2px;background:#17506e"></div><div style="left:760.0px;top:1223.0px;width:11.5px;height:1.2px;background:#17506e"></div><div style="left:760.0px;top:1227px;width:11.5px;height:1.2px;background:#17506e"></div><div style="left:760.0px;top:1237px;width:11.5px;height:1.2px;background:#17506e"></div><div class="t" style="left:734.5px;top:1099.0px;font-size:10.5px;color:#b4b6b9;width:20px;text-align:right;font-weight:bold;letter-spacing:-.5px">10</div><div class="t" style="left:734.5px;top:1110.5px;font-size:10.5px;color:#b4b6b9;width:20px;text-align:right;font-weight:bold;letter-spacing:-.5px">6</div><div class="t" style="left:734.5px;top:1129.5px;font-size:10.5px;color:#b4b6b9;width:20px;text-align:right;font-weight:bold;letter-spacing:-.5px">0</div><div class="t" style="left:734.5px;top:1149.5px;font-size:10.5px;color:#b4b6b9;width:20px;text-align:right;font-weight:bold;letter-spacing:-.5px">-6</div><div class="t" style="left:734.5px;top:1166.0px;font-size:10.5px;color:#b4b6b9;width:20px;text-align:right;font-weight:bold;letter-spacing:-.5px">-12</div><div class="t" style="left:734.5px;top:1185.0px;font-size:10.5px;color:#b4b6b9;width:20px;text-align:right;font-weight:bold;letter-spacing:-.5px">-24</div><div class="t" style="left:734.5px;top:1205.0px;font-size:10.5px;color:#b4b6b9;width:20px;text-align:right;font-weight:bold;letter-spacing:-.5px">-36</div><div class="t" style="left:734.5px;top:1217.0px;font-size:10.5px;color:#b4b6b9;width:20px;text-align:right;font-weight:bold;letter-spacing:-.5px">-48</div><div style="left:780.5px;top:1181px;width:18px;height:64px;background:#4c4f55;border-radius:2px"></div><div style="left:782.0px;top:1120px;width:16px;height:1px;background:#6a6c70"></div><div style="left:782.0px;top:1136.5px;width:16px;height:1px;background:#6a6c70"></div><div style="left:782.0px;top:1201px;width:16px;height:1px;background:#606368"></div><div style="left:782.0px;top:1207px;width:16px;height:1px;background:#606368"></div><div style="left:782.0px;top:1215px;width:16px;height:1px;background:#606368"></div><div style="left:788.5px;top:1106.5px;width:2.6px;height:117px;background:#17181a;border-radius:1px"></div><div style="left:778.0px;top:1151px;width:24px;height:45.5px;border-radius:4px;background:linear-gradient(#9a9a9a 0,#e8e8e8 5%,#fff 10%,#d0d0d0 22%,#f4f4f4 32%,#fafafa 48%,#444 49%,#444 51%,#fff 52%,#fcfcfc 80%,#e0e0e0 90%,#8a8a8a 100%);box-shadow:0 1px 3px rgba(0,0,0,.6),inset 1.5px 0 0 rgba(120,120,120,.5),inset -1.5px 0 0 rgba(120,120,120,.5)"></div><div style="left:812.5px;top:1191px;width:7px;height:14px;background:#a0a2a5;border-radius:1px"></div><div style="left:821.5px;top:1191px;width:7px;height:14px;background:#77797d;border-radius:1px"></div><svg style="left:810.0px;top:1221.5px;" width="21" height="21" viewBox="0 0 21 21"><circle cx="10.5" cy="10.5" r="10.3" fill="#a2a4a7"/><rect x="4" y="6" width="4.2" height="9" rx="1" fill="#3a3d43"/><rect x="9.6" y="6" width="3" height="9" fill="#3a3d43"/><rect x="14" y="6" width="3" height="9" rx="1" fill="#3a3d43"/></svg><div class="t" style="left:746.5px;top:1253.5px;font-size:14.6px;color:#d4d6d8;width:30px;text-align:center;font-weight:bold">11</div><svg style="left:810.0px;top:1256px;" width="22" height="14" viewBox="0 0 22 14"><path d="M0 0 L3 0 L3 8 L6.5 8 L6.5 0 L9 0 L9 8 L12.5 8 L12.5 0 L15 0 L15 8 L18.5 8 L18.5 0 L22 0 L22 14 L0 14 Z" fill="#c0c2c4"/></svg><div style="left:745.0px;top:1276.5px;width:88.5px;height:19px;background:#232529"><div class="t" style="left:0px;top:0px;font-size:13.3px;color:#8c8f93;width:88.5px;height:19.5px;line-height:19.5px;text-align:center;">Auto: Off</div></div><div style="left:736.5px;top:1304px;width:105.8px;height:17px;background:#2787d9;border-radius:0 0 7px 7px"><div class="t" style="left:-10px;top:0.6px;font-size:14.2px;color:#f6f6f6;width:125.8px;height:17px;line-height:17px;text-align:center;">Trap Open Hat</div></div><div style="left:845.25px;top:940px;width:105.8px;height:364.5px;background:#3a3d43"></div><div style="left:845.25px;top:940px;width:105.8px;height:4.2px;background:#2787d9"></div><div style="left:850.25px;top:949.5px;width:96.5px;height:20px;background:#0e0e0f;border-radius:3px;overflow:hidden"><svg style="left:0px;top:0px;" width="96.5" height="20" viewBox="0 0 96.5 20"><polygon points="3,2 46,19 3,19" fill="#1b1c1e"/><polygon points="93.5,2 51,19 93.5,19" fill="#1b1c1e"/></svg></div><div style="left:895.75px;top:950.5px;width:2px;height:18.5px;background:#35b4e8"></div><svg style="left:851.25px;top:981px;" width="11" height="8" viewBox="0 0 11 8"><polygon points="1,1 10,1 5.5,7" fill="none" stroke="#1c1d20" stroke-width="1.3"/></svg><div class="t" style="left:845.25px;top:976px;font-size:14px;color:#ececec;width:105.8px;text-align:center;">L4</div><div style="left:855.75px;top:999.5px;width:85.5px;height:50.5px;background:#3a3d43;border:1px solid #1d1e21;border-radius:4px"></div><div style="left:898.0px;top:1000.5px;width:1px;height:48.5px;background:#25262a"></div><div style="left:856.75px;top:1024.25px;width:83.5px;height:1px;background:#25262a"></div><div class="t" style="left:855.75px;top:999.5px;font-size:16px;color:#d8d8d8;width:42.75px;height:25px;line-height:25px;text-align:center;">M</div><div class="t" style="left:898.5px;top:999.5px;font-size:16px;color:#d8d8d8;width:42.75px;height:25px;line-height:25px;text-align:center;">S</div><div style="left:871.125px;top:1031.375px;width:12px;height:12px;background:#d0d0d0;border-radius:6px"></div><svg style="left:912.875px;top:1030.375px;" width="14" height="14" viewBox="0 0 14 14"><path d="M6.5 1 A6 6 0 0 0 6.5 13 Z" fill="#d0d0d0"/><path d="M8.5 1.6 A6 6 0 0 1 8.5 12.4" fill="none" stroke="#d0d0d0" stroke-width="1.4"/></svg><div class="t" style="left:841.25px;top:1062.3px;font-size:14px;color:#e4e4e4;width:105.8px;text-align:center;">0dB</div><div style="left:921.25px;top:1086px;width:14px;height:4px;background:#55585d"></div><div style="left:921.25px;top:1091.5px;width:14px;height:4px;background:#55585d"></div><div style="left:921.25px;top:1097px;width:14px;height:4px;background:#55585d"></div><div style="left:865.75px;top:1086px;width:17.3px;height:159.5px;background:#1b1d21;border-radius:3px;box-shadow:0 0 0 1px #2a2c30"></div><div style="left:868.75px;top:1105.0px;width:11.5px;height:1.2px;background:#17506e"></div><div style="left:868.75px;top:1116.5px;width:11.5px;height:1.2px;background:#17506e"></div><div style="left:868.75px;top:1135.5px;width:11.5px;height:1.2px;#8a8c8e"></div><div style="left:868.75px;top:1155.5px;width:11.5px;height:1.2px;background:#17506e"></div><div style="left:868.75px;top:1172.0px;width:11.5px;height:1.2px;background:#17506e"></div><div style="left:868.75px;top:1191.0px;width:11.5px;height:1.2px;background:#17506e"></div><div style="left:868.75px;top:1211.0px;width:11.5px;height:1.2px;background:#17506e"></div><div style="left:868.75px;top:1223.0px;width:11.5px;height:1.2px;background:#17506e"></div><div style="left:868.75px;top:1227px;width:11.5px;height:1.2px;background:#17506e"></div><div style="left:868.75px;top:1237px;width:11.5px;height:1.2px;background:#17506e"></div><div class="t" style="left:843.25px;top:1099.0px;font-size:10.5px;color:#b4b6b9;width:20px;text-align:right;font-weight:bold;letter-spacing:-.5px">10</div><div class="t" style="left:843.25px;top:1110.5px;font-size:10.5px;color:#b4b6b9;width:20px;text-align:right;font-weight:bold;letter-spacing:-.5px">6</div><div class="t" style="left:843.25px;top:1129.5px;font-size:10.5px;color:#b4b6b9;width:20px;text-align:right;font-weight:bold;letter-spacing:-.5px">0</div><div class="t" style="left:843.25px;top:1149.5px;font-size:10.5px;color:#b4b6b9;width:20px;text-align:right;font-weight:bold;letter-spacing:-.5px">-6</div><div class="t" style="left:843.25px;top:1166.0px;font-size:10.5px;color:#b4b6b9;width:20px;text-align:right;font-weight:bold;letter-spacing:-.5px">-12</div><div class="t" style="left:843.25px;top:1185.0px;font-size:10.5px;color:#b4b6b9;width:20px;text-align:right;font-weight:bold;letter-spacing:-.5px">-24</div><div class="t" style="left:843.25px;top:1205.0px;font-size:10.5px;color:#b4b6b9;width:20px;text-align:right;font-weight:bold;letter-spacing:-.5px">-36</div><div class="t" style="left:843.25px;top:1217.0px;font-size:10.5px;color:#b4b6b9;width:20px;text-align:right;font-weight:bold;letter-spacing:-.5px">-48</div><div style="left:889.25px;top:1144.5px;width:18px;height:100.5px;background:#4c4f55;border-radius:2px"></div><div style="left:890.75px;top:1120px;width:16px;height:1px;background:#6a6c70"></div><div style="left:890.75px;top:1136.5px;width:16px;height:1px;background:#6a6c70"></div><div style="left:890.75px;top:1180px;width:16px;height:1px;background:#606368"></div><div style="left:890.75px;top:1196px;width:16px;height:1px;background:#606368"></div><div style="left:890.75px;top:1201px;width:16px;height:1px;background:#606368"></div><div style="left:890.75px;top:1207px;width:16px;height:1px;background:#606368"></div><div style="left:890.75px;top:1215px;width:16px;height:1px;background:#606368"></div><div style="left:897.25px;top:1106.5px;width:2.6px;height:117px;background:#17181a;border-radius:1px"></div><div style="left:886.75px;top:1114.5px;width:24px;height:45.5px;border-radius:4px;background:linear-gradient(#9a9a9a 0,#e8e8e8 5%,#fff 10%,#d0d0d0 22%,#f4f4f4 32%,#fafafa 48%,#444 49%,#444 51%,#fff 52%,#fcfcfc 80%,#e0e0e0 90%,#8a8a8a 100%);box-shadow:0 1px 3px rgba(0,0,0,.6),inset 1.5px 0 0 rgba(120,120,120,.5),inset -1.5px 0 0 rgba(120,120,120,.5)"></div><div style="left:921.25px;top:1191px;width:7px;height:14px;background:#a0a2a5;border-radius:1px"></div><div style="left:930.25px;top:1191px;width:7px;height:14px;background:#77797d;border-radius:1px"></div><svg style="left:918.75px;top:1221.5px;" width="21" height="21" viewBox="0 0 21 21"><circle cx="10.5" cy="10.5" r="10.3" fill="#a2a4a7"/><rect x="4" y="6" width="4.2" height="9" rx="1" fill="#3a3d43"/><rect x="9.6" y="6" width="3" height="9" fill="#3a3d43"/><rect x="14" y="6" width="3" height="9" rx="1" fill="#3a3d43"/></svg><div class="t" style="left:855.25px;top:1253.5px;font-size:14.6px;color:#d4d6d8;width:30px;text-align:center;font-weight:bold">12</div><svg style="left:918.75px;top:1256px;" width="22" height="14" viewBox="0 0 22 14"><path d="M0 0 L3 0 L3 8 L6.5 8 L6.5 0 L9 0 L9 8 L12.5 8 L12.5 0 L15 0 L15 8 L18.5 8 L18.5 0 L22 0 L22 14 L0 14 Z" fill="#c0c2c4"/></svg><svg style="left:891.25px;top:1255px;" width="18" height="13" viewBox="0 0 18 13"><path d="M0 13 L0 3 L4 3 L6 0 L13 0 L13 3 L18 3 L18 13 Z" fill="#77797d"/><path d="M4 6 L4 11 M7 6 L7 11 M10 6 L10 11 M13 6 L13 11" stroke="#3a3d43" stroke-width="1"/></svg><div style="left:853.75px;top:1276.5px;width:88.5px;height:19px;background:#232529"><div class="t" style="left:0px;top:0px;font-size:13.3px;color:#8c8f93;width:88.5px;height:19.5px;line-height:19.5px;text-align:center;">Auto: Off</div></div><div style="left:845.25px;top:1304px;width:105.8px;height:17px;background:#2787d9;border-radius:0 0 7px 7px"><div class="t" style="left:-10px;top:0.6px;font-size:14.2px;color:#f6f6f6;width:125.8px;height:17px;line-height:17px;text-align:center;">Percussion</div></div><div style="left:954.0px;top:940px;width:105.8px;height:364.5px;background:#3a3d43"></div><div style="left:954.0px;top:940px;width:105.8px;height:4.2px;background:#2787d9"></div><div style="left:959.0px;top:949.5px;width:96.5px;height:20px;background:#0e0e0f;border-radius:3px;overflow:hidden"><svg style="left:0px;top:0px;" width="96.5" height="20" viewBox="0 0 96.5 20"><polygon points="3,2 46,19 3,19" fill="#1b1c1e"/><polygon points="93.5,2 51,19 93.5,19" fill="#1b1c1e"/></svg></div><div style="left:1007.0px;top:950px;width:10px;height:19px;background:#0f5674"></div><svg style="left:1007.0px;top:950px;" width="10" height="19" viewBox="0 0 10 19"><polygon points="0,17 10,13 10,19 0,19" fill="#2196c8"/><polygon points="0,0 10,0 10,2 0,6" fill="#0e0e0f"/></svg><div style="left:1016.0px;top:950px;width:2px;height:19px;background:#35b4e8"></div><svg style="left:960.0px;top:981px;" width="11" height="8" viewBox="0 0 11 8"><polygon points="1,1 10,1 5.5,7" fill="none" stroke="#1c1d20" stroke-width="1.3"/></svg><div class="t" style="left:954.0px;top:976px;font-size:14px;color:#ececec;width:105.8px;text-align:center;">R23</div><div style="left:964.5px;top:999.5px;width:85.5px;height:50.5px;background:#3a3d43;border:1px solid #1d1e21;border-radius:4px"></div><div style="left:1006.75px;top:1000.5px;width:1px;height:48.5px;background:#25262a"></div><div style="left:965.5px;top:1024.25px;width:83.5px;height:1px;background:#25262a"></div><div class="t" style="left:964.5px;top:999.5px;font-size:16px;color:#d8d8d8;width:42.75px;height:25px;line-height:25px;text-align:center;">M</div><div class="t" style="left:1007.25px;top:999.5px;font-size:16px;color:#d8d8d8;width:42.75px;height:25px;line-height:25px;text-align:center;">S</div><div style="left:979.875px;top:1031.375px;width:12px;height:12px;background:#2a2c30;border-radius:6px"></div><svg style="left:1021.625px;top:1030.375px;" width="14" height="14" viewBox="0 0 14 14"><path d="M6.5 1 A6 6 0 0 0 6.5 13 Z" fill="#2a2c30"/><path d="M8.5 1.6 A6 6 0 0 1 8.5 12.4" fill="none" stroke="#2a2c30" stroke-width="1.4"/></svg><div class="t" style="left:950.0px;top:1062.3px;font-size:14px;color:#e4e4e4;width:105.8px;text-align:center;">-8.2</div><div style="left:1030.0px;top:1086px;width:14px;height:4px;background:#4ab4f0"></div><div style="left:1030.0px;top:1091.5px;width:14px;height:4px;background:#55585d"></div><div style="left:1030.0px;top:1097px;width:14px;height:4px;background:#55585d"></div><div style="left:974.5px;top:1086px;width:17.3px;height:159.5px;background:#1b1d21;border-radius:3px;box-shadow:0 0 0 1px #2a2c30"></div><div style="left:977.5px;top:1105.0px;width:11.5px;height:1.2px;background:#17506e"></div><div style="left:977.5px;top:1116.5px;width:11.5px;height:1.2px;background:#17506e"></div><div style="left:977.5px;top:1135.5px;width:11.5px;height:1.2px;#8a8c8e"></div><div style="left:977.5px;top:1155.5px;width:11.5px;height:1.2px;background:#17506e"></div><div style="left:977.5px;top:1172.0px;width:11.5px;height:1.2px;background:#17506e"></div><div style="left:977.5px;top:1191.0px;width:11.5px;height:1.2px;background:#17506e"></div><div style="left:977.5px;top:1211.0px;width:11.5px;height:1.2px;background:#17506e"></div><div style="left:977.5px;top:1223.0px;width:11.5px;height:1.2px;background:#17506e"></div><div style="left:977.5px;top:1227px;width:11.5px;height:1.2px;background:#17506e"></div><div style="left:977.5px;top:1237px;width:11.5px;height:1.2px;background:#17506e"></div><div style="left:977.0px;top:1197px;width:5px;height:46px;background:repeating-linear-gradient(#3fa4ea 0 2px,#2a78b8 2px 3px)"></div><div style="left:984.0px;top:1197px;width:5px;height:46px;background:repeating-linear-gradient(#3fa4ea 0 2px,#2a78b8 2px 3px)"></div><div class="t" style="left:952.0px;top:1099.0px;font-size:10.5px;color:#b4b6b9;width:20px;text-align:right;font-weight:bold;letter-spacing:-.5px">10</div><div class="t" style="left:952.0px;top:1110.5px;font-size:10.5px;color:#b4b6b9;width:20px;text-align:right;font-weight:bold;letter-spacing:-.5px">6</div><div class="t" style="left:952.0px;top:1129.5px;font-size:10.5px;color:#b4b6b9;width:20px;text-align:right;font-weight:bold;letter-spacing:-.5px">0</div><div class="t" style="left:952.0px;top:1149.5px;font-size:10.5px;color:#b4b6b9;width:20px;text-align:right;font-weight:bold;letter-spacing:-.5px">-6</div><div class="t" style="left:952.0px;top:1166.0px;font-size:10.5px;color:#b4b6b9;width:20px;text-align:right;font-weight:bold;letter-spacing:-.5px">-12</div><div class="t" style="left:952.0px;top:1185.0px;font-size:10.5px;color:#b4b6b9;width:20px;text-align:right;font-weight:bold;letter-spacing:-.5px">-24</div><div class="t" style="left:952.0px;top:1205.0px;font-size:10.5px;color:#b4b6b9;width:20px;text-align:right;font-weight:bold;letter-spacing:-.5px">-36</div><div class="t" style="left:952.0px;top:1217.0px;font-size:10.5px;color:#b4b6b9;width:20px;text-align:right;font-weight:bold;letter-spacing:-.5px">-48</div><div style="left:998.0px;top:1165.5px;width:18px;height:79.5px;background:#4c4f55;border-radius:2px"></div><div style="left:999.5px;top:1120px;width:16px;height:1px;background:#6a6c70"></div><div style="left:999.5px;top:1136.5px;width:16px;height:1px;background:#6a6c70"></div><div style="left:999.5px;top:1196px;width:16px;height:1px;background:#606368"></div><div style="left:999.5px;top:1201px;width:16px;height:1px;background:#606368"></div><div style="left:999.5px;top:1207px;width:16px;height:1px;background:#606368"></div><div style="left:999.5px;top:1215px;width:16px;height:1px;background:#606368"></div><div style="left:1006.0px;top:1106.5px;width:2.6px;height:117px;background:#17181a;border-radius:1px"></div><div style="left:995.5px;top:1135.5px;width:24px;height:45.5px;border-radius:4px;background:linear-gradient(#9a9a9a 0,#e8e8e8 5%,#fff 10%,#d0d0d0 22%,#f4f4f4 32%,#fafafa 48%,#444 49%,#444 51%,#fff 52%,#fcfcfc 80%,#e0e0e0 90%,#8a8a8a 100%);box-shadow:0 1px 3px rgba(0,0,0,.6),inset 1.5px 0 0 rgba(120,120,120,.5),inset -1.5px 0 0 rgba(120,120,120,.5)"></div><div style="left:1030.0px;top:1191px;width:7px;height:14px;background:#a0a2a5;border-radius:1px"></div><div style="left:1039.0px;top:1191px;width:7px;height:14px;background:#77797d;border-radius:1px"></div><svg style="left:1027.5px;top:1221.5px;" width="21" height="21" viewBox="0 0 21 21"><circle cx="10.5" cy="10.5" r="10.3" fill="#a2a4a7"/><rect x="4" y="6" width="4.2" height="9" rx="1" fill="#3a3d43"/><rect x="9.6" y="6" width="3" height="9" fill="#3a3d43"/><rect x="14" y="6" width="3" height="9" rx="1" fill="#3a3d43"/></svg><div class="t" style="left:964.0px;top:1253.5px;font-size:14.6px;color:#d4d6d8;width:30px;text-align:center;font-weight:bold">14</div><svg style="left:1028.0px;top:1253.2px;" width="21" height="17.5" viewBox="0 0 21 17.5"><path d="M0 9.3 L4.7 9.3 L3 14.4 Q2.3 15.2 1.7 14.4 Z M4.5 9.3 L9.3 9.3 L7.6 2.6 Q6.9 1.6 6.2 2.6 Z M9.1 9.3 L12.5 9.3 L11.3 16 Q10.8 16.8 10.3 16 Z M12.3 9.3 L16.6 9.3 L15.2 .9 Q14.5 -.2 13.8 .9 Z M16.4 9.3 L21 9.3 L19.3 14.6 Q18.7 15.4 18.1 14.6 Z" fill="#c4c6c8"/></svg><div style="left:962.5px;top:1276.5px;width:88.5px;height:19px;background:#232529"><div class="t" style="left:0px;top:0px;font-size:13.3px;color:#8c8f93;width:88.5px;height:19.5px;line-height:19.5px;text-align:center;">Auto: Off</div></div><div style="left:954.0px;top:1304px;width:105.8px;height:17px;background:#2787d9;border-radius:0 0 7px 7px"><div class="t" style="left:-10px;top:0.6px;font-size:14.2px;color:#f6f6f6;width:125.8px;height:17px;line-height:17px;text-align:center;">Bossa Loop</div></div><div style="left:1062.75px;top:940px;width:105.8px;height:364.5px;background:#3a3d43"></div><div class="t" style="left:1072.75px;top:1253.5px;font-size:14.6px;color:#d4d6d8;width:30px;text-align:center;font-weight:bold">15</div><svg style="left:1136.75px;top:1253.2px;" width="21" height="17.5" viewBox="0 0 21 17.5"><path d="M0 9.3 L4.7 9.3 L3 14.4 Q2.3 15.2 1.7 14.4 Z M4.5 9.3 L9.3 9.3 L7.6 2.6 Q6.9 1.6 6.2 2.6 Z M9.1 9.3 L12.5 9.3 L11.3 16 Q10.8 16.8 10.3 16 Z M12.3 9.3 L16.6 9.3 L15.2 .9 Q14.5 -.2 13.8 .9 Z M16.4 9.3 L21 9.3 L19.3 14.6 Q18.7 15.4 18.1 14.6 Z" fill="#c4c6c8"/></svg><div style="left:1071.25px;top:1276.5px;width:88.5px;height:19px;background:#232529"><div class="t" style="left:0px;top:0px;font-size:13.3px;color:#8c8f93;width:88.5px;height:19.5px;line-height:19.5px;text-align:center;">Auto: Off</div></div><div style="left:1062.75px;top:1304px;width:105.8px;height:17px;background:#2b8fe0;border-radius:0 0 7px 7px"><div class="t" style="left:-10px;top:0.6px;font-size:14.2px;color:#f6f6f6;width:125.8px;height:17px;line-height:17px;text-align:center;">Drum Fills</div></div><div style="left:1171.5px;top:940px;width:105.8px;height:364.5px;background:#3a3d43"></div><div class="t" style="left:1181.5px;top:1253.5px;font-size:14.6px;color:#d4d6d8;width:30px;text-align:center;font-weight:bold">16</div><svg style="left:1245.5px;top:1253.2px;" width="21" height="17.5" viewBox="0 0 21 17.5"><path d="M0 9.3 L4.7 9.3 L3 14.4 Q2.3 15.2 1.7 14.4 Z M4.5 9.3 L9.3 9.3 L7.6 2.6 Q6.9 1.6 6.2 2.6 Z M9.1 9.3 L12.5 9.3 L11.3 16 Q10.8 16.8 10.3 16 Z M12.3 9.3 L16.6 9.3 L15.2 .9 Q14.5 -.2 13.8 .9 Z M16.4 9.3 L21 9.3 L19.3 14.6 Q18.7 15.4 18.1 14.6 Z" fill="#c4c6c8"/></svg><div style="left:1180.0px;top:1276.5px;width:88.5px;height:19px;background:#232529"><div class="t" style="left:0px;top:0px;font-size:13.3px;color:#8c8f93;width:88.5px;height:19.5px;line-height:19.5px;text-align:center;">Auto: Off</div></div><div style="left:1171.5px;top:1304px;width:105.8px;height:17px;background:#7a5a24;border-radius:0 0 7px 7px"><div class="t" style="left:-10px;top:0.6px;font-size:14.2px;color:#f6f6f6;width:125.8px;height:17px;line-height:17px;text-align:center;">Moog Bass</div></div><div style="left:1280.25px;top:940px;width:105.8px;height:364.5px;background:#3a3d43"></div><div class="t" style="left:1290.25px;top:1253.5px;font-size:14.6px;color:#d4d6d8;width:30px;text-align:center;font-weight:bold">17</div><svg style="left:1354.25px;top:1253.2px;" width="21" height="17.5" viewBox="0 0 21 17.5"><path d="M0 9.3 L4.7 9.3 L3 14.4 Q2.3 15.2 1.7 14.4 Z M4.5 9.3 L9.3 9.3 L7.6 2.6 Q6.9 1.6 6.2 2.6 Z M9.1 9.3 L12.5 9.3 L11.3 16 Q10.8 16.8 10.3 16 Z M12.3 9.3 L16.6 9.3 L15.2 .9 Q14.5 -.2 13.8 .9 Z M16.4 9.3 L21 9.3 L19.3 14.6 Q18.7 15.4 18.1 14.6 Z" fill="#c4c6c8"/></svg><div style="left:1288.75px;top:1276.5px;width:88.5px;height:19px;background:#232529"><div class="t" style="left:0px;top:0px;font-size:13.3px;color:#8c8f93;width:88.5px;height:19.5px;line-height:19.5px;text-align:center;">Auto: Off</div></div><div style="left:1280.25px;top:1304px;width:105.8px;height:17px;background:#7a5a24;border-radius:0 0 7px 7px"><div class="t" style="left:-10px;top:0.6px;font-size:14.2px;color:#f6f6f6;width:125.8px;height:17px;line-height:17px;text-align:center;">Bass</div></div><div style="left:1389.0px;top:940px;width:105.8px;height:364.5px;background:#3a3d43"></div><div class="t" style="left:1399.0px;top:1253.5px;font-size:14.6px;color:#d4d6d8;width:30px;text-align:center;font-weight:bold">18</div><svg style="left:1463.0px;top:1253.2px;" width="21" height="17.5" viewBox="0 0 21 17.5"><path d="M0 9.3 L4.7 9.3 L3 14.4 Q2.3 15.2 1.7 14.4 Z M4.5 9.3 L9.3 9.3 L7.6 2.6 Q6.9 1.6 6.2 2.6 Z M9.1 9.3 L12.5 9.3 L11.3 16 Q10.8 16.8 10.3 16 Z M12.3 9.3 L16.6 9.3 L15.2 .9 Q14.5 -.2 13.8 .9 Z M16.4 9.3 L21 9.3 L19.3 14.6 Q18.7 15.4 18.1 14.6 Z" fill="#c4c6c8"/></svg><div style="left:1397.5px;top:1276.5px;width:88.5px;height:19px;background:#232529"><div class="t" style="left:0px;top:0px;font-size:13.3px;color:#8c8f93;width:88.5px;height:19.5px;line-height:19.5px;text-align:center;">Auto: Off</div></div><div style="left:1389.0px;top:1304px;width:105.8px;height:17px;background:#7a5a24;border-radius:0 0 7px 7px"><div class="t" style="left:-10px;top:0.6px;font-size:14.2px;color:#f6f6f6;width:125.8px;height:17px;line-height:17px;text-align:center;">Bassline</div></div><div style="left:1497.75px;top:940px;width:105.8px;height:364.5px;background:#3a3d43"></div><div class="t" style="left:1507.75px;top:1253.5px;font-size:14.6px;color:#d4d6d8;width:30px;text-align:center;font-weight:bold">19</div><svg style="left:1571.25px;top:1256px;" width="22" height="14" viewBox="0 0 22 14"><path d="M0 0 L3 0 L3 8 L6.5 8 L6.5 0 L9 0 L9 8 L12.5 8 L12.5 0 L15 0 L15 8 L18.5 8 L18.5 0 L22 0 L22 14 L0 14 Z" fill="#c0c2c4"/></svg><div style="left:1506.25px;top:1276.5px;width:88.5px;height:19px;background:#232529"><div class="t" style="left:0px;top:0px;font-size:13.3px;color:#8c8f93;width:88.5px;height:19.5px;line-height:19.5px;text-align:center;">Auto: Off</div></div><div style="left:1497.75px;top:1304px;width:105.8px;height:17px;background:#7a5a24;border-radius:0 0 7px 7px"><div class="t" style="left:-10px;top:0.6px;font-size:14.2px;color:#f6f6f6;width:125.8px;height:17px;line-height:17px;text-align:center;">Mojito - S..Bass</div></div><div style="left:1606.5px;top:940px;width:105.8px;height:364.5px;background:#3a3d43"></div><div class="t" style="left:1616.5px;top:1253.5px;font-size:14.6px;color:#d4d6d8;width:30px;text-align:center;font-weight:bold">20</div><svg style="left:1680.5px;top:1253.2px;" width="21" height="17.5" viewBox="0 0 21 17.5"><path d="M0 9.3 L4.7 9.3 L3 14.4 Q2.3 15.2 1.7 14.4 Z M4.5 9.3 L9.3 9.3 L7.6 2.6 Q6.9 1.6 6.2 2.6 Z M9.1 9.3 L12.5 9.3 L11.3 16 Q10.8 16.8 10.3 16 Z M12.3 9.3 L16.6 9.3 L15.2 .9 Q14.5 -.2 13.8 .9 Z M16.4 9.3 L21 9.3 L19.3 14.6 Q18.7 15.4 18.1 14.6 Z" fill="#c4c6c8"/></svg><div style="left:1615.0px;top:1276.5px;width:88.5px;height:19px;background:#232529"><div class="t" style="left:0px;top:0px;font-size:13.3px;color:#8c8f93;width:88.5px;height:19.5px;line-height:19.5px;text-align:center;">Auto: Off</div></div><div style="left:1606.5px;top:1304px;width:105.8px;height:17px;background:#f04a2c;border-radius:0 0 7px 7px"><div class="t" style="left:-10px;top:0.6px;font-size:14.2px;color:#f6f6f6;width:125.8px;height:17px;line-height:17px;text-align:center;">Rhodes Loop</div></div><div style="left:1715.25px;top:940px;width:105.8px;height:364.5px;background:#3a3d43"></div><div class="t" style="left:1725.25px;top:1253.5px;font-size:14.6px;color:#d4d6d8;width:30px;text-align:center;font-weight:bold">21</div><svg style="left:1789.25px;top:1253.2px;" width="21" height="17.5" viewBox="0 0 21 17.5"><path d="M0 9.3 L4.7 9.3 L3 14.4 Q2.3 15.2 1.7 14.4 Z M4.5 9.3 L9.3 9.3 L7.6 2.6 Q6.9 1.6 6.2 2.6 Z M9.1 9.3 L12.5 9.3 L11.3 16 Q10.8 16.8 10.3 16 Z M12.3 9.3 L16.6 9.3 L15.2 .9 Q14.5 -.2 13.8 .9 Z M16.4 9.3 L21 9.3 L19.3 14.6 Q18.7 15.4 18.1 14.6 Z" fill="#c4c6c8"/></svg><div style="left:1723.75px;top:1276.5px;width:88.5px;height:19px;background:#232529"><div class="t" style="left:0px;top:0px;font-size:13.3px;color:#8c8f93;width:88.5px;height:19.5px;line-height:19.5px;text-align:center;">Auto: Off</div></div><div style="left:1715.25px;top:1304px;width:105.8px;height:17px;background:#f04a2c;border-radius:0 0 7px 7px"><div class="t" style="left:-10px;top:0.6px;font-size:14.2px;color:#f6f6f6;width:125.8px;height:17px;line-height:17px;text-align:center;">Rhodes L..Bass</div></div><div style="left:1824.5px;top:1304.5px;width:3px;height:16.5px;background:#f04a2c;border-radius:0 0 0 4px"></div><div style="left:1829px;top:940px;width:238px;height:364.5px;background:#2c2f34"></div><div style="left:1829px;top:1230px;width:107px;height:74.5px;background:#2c2f34"></div><div style="left:1940px;top:940px;width:127px;height:5.5px;background:#26282c;border-radius:0 6px 0 0"></div><div style="left:1940px;top:945.5px;width:127px;height:21px;background:#1c3040"></div><div class="t" style="left:1986px;top:947px;font-size:15.5px;color:#e8e8e8;">FX</div><svg style="left:2051px;top:953px;" width="10" height="6.5" viewBox="0 0 10 6.5"><polygon points="0,0 10,0 5.0,6.5" fill="#9a9a9a"/></svg><div style="left:1940px;top:967px;width:127px;height:27.5px;background:#33363c"></div><div class="t" style="left:1953px;top:972px;font-size:15.5px;color:#d0d2d4;">Inserts</div><svg style="left:2036px;top:977px;" width="10" height="6.5" viewBox="0 0 10 6.5"><polygon points="0,0 10,0 5.0,6.5" fill="#8a8a8a"/></svg><svg style="left:2050px;top:974px;" width="12" height="12" viewBox="0 0 12 12"><path d="M6 0 L6 12 M0 6 L12 6" stroke="#b0b0b0" stroke-width="1.6"/></svg><div style="left:1940px;top:996px;width:127px;height:24.5px;background:#555960;overflow:hidden"><div class="t" style="left:16px;top:4px;font-size:14px;color:#e4e4e4;">Pro EQ</div><div style="left:109px;top:0px;width:18px;height:24.5px;background:linear-gradient(90deg,rgba(85,89,96,0),#555960 40%)"></div><svg style="left:111px;top:9px;" width="10" height="6.5" viewBox="0 0 10 6.5"><polygon points="0,0 10,0 5.0,6.5" fill="#6e7177"/></svg></div><div style="left:1940px;top:1021.5px;width:127px;height:24.5px;background:#555960;overflow:hidden"><div class="t" style="left:18px;top:4px;font-size:14px;color:#e4e4e4;">Multiband Dyna..</div><div style="left:109px;top:0px;width:18px;height:24.5px;background:linear-gradient(90deg,rgba(85,89,96,0),#555960 40%)"></div><svg style="left:111px;top:9px;" width="10" height="6.5" viewBox="0 0 10 6.5"><polygon points="0,0 10,0 5.0,6.5" fill="#6e7177"/></svg></div><div style="left:1940px;top:1047px;width:127px;height:24.5px;background:#555960;overflow:hidden"><div class="t" style="left:17px;top:4px;font-size:14px;color:#e4e4e4;">Limiter</div><div style="left:109px;top:0px;width:18px;height:24.5px;background:linear-gradient(90deg,rgba(85,89,96,0),#555960 40%)"></div><svg style="left:111px;top:9px;" width="10" height="6.5" viewBox="0 0 10 6.5"><polygon points="0,0 10,0 5.0,6.5" fill="#6e7177"/></svg></div><div style="left:1940px;top:1073px;width:127px;height:24.5px;background:#555960;overflow:hidden"><div class="t" style="left:18px;top:4px;font-size:14px;color:#e4e4e4;">Spectrum Meter</div><div style="left:109px;top:0px;width:18px;height:24.5px;background:linear-gradient(90deg,rgba(85,89,96,0),#555960 40%)"></div><svg style="left:111px;top:9px;" width="10" height="6.5" viewBox="0 0 10 6.5"><polygon points="0,0 10,0 5.0,6.5" fill="#6e7177"/></svg></div><svg style="left:1985px;top:1100.5px;" width="82" height="95" viewBox="0 0 82 95"><rect x="0" y="0" width="82" height="95" fill="#143040"/><rect x="2.30" y="0" width=".45" height="95" fill="#0f2634"/><rect x="5.05" y="0" width=".45" height="95" fill="#0f2634"/><rect x="7.80" y="0" width=".45" height="95" fill="#0f2634"/><rect x="10.55" y="0" width=".45" height="95" fill="#0f2634"/><rect x="13.30" y="0" width=".45" height="95" fill="#0f2634"/><rect x="16.05" y="0" width=".45" height="95" fill="#0f2634"/><rect x="18.80" y="0" width=".45" height="95" fill="#0f2634"/><rect x="21.55" y="0" width=".45" height="95" fill="#0f2634"/><rect x="24.30" y="0" width=".45" height="95" fill="#0f2634"/><rect x="27.05" y="0" width=".45" height="95" fill="#0f2634"/><rect x="29.80" y="0" width=".45" height="95" fill="#0f2634"/><rect x="32.55" y="0" width=".45" height="95" fill="#0f2634"/><rect x="35.30" y="0" width=".45" height="95" fill="#0f2634"/><rect x="38.05" y="0" width=".45" height="95" fill="#0f2634"/><rect x="40.80" y="0" width=".45" height="95" fill="#0f2634"/><rect x="43.55" y="0" width=".45" height="95" fill="#0f2634"/><rect x="46.30" y="0" width=".45" height="95" fill="#0f2634"/><rect x="49.05" y="0" width=".45" height="95" fill="#0f2634"/><rect x="51.80" y="0" width=".45" height="95" fill="#0f2634"/><rect x="54.55" y="0" width=".45" height="95" fill="#0f2634"/><rect x="57.30" y="0" width=".45" height="95" fill="#0f2634"/><rect x="60.05" y="0" width=".45" height="95" fill="#0f2634"/><rect x="62.80" y="0" width=".45" height="95" fill="#0f2634"/><rect x="65.55" y="0" width=".45" height="95" fill="#0f2634"/><rect x="68.30" y="0" width=".45" height="95" fill="#0f2634"/><rect x="71.05" y="0" width=".45" height="95" fill="#0f2634"/><rect x="73.80" y="0" width=".45" height="95" fill="#0f2634"/><rect x="76.55" y="0" width=".45" height="95" fill="#0f2634"/><rect x="79.30" y="0" width=".45" height="95" fill="#0f2634"/><rect x="82.05" y="0" width=".45" height="95" fill="#0f2634"/><rect x="0" y="16" width="82" height="1" fill="#1d4258"/><rect x="0" y="32" width="82" height="1" fill="#1d4258"/><rect x="0" y="48" width="82" height="1" fill="#1d4258"/><rect x="0" y="64" width="82" height="1" fill="#1d4258"/><rect x="0" y="80" width="82" height="1" fill="#1d4258"/><rect x="0.20" y="46.7" width="2.4" height="48.3" fill="#2f86c4"/><rect x="2.95" y="48.4" width="2.4" height="46.6" fill="#2f86c4"/><rect x="5.70" y="50.7" width="2.4" height="44.3" fill="#2f86c4"/><rect x="8.45" y="53.5" width="2.4" height="41.5" fill="#2f86c4"/><rect x="11.20" y="55.1" width="2.4" height="39.9" fill="#2f86c4"/><rect x="13.95" y="56.5" width="2.4" height="38.5" fill="#2f86c4"/><rect x="16.70" y="57.9" width="2.4" height="37.1" fill="#2f86c4"/><rect x="19.45" y="59.2" width="2.4" height="35.8" fill="#2f86c4"/><rect x="22.20" y="60.3" width="2.4" height="34.7" fill="#2f86c4"/><rect x="24.95" y="61.4" width="2.4" height="33.6" fill="#2f86c4"/><rect x="27.70" y="62.5" width="2.4" height="32.5" fill="#2f86c4"/><rect x="30.45" y="62.4" width="2.4" height="32.6" fill="#2f86c4"/><rect x="33.20" y="61.3" width="2.4" height="33.7" fill="#2f86c4"/><rect x="35.95" y="60.2" width="2.4" height="34.8" fill="#2f86c4"/><rect x="38.70" y="59.1" width="2.4" height="35.9" fill="#2f86c4"/><rect x="41.45" y="57.5" width="2.4" height="37.5" fill="#2f86c4"/><rect x="44.20" y="55.9" width="2.4" height="39.1" fill="#2f86c4"/><rect x="46.95" y="54.2" width="2.4" height="40.8" fill="#2f86c4"/><rect x="49.70" y="52.6" width="2.4" height="42.4" fill="#2f86c4"/><rect x="52.45" y="51.0" width="2.4" height="44.0" fill="#2f86c4"/><rect x="55.20" y="49.5" width="2.4" height="45.5" fill="#2f86c4"/><rect x="57.95" y="51.6" width="2.4" height="43.4" fill="#2f86c4"/><rect x="60.70" y="55.3" width="2.4" height="39.7" fill="#2f86c4"/><rect x="63.45" y="59.9" width="2.4" height="35.1" fill="#2f86c4"/><rect x="66.20" y="65.4" width="2.4" height="29.6" fill="#2f86c4"/><rect x="68.95" y="70.9" width="2.4" height="24.1" fill="#2f86c4"/><rect x="71.70" y="78.0" width="2.4" height="17.0" fill="#2f86c4"/><rect x="74.45" y="84.7" width="2.4" height="10.3" fill="#2f86c4"/><rect x="77.20" y="89.1" width="2.4" height="5.9" fill="#2f86c4"/><rect x="79.95" y="92.3" width="2.4" height="2.7" fill="#2f86c4"/><path d="M0 48 L6 48 L6 51 L12 51 L12 56 L22 58 L30 61 L40 57 L50 52 L58 50 L60 48" stroke="#c8c86a" stroke-width="1.2" fill="none"/><rect x="0" y="76.5" width="72" height="1" fill="#9aa85a"/></svg><div class="t" style="left:1967px;top:1200px;font-size:14.5px;color:#d8dadc;width:100px;text-align:right;">Segments</div><div style="left:1985px;top:1217.5px;width:82px;height:3.5px;background:#2b8be6"></div><div style="left:1936px;top:1247px;width:1px;height:57px;background:#222428"></div><div style="left:1837.5px;top:1276.5px;width:88.5px;height:19.5px;background:#7eae72"><div class="t" style="left:0px;top:0px;font-size:13.5px;color:#14240f;width:88.5px;height:20px;line-height:20px;text-align:center;">Read</div></div><svg style="left:1941px;top:1245px;" width="14" height="14" viewBox="0 0 14 14"><path d="M4 3 A5 5 0 1 0 10 3" fill="none" stroke="#5a5d62" stroke-width="1.6"/><path d="M7 .8 L7 6.4" stroke="#5a5d62" stroke-width="1.6"/></svg><div class="t" style="left:1957.5px;top:1243.5px;font-size:15px;color:#c4c6c8;">Post</div><svg style="left:2035px;top:1249.5px;" width="10" height="6.5" viewBox="0 0 10 6.5"><polygon points="0,0 10,0 5.0,6.5" fill="#6e7177"/></svg><svg style="left:2050px;top:1246px;" width="12" height="12" viewBox="0 0 12 12"><path d="M6 0 L6 12 M0 6 L12 6" stroke="#a0a0a0" stroke-width="1.6"/></svg><div style="left:1829px;top:1304px;width:238px;height:17px;background:#1c1d20;border-radius:0 0 7px 7px"><div class="t" style="left:0px;top:0.6px;font-size:14.2px;color:#f4f4f4;width:236px;height:17px;line-height:17px;text-align:center;">Main</div></div><div style="left:82px;top:1322px;width:1746px;height:22px;background:#26282c"></div><svg style="left:92px;top:1328.5px;" width="7" height="10" viewBox="0 0 7 10"><polygon points="7,0 0,5.0 7,10" fill="#9a9a9a"/></svg><svg style="left:1810px;top:1328.5px;" width="7" height="10" viewBox="0 0 7 10"><polygon points="0,0 7,5.0 0,10" fill="#9a9a9a"/></svg><div style="left:219px;top:1331px;width:414px;height:5.5px;background:#7c7e82;border-radius:3px"></div><div style="left:1828px;top:1322px;width:1px;height:22px;background:#1d1e21"></div>
<div style="left:0px;top:1355px;width:2560px;height:60px;background:#373b41"></div><div style="left:0px;top:1406px;width:2560px;height:5px;background:#3a3d43"></div><div style="left:0px;top:1411px;width:2560px;height:4px;background:linear-gradient(#2c2e32,#1f2023)"></div><svg style="left:200px;top:1355px;" width="1945" height="51" viewBox="0 0 1945 51"><polygon points="5,0 1937,0 1925,51 15,51" fill="#161719"/></svg><svg style="left:225px;top:1362px;" width="36" height="20" viewBox="0 0 36 20"><polygon points="0,5 0,15 5,10" fill="#6e7177"/><polygon points="31,5 31,15 36,10" fill="#6e7177"/><circle cx="18" cy="10" r="8.4" fill="none" stroke="#8a8d91" stroke-width="1.5"/><circle cx="13" cy="8" r="1.3" fill="#8a8d91"/><circle cx="23" cy="8" r="1.3" fill="#8a8d91"/><circle cx="18" cy="5.5" r="1.3" fill="#8a8d91"/><circle cx="14" cy="13" r="1.3" fill="#8a8d91"/><circle cx="22" cy="13" r="1.3" fill="#8a8d91"/><rect x="16" y="15.5" width="4" height="3" fill="#8a8d91"/></svg><div class="t" style="left:228px;top:1384.5px;font-size:13.5px;color:#9a9da1;">MIDI</div><div style="left:272px;top:1364px;width:82px;height:6px;background:#26282c"></div><div style="left:272px;top:1371.5px;width:82px;height:6px;background:#26282c"></div><div style="left:272px;top:1364px;width:8px;height:6px;background:#4aa8d8"></div><div style="left:272px;top:1371.5px;width:1.5px;height:6px;background:#4aa8d8"></div><div class="t" style="left:289px;top:1384px;font-size:13.5px;color:#9a9da1;">Leistung</div><svg style="left:374px;top:1365px;" width="30" height="30" viewBox="0 0 30 30"><circle cx="15" cy="15" r="12.5" fill="none" stroke="#b0b0b0" stroke-width="2.6" stroke-dasharray="2.2 4.35"/></svg><div class="t" style="left:420px;top:1362.5px;font-size:15.5px;color:#dadada;">44.1 kHz</div><div class="t" style="left:420px;top:1384px;font-size:14px;color:#dadada;">9.8 ms</div><div class="t" style="left:505px;top:1362.5px;font-size:15.5px;color:#dadada;">5:11 Tage</div><div class="t" style="left:505px;top:1384.5px;font-size:13.5px;color:#9a9da1;">Max. Aufnahmezeit</div><div class="t" style="left:653px;top:1362.5px;font-size:15.5px;color:#9a9da1;letter-spacing:.4px">00:00:33.959</div><div class="t" style="left:662px;top:1384px;font-size:13.5px;color:#9a9da1;">Sekunden</div><svg style="left:729px;top:1389px;" width="9" height="6" viewBox="0 0 9 6"><polygon points="0,0 9,0 4.5,6" fill="#7a7d82"/></svg><div class="t" style="left:785px;top:1359.5px;font-size:22.5px;color:#e8e8e8;font-weight:bold;letter-spacing:.75px">00015.01.03.39</div><div class="t" style="left:855px;top:1385.5px;font-size:13.5px;color:#9a9da1;">Takte</div><svg style="left:895px;top:1390.5px;" width="9" height="6" viewBox="0 0 9 6"><polygon points="0,0 9,0 4.5,6" fill="#7a7d82"/></svg><svg style="left:978px;top:1373px;" width="13" height="14" viewBox="0 0 13 14"><polygon points="13,0 0,7.0 13,14" fill="#c4c4c4"/></svg><svg style="left:1004px;top:1373px;" width="13" height="14" viewBox="0 0 13 14"><polygon points="13,0 0,7.0 13,14" fill="#c4c4c4"/></svg><svg style="left:1016px;top:1373px;" width="13" height="14" viewBox="0 0 13 14"><polygon points="13,0 0,7.0 13,14" fill="#c4c4c4"/></svg><svg style="left:1044px;top:1373px;" width="13" height="14" viewBox="0 0 13 14"><polygon points="0,0 13,7.0 0,14" fill="#c4c4c4"/></svg><svg style="left:1056px;top:1373px;" width="13" height="14" viewBox="0 0 13 14"><polygon points="0,0 13,7.0 0,14" fill="#c4c4c4"/></svg><svg style="left:1078px;top:1373px;" width="13" height="14" viewBox="0 0 13 14"><polygon points="0,0 13,7.0 0,14" fill="#c4c4c4"/></svg><div style="left:1108.5px;top:1372px;width:2.2px;height:16px;background:#c4c4c4"></div><svg style="left:1111px;top:1373px;" width="13" height="14" viewBox="0 0 13 14"><polygon points="13,0 0,7.0 13,14" fill="#c4c4c4"/></svg><div style="left:1150px;top:1367px;width:25.5px;height:26px;background:#c4c4c4"></div><svg style="left:1197px;top:1366px;" width="24" height="28" viewBox="0 0 24 28"><polygon points="0,0 23,14 0,28" fill="#6df02c"/></svg><div style="left:1237px;top:1367px;width:26px;height:26px;background:#c4c4c4;border-radius:13px"></div><svg style="left:1282px;top:1367px;" width="42" height="27" viewBox="0 0 42 27"><path d="M21 22 L11 22 Q2.5 22 2.5 13.5 Q2.5 5 11 5 L31 5 Q39.5 5 39.5 13.5 Q39.5 20 33 21.5 M21 22 L26 8" fill="none" stroke="#b4b4b4" stroke-width="3"/></svg><div class="t" style="left:1346px;top:1361px;font-size:14px;color:#5f8fc4;font-weight:bold">L</div><div class="t" style="left:1346px;top:1381px;font-size:14px;color:#5f8fc4;font-weight:bold">R</div><svg style="left:1360px;top:1366px;" width="6" height="24" viewBox="0 0 6 24"><path d="M1 1 Q4 1 4 4 L4 20 Q4 23 1 23" fill="none" stroke="#6e7177" stroke-width="1.2"/></svg><div class="t" style="left:1373px;top:1361.5px;font-size:16px;color:#dadada;">00001.01.01.00</div><div class="t" style="left:1373px;top:1380.5px;font-size:16px;color:#dadada;">00061.01.01.24</div><svg style="left:1521.5px;top:1364px;" width="15" height="15" viewBox="0 0 15 15"><path d="M4.4 3.2 A5.6 5.6 0 1 0 10.6 3.2" fill="none" stroke="#a8a8a8" stroke-width="1.7"/><path d="M7.5 .8 L7.5 7" stroke="#a8a8a8" stroke-width="1.7"/></svg><div class="t" style="left:1514.5px;top:1384.5px;font-size:14px;color:#9a9da1;">Sync</div><svg style="left:1565px;top:1364px;" width="20" height="12" viewBox="0 0 20 12"><path d="M0 5 L6 5 L10 9 L20 9" fill="none" stroke="#a8a8a8" stroke-width="1.5"/><path d="M0 9 L4 9" stroke="#a8a8a8" stroke-width="1" stroke-dasharray="1 1"/></svg><svg style="left:1598px;top:1363px;" width="20" height="12" viewBox="0 0 20 12"><path d="M4 0 L4 12" stroke="#a8a8a8" stroke-width="1.5"/><rect x="7" y="2" width="12" height="7" fill="#a8a8a8"/><path d="M0 6 L3 6" stroke="#a8a8a8" stroke-width="1.2"/></svg><svg style="left:1567px;top:1383px;" width="14" height="14" viewBox="0 0 14 14"><circle cx="7" cy="7" r="3.6" fill="none" stroke="#a8a8a8" stroke-width="3"/><path d="M7 0 L7 14 M0 7 L14 7 M2 2 L12 12 M12 2 L2 12" stroke="#a8a8a8" stroke-width="1.8"/><circle cx="7" cy="7" r="2" fill="#161719"/></svg><svg style="left:1596px;top:1384px;" width="24" height="12" viewBox="0 0 24 12"><path d="M5 0 L5 12 M18 0 L18 12" stroke="#a8a8a8" stroke-width="1.5"/><rect x="5" y="3" width="13" height="6" fill="#a8a8a8"/><path d="M0 6 L24 6" stroke="#a8a8a8" stroke-width="1" stroke-dasharray="1.5 1.5"/></svg><div style="left:1636px;top:1365px;width:11px;height:11px;background:#a8a8a8;border-radius:6px"></div><svg style="left:1658px;top:1364px;" width="16" height="15" viewBox="0 0 16 15"><path d="M2 2.5 Q5 .5 7.5 3 Q8.5 4.5 8 5.5 L14 12 Q14.3 13.6 13 14 Q12 14 11.6 13.6 L6 7.4 Q4 7.8 3 6.4 L5.4 5.6 L5 3.6 Z" fill="#a8a8a8"/></svg><svg style="left:1684px;top:1363px;" width="18" height="16" viewBox="0 0 18 16"><path d="M6 1 L11 1 L16 15 L1 15 Z" fill="#a8a8a8"/><path d="M3 4 L12 12" stroke="#161719" stroke-width="1.4"/></svg><div class="t" style="left:1636px;top:1385px;font-size:14px;color:#9a9da1;">Metronom</div><div class="t" style="left:1728px;top:1362.5px;font-size:15.5px;color:#dadada;">4 / 4</div><div class="t" style="left:1723.5px;top:1384.5px;font-size:14px;color:#9a9da1;">Taktart</div><div class="t" style="left:1800px;top:1362.5px;font-size:15.5px;color:#dadada;">-</div><div class="t" style="left:1784px;top:1384px;font-size:14px;color:#9a9da1;">Tonart</div><div class="t" style="left:1872px;top:1362.5px;font-size:15.5px;color:#dadada;">0</div><div class="t" style="left:1833px;top:1384px;font-size:14px;color:#9a9da1;">Transponieren</div><div class="t" style="left:1933px;top:1362.5px;font-size:15.5px;color:#dadada;">100.00</div><div class="t" style="left:1937px;top:1384.5px;font-size:14px;color:#9a9da1;">Tempo</div><div style="left:2004px;top:1364px;width:112px;height:5px;background:#2a2c30"></div><div style="left:2004px;top:1370px;width:112px;height:5px;background:#2a2c30"></div><div style="left:2004px;top:1364px;width:63px;height:5px;background:#4aa8d8"></div><div style="left:2004px;top:1370px;width:63px;height:5px;background:#4aa8d8"></div><div style="left:2086px;top:1364px;width:2px;height:11px;background:#161719"></div><div style="left:2004px;top:1385.5px;width:60px;height:11px;background:repeating-linear-gradient(90deg,#4aa8d8 0 1.5px,#161719 1.5px 2.5px)"></div><div style="left:2066px;top:1385.5px;width:22px;height:11px;background:repeating-linear-gradient(90deg,#3a3d43 0 1.5px,#161719 1.5px 2.5px)"></div><div style="left:2062.5px;top:1385.5px;width:2px;height:11px;background:#cfe8f8"></div><div style="left:2096px;top:1387px;width:11px;height:11px;background:#4ab4e8;border-radius:6px"></div><div style="left:2104px;top:1387px;width:11px;height:11px;border:2.5px solid #4ab4e8;border-radius:6px;background:#161719"></div><div style="left:2338px;top:1355px;width:1px;height:56px;background:#2c2e32"></div><div class="t" style="left:2338px;top:1356.5px;font-size:16px;color:#d0d2d4;width:70px;height:60px;line-height:60px;text-align:center;">Edit</div><div style="left:2409px;top:1355px;width:67.5px;height:56px;background:#3380d8"><div class="t" style="left:0px;top:3.5px;font-size:16px;color:#f4f4f4;width:67.5px;height:56px;line-height:56px;text-align:center;">Mix</div></div><div style="left:2478.5px;top:1355px;width:81.5px;height:56px;background:#3380d8"><div class="t" style="left:0px;top:3.5px;font-size:16px;color:#f4f4f4;width:81.5px;height:56px;line-height:56px;text-align:center;">Browse</div></div><div style="left:2409px;top:1411px;width:151px;height:4px;background:linear-gradient(#2a64a8,#1f4a80)"></div><div style="left:462px;top:1415px;width:200px;height:1.5px;background:#d8d8d8"></div>
<div style="left:2078.5px;top:100.5px;width:469.5px;height:1243px;background:#121214;border-radius:7px;overflow:hidden;box-shadow:0 0 0 1px #151618"></div><div style="left:2077px;top:140px;width:471.5px;height:1128px;background:#121214"></div><div style="left:2078.5px;top:100.5px;width:469.5px;height:39.5px;background:#2b2e33;border-radius:7px 7px 0 0"></div><svg style="left:2087px;top:112px;" width="15" height="15" viewBox="0 0 15 15"><path d="M7.5 0 L15 7 L13 7 L13 15 L9 15 L9 10 L6 10 L6 15 L2 15 L2 7 L0 7 Z" fill="#a8aaae"/></svg><div class="t" style="left:2116px;top:111.5px;font-size:14.5px;color:#c4c6c9;">Instrumente</div><div class="t" style="left:2206px;top:111.5px;font-size:14.5px;color:#c4c6c9;">Effekte</div><div class="t" style="left:2266px;top:111.5px;font-size:14.5px;color:#c4c6c9;">Loops</div><div style="left:2314px;top:101px;width:54.5px;height:39px;background:#4a4d54"></div><div class="t" style="left:2321.5px;top:111.5px;font-size:14.5px;color:#e8e8ea;">Splice</div><div class="t" style="left:2377px;top:111.5px;font-size:14.5px;color:#c4c6c9;">Dateien</div><div style="left:2434px;top:108px;width:30px;height:24px;overflow:hidden"><div class="t" style="left:0px;top:3.5px;font-size:14.5px;color:#c4c6c9;">Cloud</div><div style="left:18px;top:0px;width:12px;height:24px;background:linear-gradient(90deg,rgba(43,46,51,0),#2b2e33)"></div></div><svg style="left:2463px;top:117px;" width="10" height="6.5" viewBox="0 0 10 6.5"><polygon points="0,0 10,0 5.0,6.5" fill="#8a8a8a"/></svg><svg style="left:2484px;top:112px;" width="17" height="17" viewBox="0 0 17 17"><circle cx="6.5" cy="6.5" r="5" fill="none" stroke="#c0c0c0" stroke-width="2"/><path d="M10 10 L16 16" stroke="#c0c0c0" stroke-width="2.4"/></svg><svg style="left:2524px;top:113px;" width="14" height="14" viewBox="0 0 14 14"><path d="M2 12 L11.5 2.5 M5 2 L12 2 L12 9" fill="none" stroke="#c0c0c0" stroke-width="2"/></svg><svg style="left:2130px;top:163px;" width="30" height="30" viewBox="0 0 30 30"><path d="M4 15 L15 4.5 L26 15 M8 12.5 L8 25 L12.5 25 L12.5 18.5 L17.5 18.5 L17.5 25 L22 25 L22 12.5" fill="none" stroke="#f4f4f4" stroke-width="2.3" stroke-linejoin="round" stroke-linecap="round"/></svg><svg style="left:2231px;top:165px;" width="28" height="26" viewBox="0 0 28 26"><path d="M14 23 Q2.5 14 2.5 8 Q2.5 3 7.5 3 Q11.5 3 14 7 Q16.5 3 20.5 3 Q25.5 3 25.5 8 Q25.5 14 14 23 Z" fill="none" stroke="#8c8c92" stroke-width="2.2" stroke-linejoin="round"/></svg><svg style="left:2331px;top:164px;" width="28" height="28" viewBox="0 0 28 28"><path d="M14 2.5 L17 5 L21 4.5 L22.5 8 L26 10 L24.5 14 L26 18 L22.5 20 L21 23.5 L17 23 L14 25.5 L11 23 L7 23.5 L5.5 20 L2 18 L3.5 14 L2 10 L5.5 8 L7 4.5 L11 5 Z" fill="none" stroke="#f4f4f4" stroke-width="2.2" stroke-linejoin="round"/><circle cx="14" cy="14" r="4.2" fill="none" stroke="#f4f4f4" stroke-width="2.2"/></svg><div style="left:2412.5px;top:159px;width:115px;height:37.5px;border:1px solid #38383d;border-radius:9px;display:flex;align-items:center;justify-content:center;padding-top:2px;"><span style="font-size:18px;color:#f4f4f6;font-weight:bold;letter-spacing:-.3px">Free trial</span></div><div style="left:2098px;top:225px;width:429.5px;height:37.5px;background:#2c2c30;border-radius:19px"></div><svg style="left:2112px;top:234px;" width="20" height="20" viewBox="0 0 20 20"><circle cx="8" cy="8" r="6.2" fill="none" stroke="#b0b0b4" stroke-width="2.2"/><path d="M12.5 12.5 L18.5 18.5" stroke="#b0b0b4" stroke-width="2.4" stroke-linecap="round"/></svg><div class="t" style="left:2143px;top:231px;font-size:21px;color:#a4a4a8;letter-spacing:0px">Search Vocals</div><div class="t" style="left:2098px;top:304px;font-size:38px;color:#fafafa;font-weight:bold;letter-spacing:-1.2px">Vocals</div><svg style="left:2218px;top:320px;" width="15" height="10" viewBox="0 0 15 10"><path d="M1.5 1.5 L7.5 7.5 L13.5 1.5" fill="none" stroke="#f4f4f4" stroke-width="2.4"/></svg><div style="left:2533px;top:288.5px;width:9.5px;height:164px;background:#4a4a4f;border-radius:5px"></div><div style="left:2098px;top:366px;width:220.5px;height:37px;background:#1450ff;border-radius:9px;display:flex;align-items:center;justify-content:center;padding-top:2px"><svg style="position:static;margin-right:8px" width="26" height="18" viewBox="0 0 26 18"><path d="M1 11.5 L8 11.5 Q11 11.5 12.5 8 L15.5 1.5 M25 7.5 L18 7.5 Q15.5 7.5 14 11 L11.5 16.5" fill="none" stroke="#fff" stroke-width="2.1" stroke-linecap="round"/></svg><span style="font-size:18px;font-weight:bold;color:#fff;letter-spacing:-.3px">Included</span></div><div style="left:2329px;top:366px;width:178.5px;height:37px;border:1px solid #38383d;border-radius:9px;display:flex;align-items:center;justify-content:center;padding-top:2px;"><span style="font-size:18px;color:#f4f4f6;font-weight:bold;letter-spacing:-.3px">Instruments</span><svg style="position:static;margin-left:13px" width="13" height="8" viewBox="0 0 13 8"><path d="M1.5 1.2 L6.5 6.2 L11.5 1.2" fill="none" stroke="#f0f0f0" stroke-width="2"/></svg></div><div style="left:2098px;top:413px;width:131.5px;height:37px;border:1px solid #38383d;border-radius:9px;display:flex;align-items:center;justify-content:center;padding-top:2px;"><span style="font-size:18px;color:#f4f4f6;font-weight:bold;letter-spacing:-.3px">Genres</span><svg style="position:static;margin-left:13px" width="13" height="8" viewBox="0 0 13 8"><path d="M1.5 1.2 L6.5 6.2 L11.5 1.2" fill="none" stroke="#f0f0f0" stroke-width="2"/></svg></div><div style="left:2240px;top:413px;width:128.5px;height:37px;border:1px solid #38383d;border-radius:9px;display:flex;align-items:center;justify-content:center;padding-top:2px;"><span style="font-size:18px;color:#f4f4f6;font-weight:bold;letter-spacing:-.3px">Key</span><svg style="position:static;margin-left:13px" width="13" height="8" viewBox="0 0 13 8"><path d="M1.5 1.2 L6.5 6.2 L11.5 1.2" fill="none" stroke="#f0f0f0" stroke-width="2"/></svg></div><div style="left:2379px;top:413px;width:128.5px;height:37px;border:1px solid #38383d;border-radius:9px;display:flex;align-items:center;justify-content:center;padding-top:2px;"><span style="font-size:18px;color:#f4f4f6;font-weight:bold;letter-spacing:-.3px">BPM</span><svg style="position:static;margin-left:13px" width="13" height="8" viewBox="0 0 13 8"><path d="M1.5 1.2 L6.5 6.2 L11.5 1.2" fill="none" stroke="#f0f0f0" stroke-width="2"/></svg></div><div style="left:2098px;top:460px;width:409.5px;height:37px;border:1px solid #38383d;border-radius:9px;display:flex;align-items:center;justify-content:center;padding-top:2px;"><span style="font-size:18px;color:#f4f4f6;font-weight:bold;letter-spacing:-.3px">One-Shots &amp; Loops</span><svg style="position:static;margin-left:13px" width="13" height="8" viewBox="0 0 13 8"><path d="M1.5 1.2 L6.5 6.2 L11.5 1.2" fill="none" stroke="#f0f0f0" stroke-width="2"/></svg></div><div style="left:2098px;top:517px;width:365px;height:38px;overflow:hidden"><div style="left:0px;top:4.5px;width:77.5px;height:29.5px;border:1px solid #38383d;border-radius:5px;font-size:20px;color:#d4d4d8;text-align:center;line-height:27px;letter-spacing:-.3px">female</div><div style="left:83.5px;top:4.5px;width:54px;height:29.5px;border:1px solid #38383d;border-radius:5px;font-size:20px;color:#d4d4d8;text-align:center;line-height:27px;letter-spacing:-.3px">pop</div><div style="left:143px;top:4.5px;width:48.5px;height:29.5px;border:1px solid #38383d;border-radius:5px;font-size:20px;color:#d4d4d8;text-align:center;line-height:27px;letter-spacing:-.3px">dry</div><div style="left:197px;top:4.5px;width:62.5px;height:29.5px;border:1px solid #38383d;border-radius:5px;font-size:20px;color:#d4d4d8;text-align:center;line-height:27px;letter-spacing:-.3px">male</div><div style="left:265px;top:4.5px;width:51.5px;height:29.5px;border:1px solid #38383d;border-radius:5px;font-size:20px;color:#d4d4d8;text-align:center;line-height:27px;letter-spacing:-.3px">wet</div><div style="left:322px;top:4.5px;width:54px;height:29.5px;border:1px solid #38383d;border-radius:5px;font-size:20px;color:#d4d4d8;text-align:center;line-height:27px;letter-spacing:-.3px">edm</div><div style="left:345px;top:0px;width:20px;height:38px;background:linear-gradient(90deg,rgba(18,18,20,0),#121214)"></div></div><div style="left:2471px;top:517px;width:36.5px;height:37.5px;background:#5c5c68;border-radius:9px"><svg style="left:16px;top:10px;" width="5" height="18" viewBox="0 0 5 18"><circle cx="2.5" cy="2.5" r="1.9" fill="#fff"/><circle cx="2.5" cy="9" r="1.9" fill="#fff"/><circle cx="2.5" cy="15.5" r="1.9" fill="#fff"/></svg></div><div style="left:2098px;top:595.5px;width:36.5px;height:36px;border:1px solid #38383d;border-radius:9px"><svg style="left:7px;top:8px;" width="22" height="19" viewBox="0 0 22 19"><path d="M1 4 L5 4 Q8 4 10 7.5 L12 11 Q14 14.5 17 14.5 L20 14.5 M1 14.5 L5 14.5 Q7.5 14.5 9 12.5 M13 6.5 Q14.5 4 17 4 L20 4 M17.5 1 L20.5 4 L17.5 7 M17.5 11.5 L20.5 14.5 L17.5 17.5" fill="none" stroke="#f4f4f4" stroke-width="1.9" stroke-linecap="round" stroke-linejoin="round"/></svg></div><div style="left:2145px;top:595.5px;width:181.5px;height:36px;border:1px solid #38383d;border-radius:9px;display:flex;align-items:center;justify-content:center;padding-top:1px"><span style="font-size:18px;font-weight:bold;color:#f4f4f6;letter-spacing:-.4px">Most popular</span><svg style="position:static;margin-left:12px" width="11" height="17" viewBox="0 0 11 17"><path d="M1.5 6 L5.5 2 L9.5 6 M1.5 11 L5.5 15 L9.5 11" fill="none" stroke="#f0f0f0" stroke-width="1.9"/></svg></div><div class="t" style="left:2098px;top:651px;font-size:21.5px;color:#c8c8cc;letter-spacing:.25px">653 included results</div><div style="left:2098px;top:686px;width:409.5px;height:1px;background:#2c2c31"></div><div class="t" style="left:2098px;top:697.5px;font-size:16px;color:#a0a0a5;">Pack</div><div class="t" style="left:2213px;top:697.5px;font-size:16px;color:#a0a0a5;">Filename</div><svg style="left:2283px;top:699.5px;" width="9" height="15" viewBox="0 0 9 15"><path d="M1.5 5.5 L4.5 2.5 L7.5 5.5 M1.5 9.5 L4.5 12.5 L7.5 9.5" fill="none" stroke="#c0c0c4" stroke-width="1.5"/></svg><div style="left:2098px;top:727.2px;width:409.5px;height:1px;background:#2c2c31"></div><div style="left:2098px;top:741.7px;width:45px;height:45px;border-radius:2px;overflow:hidden"><svg style="left:0px;top:0px;" width="45" height="45" viewBox="0 0 45 45"><rect width="45" height="45" fill="#3c4a40"/><rect x="0" y="0" width="45" height="16" fill="#2c4438"/><circle cx="8" cy="18" r="7" fill="#28523a"/><circle cx="38" cy="22" r="8" fill="#2a4a38"/><ellipse cx="22" cy="17" rx="6" ry="7" fill="#b89880"/><path d="M8 45 Q10 28 22 27 Q36 28 38 45 Z" fill="#c4c8cc"/><rect x="15" y="15" width="14" height="3.5" fill="#1a2a2a"/><path d="M16 9 Q22 3 29 10 L28 13 L16 13 Z" fill="#2a2422"/><path d="M4 9 Q14 2 22 8 M24 6 Q32 3 42 7" stroke="#e8ece8" stroke-width="1.6" fill="none"/></svg></div><svg style="left:2166px;top:752.7px;" width="24" height="24" viewBox="0 0 24 24"><path d="M3.5 11 L3.5 9.5 Q3.5 6.5 6.5 6.5 L20 6.5 M16.5 2.5 L20.5 6.5 L16.5 10.5" fill="none" stroke="#b4b4b8" stroke-width="1.9" stroke-linecap="round" stroke-linejoin="round"/><path d="M20.5 13 L20.5 14.5 Q20.5 17.5 17.5 17.5 L4 17.5 M7.5 13.5 L3.5 17.5 L7.5 21.5" fill="none" stroke="#b4b4b8" stroke-width="1.9" stroke-linecap="round" stroke-linejoin="round"/></svg><div style="left:2213px;top:743.2px;width:295px;height:50px;overflow:hidden"><div class="t" style="left:0px;top:0px;font-size:18.5px;color:#fafafa;letter-spacing:-.45px;text-shadow:0 0 .6px #fff">DOM_vocal_loop_beatbox_clean_10_s</div><div class="t" style="left:5px;top:23.3px;font-size:16.5px;color:#c8c8cc;letter-spacing:-.2px;text-shadow:0 0 .5px #c8c8cc"><span style="margin-right:15px">drums</span><span style="margin-right:15px">live sounds</span><span style="margin-right:15px">breaks</span><span style="margin-right:15px">vocals</span><span style="margin-right:15px">hip hop</span></div><div style="left:272px;top:0px;width:23px;height:50px;background:linear-gradient(90deg,rgba(18,18,20,0),#121214 85%)"></div></div><div style="left:2098px;top:802.25px;width:409.5px;height:1px;background:#2c2c31"></div><div style="left:2098px;top:816.75px;width:45px;height:45px;border-radius:2px;overflow:hidden"><svg style="left:0px;top:0px;" width="45" height="45" viewBox="0 0 45 45"><defs><linearGradient id="t1" x1="0" y1="0" x2="0" y2="1"><stop offset="0" stop-color="#a8b4c0"/><stop offset=".45" stop-color="#d4b890"/><stop offset="1" stop-color="#c47a30"/></linearGradient></defs><rect width="45" height="45" fill="url(#t1)"/><circle cx="22.5" cy="22" r="13.5" fill="#4a2c2c"/><circle cx="22.5" cy="22" r="13.5" fill="none" stroke="#7a3a30" stroke-width="1.5"/><path d="M14 26 Q22 12 30 20 L27 30 Z" fill="#8a6a7a"/><path d="M17 18 L28 27" stroke="#c8b8a8" stroke-width="1.5"/></svg></div><svg style="left:2166px;top:827.75px;" width="24" height="24" viewBox="0 0 24 24"><path d="M3.5 11 L3.5 9.5 Q3.5 6.5 6.5 6.5 L20 6.5 M16.5 2.5 L20.5 6.5 L16.5 10.5" fill="none" stroke="#b4b4b8" stroke-width="1.9" stroke-linecap="round" stroke-linejoin="round"/><path d="M20.5 13 L20.5 14.5 Q20.5 17.5 17.5 17.5 L4 17.5 M7.5 13.5 L3.5 17.5 L7.5 21.5" fill="none" stroke="#b4b4b8" stroke-width="1.9" stroke-linecap="round" stroke-linejoin="round"/></svg><div style="left:2213px;top:818.25px;width:295px;height:50px;overflow:hidden"><div class="t" style="left:0px;top:0px;font-size:18.5px;color:#fafafa;letter-spacing:-.45px;text-shadow:0 0 .6px #fff">SC_MS_140_vocals_rythmic_C.wav</div><div class="t" style="left:5px;top:23.3px;font-size:16.5px;color:#c8c8cc;letter-spacing:-.2px;text-shadow:0 0 .5px #c8c8cc"><span style="margin-right:15px">vocals</span><span style="margin-right:15px">folk</span><span style="margin-right:15px">chants</span><span style="margin-right:15px">mongolian</span><span style="margin-right:15px">throat</span></div><div style="left:272px;top:0px;width:23px;height:50px;background:linear-gradient(90deg,rgba(18,18,20,0),#121214 85%)"></div></div><div style="left:2098px;top:877.3000000000001px;width:409.5px;height:1px;background:#2c2c31"></div><div style="left:2098px;top:891.8000000000001px;width:45px;height:45px;border-radius:2px;overflow:hidden"><svg style="left:0px;top:0px;" width="45" height="45" viewBox="0 0 45 45"><rect width="45" height="45" fill="#1e2022"/><circle cx="22.5" cy="23" r="11" fill="none" stroke="#2f9a88" stroke-width="1.6"/><circle cx="22.5" cy="23" r="11.8" fill="none" stroke="#7adcc8" stroke-width=".7" stroke-dasharray="20 50"/><rect x="3" y="2.5" width="39" height=".7" fill="#5a5c5e"/></svg></div><svg style="left:2166px;top:902.8000000000001px;" width="24" height="24" viewBox="0 0 24 24"><path d="M3.5 11 L3.5 9.5 Q3.5 6.5 6.5 6.5 L20 6.5 M16.5 2.5 L20.5 6.5 L16.5 10.5" fill="none" stroke="#b4b4b8" stroke-width="1.9" stroke-linecap="round" stroke-linejoin="round"/><path d="M20.5 13 L20.5 14.5 Q20.5 17.5 17.5 17.5 L4 17.5 M7.5 13.5 L3.5 17.5 L7.5 21.5" fill="none" stroke="#b4b4b8" stroke-width="1.9" stroke-linecap="round" stroke-linejoin="round"/></svg><div style="left:2213px;top:893.3000000000001px;width:295px;height:50px;overflow:hidden"><div class="t" style="left:0px;top:0px;font-size:18.5px;color:#fafafa;letter-spacing:-.45px;text-shadow:0 0 .6px #fff">tp_bmve_140_vocal_loop_bassline_dm</div><div class="t" style="left:5px;top:23.3px;font-size:16.5px;color:#c8c8cc;letter-spacing:-.2px;text-shadow:0 0 .5px #c8c8cc"><span style="margin-right:15px">drum and bass</span><span style="margin-right:15px">vocals</span><span style="margin-right:15px">dubstep</span><span style="margin-right:15px">male</span></div><div style="left:272px;top:0px;width:23px;height:50px;background:linear-gradient(90deg,rgba(18,18,20,0),#121214 85%)"></div></div><div style="left:2098px;top:952.35px;width:409.5px;height:1px;background:#2c2c31"></div><div style="left:2098px;top:966.85px;width:45px;height:45px;border-radius:2px;overflow:hidden"><svg style="left:0px;top:0px;" width="45" height="45" viewBox="0 0 45 45"><rect width="45" height="45" fill="#2a6aa0"/><rect x="0" y="0" width="22" height="14" fill="#3a8ac0"/><rect x="23" y="0" width="22" height="12" fill="#4a9ad0"/><rect x="0" y="15" width="14" height="14" fill="#1a4a7a"/><rect x="30" y="13" width="15" height="15" fill="#2a5a8a"/><rect x="0" y="30" width="20" height="15" fill="#1a3a6a"/><rect x="22" y="30" width="23" height="15" fill="#2a4a7a"/><ellipse cx="22" cy="22" rx="9" ry="8" fill="#1a2a4a"/><ellipse cx="21" cy="19" rx="4" ry="4.5" fill="#d8c8d0"/><rect x="12" y="25" width="22" height="6" fill="#142038"/><rect x="14" y="26.5" width="18" height="2.4" fill="#8ab0d8"/></svg></div><svg style="left:2166px;top:977.85px;" width="24" height="24" viewBox="0 0 24 24"><path d="M2 10 L2 14 M6.5 8 L6.5 16 M11 2 L11 22 M15.5 6 L15.5 18 M20 9 L20 15" stroke="#b4b4b8" stroke-width="2" stroke-linecap="round"/></svg><div style="left:2213px;top:968.35px;width:295px;height:50px;overflow:hidden"><div class="t" style="left:0px;top:0px;font-size:18.5px;color:#fafafa;letter-spacing:-.45px;text-shadow:0 0 .6px #fff">Varien_laser_beam.wav</div><div class="t" style="left:5px;top:23.3px;font-size:16.5px;color:#c8c8cc;letter-spacing:-.2px;text-shadow:0 0 .5px #c8c8cc"><span style="margin-right:15px">live sounds</span><span style="margin-right:15px">vocals</span><span style="margin-right:15px">cinematic</span><span style="margin-right:15px">female</span></div><div style="left:272px;top:0px;width:23px;height:50px;background:linear-gradient(90deg,rgba(18,18,20,0),#121214 85%)"></div></div><div style="left:2098px;top:1027.4px;width:409.5px;height:1px;background:#2c2c31"></div><div style="left:2098px;top:1041.9px;width:45px;height:45px;border-radius:2px;overflow:hidden"><svg style="left:0px;top:0px;" width="45" height="45" viewBox="0 0 45 45"><rect width="45" height="45" fill="#4a5ad8"/><rect x="0" y="0" width="5.5" height="45" fill="#0c0c10"/><rect x="5.5" y="0" width="40" height="45" fill="#5a6ae0"/><circle cx="38" cy="8" r="9" fill="#7a5ad0"/><circle cx="10" cy="38" r="8" fill="#3a8ae0"/><path d="M12 22 Q12 6 26 6 Q38 7 36 24 L34 30 L14 30 Z" fill="#d8a0e0"/><ellipse cx="24" cy="19" rx="7" ry="7.5" fill="#f0d0c8"/><rect x="16" y="16" width="15" height="4" rx="1.5" fill="#14141c"/><path d="M8 45 Q10 30 24 29 Q38 30 40 45 Z" fill="#3a9ae0"/><path d="M20 30 L24 40 L28 30" fill="#e8e8f0"/></svg></div><svg style="left:2166px;top:1052.9px;" width="24" height="24" viewBox="0 0 24 24"><path d="M3.5 11 L3.5 9.5 Q3.5 6.5 6.5 6.5 L20 6.5 M16.5 2.5 L20.5 6.5 L16.5 10.5" fill="none" stroke="#b4b4b8" stroke-width="1.9" stroke-linecap="round" stroke-linejoin="round"/><path d="M20.5 13 L20.5 14.5 Q20.5 17.5 17.5 17.5 L4 17.5 M7.5 13.5 L3.5 17.5 L7.5 21.5" fill="none" stroke="#b4b4b8" stroke-width="1.9" stroke-linecap="round" stroke-linejoin="round"/></svg><div style="left:2213px;top:1043.4px;width:295px;height:50px;overflow:hidden"><div class="t" style="left:0px;top:0px;font-size:18.5px;color:#fafafa;letter-spacing:-.45px;text-shadow:0 0 .6px #fff">VOX_GLX_128_vocal_hook_wet_sweet</div><div class="t" style="left:5px;top:23.3px;font-size:16.5px;color:#c8c8cc;letter-spacing:-.2px;text-shadow:0 0 .5px #c8c8cc"><span style="margin-right:15px">drum and bass</span><span style="margin-right:15px">vocals</span><span style="margin-right:15px">trance</span><span style="margin-right:15px">edm</span></div><div style="left:272px;top:0px;width:23px;height:50px;background:linear-gradient(90deg,rgba(18,18,20,0),#121214 85%)"></div></div><div style="left:2098px;top:1102.45px;width:409.5px;height:1px;background:#2c2c31"></div><div style="left:2098px;top:1116.95px;width:45px;height:45px;border-radius:2px;overflow:hidden"><svg style="left:0px;top:0px;" width="45" height="45" viewBox="0 0 45 45"><rect width="45" height="45" fill="#3a1c14"/><path d="M22.5 24 L0 45 L9 45 Z M22.5 24 L13 45 L20 45 Z M22.5 24 L25 45 L32 45 Z M22.5 24 L36 45 L45 45 Z" fill="#e8b82a"/><path d="M22.5 24 L9 45 L13 45 Z M22.5 24 L20 45 L25 45 Z M22.5 24 L32 45 L36 45 Z" fill="#8a5a14"/><path d="M0 12 Q10 2 22 8 Q34 2 45 12 L45 26 Q34 14 22.5 22 Q10 14 0 26 Z" fill="#c8241c"/><path d="M4 8 Q12 0 22 5 Q32 0 42 8" stroke="#e86a1a" stroke-width="3" fill="none"/><circle cx="22" cy="9" r="6" fill="#d0d0d4"/><circle cx="22.5" cy="33" r="3.5" fill="#2a9a5a"/><path d="M0 0 L12 0 L0 10 Z M45 0 L33 0 L45 10 Z" fill="#4a4a52"/></svg></div><svg style="left:2166px;top:1127.95px;" width="24" height="24" viewBox="0 0 24 24"><path d="M3.5 11 L3.5 9.5 Q3.5 6.5 6.5 6.5 L20 6.5 M16.5 2.5 L20.5 6.5 L16.5 10.5" fill="none" stroke="#b4b4b8" stroke-width="1.9" stroke-linecap="round" stroke-linejoin="round"/><path d="M20.5 13 L20.5 14.5 Q20.5 17.5 17.5 17.5 L4 17.5 M7.5 13.5 L3.5 17.5 L7.5 21.5" fill="none" stroke="#b4b4b8" stroke-width="1.9" stroke-linecap="round" stroke-linejoin="round"/></svg><div style="left:2213px;top:1118.45px;width:295px;height:50px;overflow:hidden"><div class="t" style="left:0px;top:0px;font-size:18.5px;color:#fafafa;letter-spacing:-.45px;text-shadow:0 0 .6px #fff">SOUNDDOCTRINE_rendition_vocal_run</div><div class="t" style="left:5px;top:23.3px;font-size:16.5px;color:#c8c8cc;letter-spacing:-.2px;text-shadow:0 0 .5px #c8c8cc"><span style="margin-right:15px">vocals</span><span style="margin-right:15px">soul</span><span style="margin-right:15px">female</span><span style="margin-right:15px">adlib</span><span style="margin-right:15px">gospel</span></div><div style="left:272px;top:0px;width:23px;height:50px;background:linear-gradient(90deg,rgba(18,18,20,0),#121214 85%)"></div></div><div style="left:2098px;top:1177.5px;width:409.5px;height:1px;background:#2c2c31"></div><div style="left:2098px;top:1192.0px;width:45px;height:45px;border-radius:2px;overflow:hidden"><svg style="left:0px;top:0px;" width="45" height="45" viewBox="0 0 45 45"><rect width="45" height="45" fill="#b89070"/><rect x="0" y="0" width="45" height="12" fill="#d8b898"/><rect x="28" y="6" width="17" height="20" fill="#7a5ab8"/><rect x="28" y="6" width="17" height="8" fill="#e88a5a"/><rect x="3" y="8" width="18" height="2" fill="#6a4a30"/><rect x="3" y="15" width="18" height="2" fill="#6a4a30"/><rect x="6" y="4" width="4" height="4" fill="#3a6a4a"/><rect x="13" y="11" width="5" height="4" fill="#a84a3a"/><rect x="0" y="26" width="45" height="19" fill="#6a4432"/><rect x="4" y="28" width="18" height="10" fill="#3a5a4a"/><ellipse cx="33" cy="30" rx="4" ry="5" fill="#4a6a9a"/><rect x="0" y="28" width="5" height="17" fill="#1a1210"/></svg></div><svg style="left:2166px;top:1203.0px;" width="24" height="24" viewBox="0 0 24 24"><path d="M3.5 11 L3.5 9.5 Q3.5 6.5 6.5 6.5 L20 6.5 M16.5 2.5 L20.5 6.5 L16.5 10.5" fill="none" stroke="#b4b4b8" stroke-width="1.9" stroke-linecap="round" stroke-linejoin="round"/><path d="M20.5 13 L20.5 14.5 Q20.5 17.5 17.5 17.5 L4 17.5 M7.5 13.5 L3.5 17.5 L7.5 21.5" fill="none" stroke="#b4b4b8" stroke-width="1.9" stroke-linecap="round" stroke-linejoin="round"/></svg><div style="left:2213px;top:1193.5px;width:295px;height:50px;overflow:hidden"><div class="t" style="left:0px;top:0px;font-size:18.5px;color:#fafafa;letter-spacing:-.45px;text-shadow:0 0 .6px #fff">VOX_CVP_150_vocal_phrase_i_just_w</div><div class="t" style="left:5px;top:23.3px;font-size:16.5px;color:#c8c8cc;letter-spacing:-.2px;text-shadow:0 0 .5px #c8c8cc"><span style="margin-right:15px">vocals</span><span style="margin-right:15px">wet</span><span style="margin-right:15px">phrases</span><span style="margin-right:15px">lo-fi hip hop</span></div><div style="left:272px;top:0px;width:23px;height:50px;background:linear-gradient(90deg,rgba(18,18,20,0),#121214 85%)"></div></div><div style="left:2098px;top:1252.5px;width:409.5px;height:1px;background:#2c2c31"></div><div style="left:2098px;top:1267px;width:45px;height:1px;background:#3a1c4a"></div><div style="left:2078px;top:1267.7px;width:470px;height:76px;background:#222226;border-radius:0 0 7px 7px"></div><svg style="left:2108px;top:1297px;" width="20" height="20" viewBox="0 0 20 20"><path d="M2 2 L2 18" stroke="#4c4c52" stroke-width="2.2"/><path d="M17.5 2.5 L17.5 17.5 L6 10 Z" fill="none" stroke="#4c4c52" stroke-width="2.2" stroke-linejoin="round"/></svg><svg style="left:2150px;top:1295px;" width="20" height="24" viewBox="0 0 20 24"><path d="M2 2 L18 12 L2 22 Z" fill="#4c4c52" stroke="#4c4c52" stroke-width="2" stroke-linejoin="round"/></svg><svg style="left:2188px;top:1297px;" width="20" height="20" viewBox="0 0 20 20"><path d="M18 2 L18 18" stroke="#c8c8cc" stroke-width="2.2"/><path d="M2.5 2.5 L2.5 17.5 L14 10 Z" fill="none" stroke="#c8c8cc" stroke-width="2.2" stroke-linejoin="round"/></svg><svg style="left:2499px;top:1296px;" width="24" height="22" viewBox="0 0 24 22"><path d="M2 7.5 L6 7.5 L11.5 2.5 L11.5 19.5 L6 14.5 L2 14.5 Z" fill="none" stroke="#c8c8cc" stroke-width="1.9" stroke-linejoin="round"/><path d="M15 7.5 Q17.5 11 15 14.5 M17.5 4 Q23 11 17.5 18" fill="none" stroke="#c8c8cc" stroke-width="1.9" stroke-linecap="round"/></svg>
<div style="left:1052.5px;top:797.5px;width:932.5px;height:449px;background:#2b2d31;box-shadow:0 0 8px rgba(0,0,0,.5)"></div><div style="left:1052.5px;top:797.5px;width:932.5px;height:24px;background:#222326;border-top:1px solid #45474b;border-left:1px solid #3a3c40;border-right:1px solid #3a3c40"></div><svg style="left:1063px;top:803px;" width="13.5" height="13.5" viewBox="0 0 13.5 13.5"><path d="M6.75 0 L6.75 13.5 M0 6.75 L13.5 6.75" stroke="#e0e0e0" stroke-width="2.4"/></svg><div class="t" style="left:1092px;top:801.5px;font-size:14.3px;color:#e8e8e8;">CV Instrument</div><svg style="left:1927px;top:802px;" width="16" height="16" viewBox="0 0 16 16"><path d="M9 1.5 L14.5 7 L12.5 9 L10.8 8.6 L8.6 10.8 L5.2 7.4 L7.4 5.2 L7 3.5 Z" fill="#2b8be6"/><path d="M6.8 9.2 L1 15" stroke="#2b8be6" stroke-width="2"/></svg><svg style="left:1962px;top:803px;" width="13" height="13" viewBox="0 0 13 13"><path d="M1 1 L12 12 M12 1 L1 12" stroke="#e4e4e4" stroke-width="2"/></svg><div style="left:1052.5px;top:821.5px;width:932.5px;height:30px;background:linear-gradient(#0d0e0f,#1a1b1d 70%,#101112)"></div><div class="t" style="left:1053px;top:822px;font-size:14.3px;color:#a4a7ac;width:54.299999999999955px;height:31px;line-height:31px;text-align:center;">2 - Sa..</div><div style="left:1106.8px;top:822px;width:1px;height:29px;background:#0a0a0b"></div><div class="t" style="left:1107.3px;top:822px;font-size:14.3px;color:#a4a7ac;width:128.70000000000005px;height:31px;line-height:31px;text-align:center;">3 - SampleOne 2</div><div style="left:1235.5px;top:822px;width:1px;height:29px;background:#0a0a0b"></div><div class="t" style="left:1236px;top:822px;font-size:14.3px;color:#a4a7ac;width:129.4000000000001px;height:31px;line-height:31px;text-align:center;">4 - SampleOne 3</div><div style="left:1364.9px;top:822px;width:1px;height:29px;background:#0a0a0b"></div><div class="t" style="left:1365.4px;top:822px;font-size:14.3px;color:#a4a7ac;width:128.0999999999999px;height:31px;line-height:31px;text-align:center;">5 - SampleOne 4</div><div style="left:1493.0px;top:822px;width:1px;height:29px;background:#0a0a0b"></div><div class="t" style="left:1493.5px;top:822px;font-size:14.3px;color:#a4a7ac;width:128.5px;height:31px;line-height:31px;text-align:center;">6 - SampleOne 5</div><div style="left:1621.5px;top:822px;width:1px;height:29px;background:#0a0a0b"></div><div class="t" style="left:1622px;top:822px;font-size:14.3px;color:#a4a7ac;width:89.5px;height:31px;line-height:31px;text-align:center;">7 - Mai Tai</div><div style="left:1711.0px;top:822px;width:1px;height:29px;background:#0a0a0b"></div><div class="t" style="left:1711.5px;top:822px;font-size:14.3px;color:#a4a7ac;width:92.5px;height:31px;line-height:31px;text-align:center;">8 - Mojito 2</div><div style="left:1803.5px;top:822px;width:1px;height:29px;background:#0a0a0b"></div><div style="left:1804px;top:821.5px;width:154px;height:30px;background:linear-gradient(#0c0d0f,#181b20)"></div><div class="t" style="left:1815px;top:822px;font-size:14.3px;color:#fafafa;height:31px;line-height:31px;">9 - CV Instrument</div><svg style="left:1938px;top:832px;" width="11" height="7" viewBox="0 0 11 7"><polygon points="0,0 11,0 5.5,7" fill="#c8c8c8"/></svg><div class="t" style="left:1964px;top:826px;font-size:17px;color:#c8c8c8;font-weight:bold;letter-spacing:.5px">...</div><div style="left:1052.5px;top:851.5px;width:932.5px;height:45px;background:#1a1d22"></div><div style="left:1053px;top:853.5px;width:31px;height:22.5px;background:#2787d9"></div><svg style="left:1060.5px;top:856.5px;" width="16" height="16" viewBox="0 0 16 16"><path d="M4.6 3.4 A6 6 0 1 0 11.4 3.4" fill="none" stroke="#f4f4f4" stroke-width="2"/><path d="M8 .6 L8 7.6" stroke="#f4f4f4" stroke-width="2"/></svg><div style="left:1085.5px;top:853.5px;width:31.5px;height:22.5px;background:#33363c"></div><svg style="left:1091px;top:858px;" width="20" height="12" viewBox="0 0 20 12"><path d="M1 10 L4 10 Q4 2 10 2 Q16 2 16 10 L19 10" fill="none" stroke="#a8a8a8" stroke-width="1.6"/><circle cx="10" cy="9" r="2" fill="#a8a8a8"/></svg><div style="left:1123px;top:853.5px;width:25px;height:22.5px;background:#33363c"></div><svg style="left:1129px;top:857.5px;" width="13" height="15" viewBox="0 0 13 15"><path d="M1.5 1 L8 1 L11.5 4.5 L11.5 14 L1.5 14 Z" fill="none" stroke="#d0d0d0" stroke-width="1.6"/><path d="M3 8 L10 8 M3 11 L10 11" stroke="#d0d0d0" stroke-width="1.4"/></svg><div style="left:1149px;top:853.5px;width:35.5px;height:22.5px;background:#33363c"></div><svg style="left:1153px;top:859.5px;" width="9" height="11" viewBox="0 0 9 11"><polygon points="9,0 0,5.5 9,11" fill="#c8c8c8"/></svg><svg style="left:1172px;top:859.5px;" width="9" height="11" viewBox="0 0 9 11"><polygon points="0,0 9,5.5 0,11" fill="#c8c8c8"/></svg><div style="left:1186px;top:853.5px;width:200px;height:22.5px;background:#33363c"></div><div class="t" style="left:1186px;top:854px;font-size:14.4px;color:#e4e4e4;width:186px;height:23px;line-height:23px;text-align:center;">default</div><svg style="left:1370px;top:861.5px;" width="10" height="6.5" viewBox="0 0 10 6.5"><polygon points="0,0 10,0 5.0,6.5" fill="#8a8a8a"/></svg><div style="left:1401px;top:853.5px;width:43px;height:22.5px;background:#33363c"></div><svg style="left:1414px;top:858px;" width="19" height="13" viewBox="0 0 19 13"><rect x="0" y="0" width="3.2" height="13" fill="#b8b8b8"/><path d="M5 6.5 L12 6.5" stroke="#b8b8b8" stroke-width="3"/><polygon points="11,1 18.5,6.5 11,12" fill="#b8b8b8"/></svg><div style="left:1446px;top:853.5px;width:43px;height:22.5px;background:#33363c"></div><svg style="left:1459px;top:858px;" width="19" height="13" viewBox="0 0 19 13"><path d="M0 6.5 L8 6.5" stroke="#b8b8b8" stroke-width="3"/><polygon points="6.5,1 14,6.5 6.5,12" fill="#b8b8b8"/><rect x="14.5" y="0" width="3.2" height="13" fill="#b8b8b8"/></svg><div style="left:1490.5px;top:853.5px;width:130.5px;height:22.5px;background:#33363c"></div><div class="t" style="left:1490px;top:854px;font-size:14.6px;color:#e4e4e4;width:100px;height:23px;line-height:23px;text-align:center;">Keiner</div><svg style="left:1606px;top:861.5px;" width="10" height="6.5" viewBox="0 0 10 6.5"><polygon points="0,0 10,0 5.0,6.5" fill="#8a8a8a"/></svg><div style="left:1633px;top:853.5px;width:88px;height:22.5px;background:#33363c"></div><div class="t" style="left:1633px;top:854px;font-size:14.6px;color:#e4e4e4;width:70px;height:23px;line-height:23px;text-align:center;">Stereo</div><svg style="left:1703px;top:861.5px;" width="10" height="6.5" viewBox="0 0 10 6.5"><polygon points="0,0 10,0 5.0,6.5" fill="#8a8a8a"/></svg><div style="left:1053px;top:877px;width:64px;height:19px;background:#4a4d52"><div class="t" style="left:0px;top:0px;font-size:13.2px;color:#9a9da1;width:64px;height:19.5px;line-height:19.5px;text-align:center;">Auto: Off</div></div><div style="left:1123px;top:877px;width:94px;height:19px;background:#292c31"><div class="t" style="left:0px;top:0px;font-size:14px;color:#6e7177;width:94px;height:19.5px;line-height:19.5px;text-align:center;">Vergleichen</div></div><div style="left:1218px;top:877px;width:84px;height:19px;background:#292c31"><div class="t" style="left:0px;top:0px;font-size:14px;color:#e8e8e8;width:84px;height:19.5px;line-height:19.5px;text-align:center;">Kopieren</div></div><div style="left:1303px;top:877px;width:83px;height:19px;background:#292c31"><div class="t" style="left:0px;top:0px;font-size:14px;color:#6e7177;width:83px;height:19.5px;line-height:19.5px;text-align:center;">Einfügen</div></div><div style="left:1828px;top:877px;width:21px;height:19px;background:#33363c"></div><svg style="left:1831.5px;top:879.5px;" width="14" height="14" viewBox="0 0 14 14"><circle cx="7" cy="7" r="3.6" fill="none" stroke="#b8b8b8" stroke-width="2.6"/><path d="M7 0 L7 14 M0 7 L14 7 M2 2 L12 12 M12 2 L2 12" stroke="#b8b8b8" stroke-width="2"/><circle cx="7" cy="7" r="2.2" fill="#33363c"/></svg><div style="left:1851px;top:877px;width:20px;height:19px;background:#33363c"></div><svg style="left:1856px;top:884px;" width="10" height="6.5" viewBox="0 0 10 6.5"><polygon points="0,0 10,0 5.0,6.5" fill="#6e7177"/></svg><div style="left:1872px;top:877px;width:112.5px;height:19px;background:#292c31"></div><div style="left:1052.5px;top:896px;width:932.5px;height:191px;background:#2b2d31"></div><div style="left:1066.5px;top:911.5px;width:113.5px;height:160.5px;background:#1b1f27;border:1px solid #0c0d0f;border-radius:6px"></div><div class="t" style="left:1066.5px;top:919.5px;font-size:19px;color:#c4c6ca;width:113.5px;text-align:center;font-weight:300;letter-spacing:-.2px">Audio In</div><div style="left:1072px;top:945px;width:81px;height:1px;background:#1f4562"></div><div class="t" style="left:1152px;top:944px;font-size:10.5px;color:#4a88c0;width:22px;text-align:right;font-weight:bold;letter-spacing:-.4px">0</div><div style="left:1072px;top:962px;width:81px;height:1px;background:#1f4562"></div><div class="t" style="left:1152px;top:956px;font-size:10.5px;color:#4a88c0;width:22px;text-align:right;font-weight:bold;letter-spacing:-.4px">-12</div><div style="left:1072px;top:980px;width:81px;height:1px;background:#1f4562"></div><div class="t" style="left:1152px;top:974px;font-size:10.5px;color:#4a88c0;width:22px;text-align:right;font-weight:bold;letter-spacing:-.4px">-24</div><div style="left:1072px;top:996.5px;width:81px;height:1px;background:#1f4562"></div><div class="t" style="left:1152px;top:990.5px;font-size:10.5px;color:#4a88c0;width:22px;text-align:right;font-weight:bold;letter-spacing:-.4px">-36</div><div style="left:1072px;top:1013.5px;width:81px;height:1px;background:#1f4562"></div><div class="t" style="left:1152px;top:1007.5px;font-size:10.5px;color:#4a88c0;width:22px;text-align:right;font-weight:bold;letter-spacing:-.4px">-48</div><div style="left:1072px;top:1031px;width:81px;height:1px;background:#1f4562"></div><div class="t" style="left:1152px;top:1021.5px;font-size:10.5px;color:#4a88c0;width:22px;text-align:right;font-weight:bold;letter-spacing:-.4px">-60</div><div style="left:1072px;top:954px;width:81px;height:1px;background:#1f4562"></div><div style="left:1071.5px;top:1037px;width:103.5px;height:30px;background:#1a1b1d;border:1px solid #101113;border-radius:3px"></div><div class="t" style="left:1073px;top:1037.5px;font-size:14.8px;color:#e8e8e8;width:80px;height:30px;line-height:30px;text-align:center;">Keiner</div><svg style="left:1155px;top:1049px;" width="10" height="6.5" viewBox="0 0 10 6.5"><polygon points="0,0 10,0 5.0,6.5" fill="#8a8a8a"/></svg><div style="left:1195px;top:911.5px;width:309px;height:160.5px;background:#4a4c51;border-radius:7px"></div><div class="t" style="left:1209.5px;top:919.5px;font-size:19px;color:#c8cacd;font-weight:300;letter-spacing:-.2px">CV Pitch Out</div><div style="left:1369px;top:917px;width:129px;height:27.5px;background:#1a1b1d;border-radius:3px"></div><div class="t" style="left:1369px;top:917.5px;font-size:14.8px;color:#f0f0f0;width:110px;height:28px;line-height:28px;text-align:center;">Keiner</div><svg style="left:1479px;top:927.5px;" width="10" height="6.5" viewBox="0 0 10 6.5"><polygon points="0,0 10,0 5.0,6.5" fill="#9a9a9a"/></svg><div style="left:1260px;top:978px;width:90.5px;height:23.5px;background:linear-gradient(90deg,#c8ccd6 0,#aab0bc 12%,#b4bac6 50%,#aab0bc 88%,#c8ccd6 100%);border:1px solid #2a2c30;"><div class="t" style="left:0px;top:0px;font-size:15px;color:#1c1e22;width:88.5px;height:22.5px;line-height:22.5px;text-align:center;">1V/Oct</div></div><div style="left:1350px;top:978px;width:90.5px;height:23.5px;background:#46484c;border:1px solid #2a2c30;"><div class="t" style="left:0px;top:0px;font-size:15px;color:#c4c6c8;width:88.5px;height:22.5px;line-height:22.5px;text-align:center;">Hz/V</div></div><div style="left:1205px;top:1033.5px;width:93px;height:29px;background:#4a4c51;border:1px solid #85888d;border-radius:3px"><div class="t" style="left:0px;top:0px;font-size:15.5px;color:#dcdcdc;width:91px;height:27px;line-height:27px;text-align:center;">Calibrate</div></div><svg style="left:1375.5px;top:1040.5px;" width="16" height="16" viewBox="0 0 16 16"><circle cx="8" cy="8" r="7.5" fill="#8a8c90"/><path d="M8 1 L8 8" stroke="#3a3c40" stroke-width="1.6"/></svg><div class="t" style="left:1412px;top:1039.5px;font-size:14.5px;color:#b8babd;">Monitor Vol</div><div style="left:1519px;top:911.5px;width:326px;height:160.5px;background:#4a4c51;border-radius:7px"></div><div class="t" style="left:1533px;top:919.5px;font-size:19px;color:#c8cacd;font-weight:300;letter-spacing:-.2px">CV Gate Out</div><div style="left:1710.5px;top:917px;width:129.5px;height:27.5px;background:#1a1b1d;border-radius:3px"></div><div class="t" style="left:1710.5px;top:917.5px;font-size:14.8px;color:#f0f0f0;width:110px;height:28px;line-height:28px;text-align:center;">Keiner</div><svg style="left:1820px;top:927.5px;" width="10" height="6.5" viewBox="0 0 10 6.5"><polygon points="0,0 10,0 5.0,6.5" fill="#9a9a9a"/></svg><div style="left:1530.5px;top:963px;width:91px;height:23.5px;background:linear-gradient(90deg,#c8ccd6 0,#aab0bc 12%,#b4bac6 50%,#aab0bc 88%,#c8ccd6 100%);border:1px solid #2a2c30;"><div class="t" style="left:0px;top:0px;font-size:15px;color:#1c1e22;width:89px;height:22.5px;line-height:22.5px;text-align:center;">Gate</div></div><div style="left:1621px;top:963px;width:91px;height:23.5px;background:#46484c;border:1px solid #2a2c30;"><div class="t" style="left:0px;top:0px;font-size:15px;color:#c4c6c8;width:89px;height:22.5px;line-height:22.5px;text-align:center;">Trigger</div></div><div style="left:1530.5px;top:993px;width:91px;height:23.5px;background:linear-gradient(90deg,#c8ccd6 0,#aab0bc 12%,#b4bac6 50%,#aab0bc 88%,#c8ccd6 100%);border:1px solid #2a2c30;"><div class="t" style="left:0px;top:0px;font-size:15px;color:#1c1e22;width:89px;height:22.5px;line-height:22.5px;text-align:center;">V-Trig</div></div><div style="left:1621px;top:993px;width:91px;height:23.5px;background:#46484c;border:1px solid #2a2c30;"><div class="t" style="left:0px;top:0px;font-size:15px;color:#c4c6c8;width:89px;height:22.5px;line-height:22.5px;text-align:center;">S-Trig</div></div><div style="left:1530.5px;top:1034.7px;width:91px;height:26px;background:#46484c;border:1px solid #2a2c30;border-radius:3px"><div class="t" style="left:0px;top:0px;font-size:14.5px;color:#c8cacc;width:89px;height:24px;line-height:24px;text-align:center;">Retrig</div></div><div style="left:1698.5px;top:1043px;width:10.5px;height:10.5px;background:radial-gradient(#000 40%,#3a3c40);border-radius:6px"></div><div class="t" style="left:1740.5px;top:1039.5px;font-size:14.5px;color:#c4c6c8;">Trigger Time</div><div style="left:1860.5px;top:911.5px;width:110.5px;height:160.5px;background:#4a4c51;border-radius:7px"></div><div class="t" style="left:1860.5px;top:919.5px;font-size:19px;color:#c8cacd;width:110.5px;text-align:center;font-weight:300">Glide</div><div style="left:1870.5px;top:1034.7px;width:90.5px;height:26px;background:#46484c;border:1px solid #2a2c30;border-radius:3px"><div class="t" style="left:0px;top:0px;font-size:14.5px;color:#c8cacc;width:88.5px;height:24px;line-height:24px;text-align:center;">On</div></div><svg style="left:0px;top:0px;pointer-events:none" width="2560" height="1440" viewBox="0 0 2560 1440"><defs><radialGradient id="kg" cx=".45" cy=".35" r=".8"><stop offset="0" stop-color="#3c3d40"/><stop offset="1" stop-color="#1c1d1f"/></radialGradient></defs><circle cx="1780" cy="989.5" r="26" fill="#222326"/><path d="M1764.1 1007.2 A23.8 23.8 0 0 1 1757.6 981.4" fill="none" stroke="#e09a42" stroke-width="4.2"/><circle cx="1780" cy="989.5" r="21" fill="url(#kg)"/><path d="M1763.5 981.1 L1768.9 983.8" stroke="#e8e8e8" stroke-width="2.4"/><circle cx="1915" cy="989.5" r="26" fill="#222326"/><path d="M1899.1 1007.2 A23.8 23.8 0 0 1 1915.0 965.7" fill="none" stroke="#e09a42" stroke-width="4.2"/><circle cx="1915" cy="989.5" r="21" fill="url(#kg)"/><path d="M1915.0 971.0 L1915.0 977.0" stroke="#e8e8e8" stroke-width="2.4"/></svg><div style="left:1052.5px;top:1087px;width:932.5px;height:159.5px;background:#232427"></div><div style="left:1052.5px;top:1087px;width:140.5px;height:20.5px;background:#1a1b1d"></div><div class="t" style="left:1063.5px;top:1088.5px;font-size:14.5px;color:#c8cacc;">Pitch Range</div><div class="t" style="left:1157px;top:1088.5px;font-size:14.5px;color:#c8cacc;">12</div><div style="left:1193px;top:1087.5px;width:780px;height:19px;background:#3f6a86;border-radius:0 4px 0 0;overflow:hidden"><div class="t" style="left:-1px;top:1.5px;font-size:14px;color:#d8e2ea;">C 1</div><div class="t" style="left:192.5px;top:1.5px;font-size:14px;color:#d8e2ea;">C 2</div><div class="t" style="left:387.5px;top:1.5px;font-size:14px;color:#d8e2ea;">C 3</div><div class="t" style="left:582px;top:1.5px;font-size:14px;color:#d8e2ea;">C 4</div><div class="t" style="left:776px;top:1.5px;font-size:14px;color:#d8e2ea;">C 5</div></div><div style="left:1193px;top:1106px;width:780px;height:2px;background:#15161a"></div><div style="left:1075px;top:1145.5px;width:57px;height:59px;background:#1d1f23;border-radius:6px"></div><div class="t" style="left:1075px;top:1158.5px;font-size:15px;color:#c8cacc;width:57px;text-align:center;">Bend</div><div class="t" style="left:1075px;top:1176.5px;font-size:15px;color:#c8cacc;width:57px;text-align:center;">2</div><div style="left:1153.5px;top:1130.5px;width:18.5px;height:81.5px;border:1px solid #17181a;border-radius:3px;background:linear-gradient(#8a8a8a 0,#7a7a7a 20%,#666 40%,#3c3c3c 44%,#555 47%,#a0a0a0 57%,#6a6a6a 62%,#5a5a5a 80%,#484848 100%)"></div><div class="t" style="left:1140px;top:1220px;font-size:14.5px;color:#c8cacc;width:44px;text-align:center;">Bend</div><svg style="left:1194px;top:1108px;overflow:hidden" width="780" height="136" viewBox="0 0 780 136"><defs><linearGradient id="wk" x1="0" y1="0" x2="0" y2="1"><stop offset="0" stop-color="#bcbcc0"/><stop offset=".12" stop-color="#eeeef0"/><stop offset=".2" stop-color="#f4f4f6"/><stop offset="1" stop-color="#f4f4f6"/></linearGradient><linearGradient id="bk" x1="0" y1="0" x2="0" y2="1"><stop offset="0" stop-color="#2a3036"/><stop offset=".85" stop-color="#22272c"/><stop offset=".9" stop-color="#3a4046"/><stop offset="1" stop-color="#1c2024"/></linearGradient></defs><rect x="0" y="0" width="779.0" height="136" fill="url(#wk)"/><rect x="25.8" y="0" width="1.2" height="136" fill="#b4b4b8"/><rect x="51.9" y="0" width="1.2" height="136" fill="#b4b4b8"/><rect x="80.2" y="0" width="1.2" height="136" fill="#b4b4b8"/><rect x="107.2" y="0" width="1.2" height="136" fill="#b4b4b8"/><rect x="136.3" y="0" width="1.2" height="136" fill="#b4b4b8"/><rect x="166.4" y="0" width="1.2" height="136" fill="#b4b4b8"/><rect x="193.9" y="0" width="1.2" height="136" fill="#b4b4b8"/><rect x="15.1" y="0" width="16.3" height="88" fill="url(#bk)"/><rect x="48.0" y="0" width="15.7" height="88" fill="url(#bk)"/><rect x="97.4" y="0" width="15.8" height="88" fill="url(#bk)"/><rect x="129.8" y="0" width="15.6" height="88" fill="url(#bk)"/><rect x="163.1" y="0" width="15.7" height="88" fill="url(#bk)"/><rect x="220.3" y="0" width="1.2" height="136" fill="#b4b4b8"/><rect x="246.4" y="0" width="1.2" height="136" fill="#b4b4b8"/><rect x="274.7" y="0" width="1.2" height="136" fill="#b4b4b8"/><rect x="301.7" y="0" width="1.2" height="136" fill="#b4b4b8"/><rect x="330.8" y="0" width="1.2" height="136" fill="#b4b4b8"/><rect x="360.9" y="0" width="1.2" height="136" fill="#b4b4b8"/><rect x="388.4" y="0" width="1.2" height="136" fill="#b4b4b8"/><rect x="209.6" y="0" width="16.3" height="88" fill="url(#bk)"/><rect x="242.5" y="0" width="15.7" height="88" fill="url(#bk)"/><rect x="291.9" y="0" width="15.8" height="88" fill="url(#bk)"/><rect x="324.3" y="0" width="15.6" height="88" fill="url(#bk)"/><rect x="357.6" y="0" width="15.7" height="88" fill="url(#bk)"/><rect x="414.8" y="0" width="1.2" height="136" fill="#b4b4b8"/><rect x="440.9" y="0" width="1.2" height="136" fill="#b4b4b8"/><rect x="469.2" y="0" width="1.2" height="136" fill="#b4b4b8"/><rect x="496.2" y="0" width="1.2" height="136" fill="#b4b4b8"/><rect x="525.3" y="0" width="1.2" height="136" fill="#b4b4b8"/><rect x="555.4" y="0" width="1.2" height="136" fill="#b4b4b8"/><rect x="582.9" y="0" width="1.2" height="136" fill="#b4b4b8"/><rect x="404.1" y="0" width="16.3" height="88" fill="url(#bk)"/><rect x="437.0" y="0" width="15.7" height="88" fill="url(#bk)"/><rect x="486.4" y="0" width="15.8" height="88" fill="url(#bk)"/><rect x="518.8" y="0" width="15.6" height="88" fill="url(#bk)"/><rect x="552.1" y="0" width="15.7" height="88" fill="url(#bk)"/><rect x="609.3" y="0" width="1.2" height="136" fill="#b4b4b8"/><rect x="635.4" y="0" width="1.2" height="136" fill="#b4b4b8"/><rect x="663.7" y="0" width="1.2" height="136" fill="#b4b4b8"/><rect x="690.7" y="0" width="1.2" height="136" fill="#b4b4b8"/><rect x="719.8" y="0" width="1.2" height="136" fill="#b4b4b8"/><rect x="749.9" y="0" width="1.2" height="136" fill="#b4b4b8"/><rect x="777.4" y="0" width="1.2" height="136" fill="#b4b4b8"/><rect x="598.6" y="0" width="16.3" height="88" fill="url(#bk)"/><rect x="631.5" y="0" width="15.7" height="88" fill="url(#bk)"/><rect x="680.9" y="0" width="15.8" height="88" fill="url(#bk)"/><rect x="713.3" y="0" width="15.6" height="88" fill="url(#bk)"/><rect x="746.6" y="0" width="15.7" height="88" fill="url(#bk)"/></svg><div style="left:1193px;top:1243.5px;width:780px;height:3px;background:#0c0c0d"></div><div style="left:1052.5px;top:797.5px;width:1px;height:449px;background:#3a3c40"></div><div style="left:1984.0px;top:797.5px;width:1px;height:449px;background:#3a3c40"></div><div style="left:1052.5px;top:1245.5px;width:932.5px;height:1px;background:#3a3c40"></div>
<div style="left:371px;top:364px;width:457px;height:594px;background:#1e1f22;box-shadow:0 0 10px rgba(0,0,0,.55);border:1px solid #303236"></div><div style="left:371px;top:364px;width:457px;height:37px;background:#fff"></div><svg style="left:380px;top:372px;" width="20" height="20" viewBox="0 0 20 20"><defs><linearGradient id="ai" x1="0" y1="0" x2="1" y2="1"><stop offset="0" stop-color="#1e9cf4"/><stop offset="1" stop-color="#0a5ed0"/></linearGradient></defs><rect x="0" y="0" width="20" height="20" rx="5" fill="url(#ai)"/><path d="M3 10 Q7 6 9 8 T16 5 M3 14 Q7 10 9 12 T17 9 M4 18 Q8 14 10 16 T17 13 M5 5 Q8 2 10 3.5" fill="none" stroke="#0a3c8c" stroke-width="1.6"/></svg><div class="t" style="left:405px;top:373.8px;font-size:15.6px;color:#111;letter-spacing:-.25px">Stem Separation</div><svg style="left:800px;top:375px;" width="14" height="14" viewBox="0 0 14 14"><path d="M1 1 L13 13 M13 1 L1 13" stroke="#111" stroke-width="1.3"/></svg><div style="left:384px;top:414px;width:432px;height:488px;background:#2f3136;border-radius:6px"></div><div style="left:384px;top:443.5px;width:432px;height:1px;background:#292b2f"></div><div class="t" style="left:384px;top:419px;font-size:15.5px;color:#dcdcdc;width:432px;text-align:center;">Select Stems to extract</div><div style="left:433.5px;top:477.5px;width:332.5px;height:59px;background:#403a36;border:1.6px solid #e4a04c;border-radius:10px"></div><div class="t" style="left:433.5px;top:497.5px;font-size:15.5px;color:#f0f0f0;width:335px;text-align:center;">Vocals</div><svg style="left:723px;top:499.5px;" width="16" height="14" viewBox="0 0 16 14"><path d="M1.5 8 L5.5 12 L14 1.5" fill="none" stroke="#fff" stroke-width="2.4"/></svg><div style="left:433.5px;top:550.5px;width:332.5px;height:59px;background:#303a36;border:1.6px solid #5fe070;border-radius:10px"></div><div class="t" style="left:433.5px;top:570.5px;font-size:15.5px;color:#f0f0f0;width:335px;text-align:center;">Drums</div><svg style="left:723px;top:572.5px;" width="16" height="14" viewBox="0 0 16 14"><path d="M1.5 8 L5.5 12 L14 1.5" fill="none" stroke="#fff" stroke-width="2.4"/></svg><div style="left:433.5px;top:623px;width:332.5px;height:59px;background:#3a2e30;border:1.6px solid #e85050;border-radius:10px"></div><div class="t" style="left:433.5px;top:643px;font-size:15.5px;color:#f0f0f0;width:335px;text-align:center;">Bass</div><svg style="left:723px;top:645px;" width="16" height="14" viewBox="0 0 16 14"><path d="M1.5 8 L5.5 12 L14 1.5" fill="none" stroke="#fff" stroke-width="2.4"/></svg><div style="left:433.5px;top:695.5px;width:332.5px;height:59px;background:#333c40;border:1.6px solid #52b8c4;border-radius:10px"></div><div class="t" style="left:433.5px;top:715.5px;font-size:15.5px;color:#f0f0f0;width:335px;text-align:center;">Other</div><svg style="left:723px;top:717.5px;" width="16" height="14" viewBox="0 0 16 14"><path d="M1.5 8 L5.5 12 L14 1.5" fill="none" stroke="#fff" stroke-width="2.4"/></svg><svg style="left:456px;top:487px;" width="40" height="38" viewBox="0 0 40 38"><circle cx="24" cy="10.7" r="9.7" fill="#f0ae58"/><path d="M13 32.5 Q13 22.5 21 20.3 Q25.5 22.6 30.5 20.3 Q37.3 23 37.3 32.5 Q37 36 33 36 L17 36 Q13 36 13 32.5 Z" fill="#f0ae58"/><path d="M3.6 30.6 L11.5 22.8" stroke="#f0ae58" stroke-width="4.4" stroke-linecap="round"/><path d="M11.2 23.2 L14.6 19.8" stroke="#f0ae58" stroke-width="7" stroke-linecap="round"/><path d="M9.3 21.6 L13 25.4" stroke="#403a36" stroke-width="1"/><path d="M8.3 28 L8.3 36" stroke="#f0ae58" stroke-width="2.8"/><path d="M16.5 17.6 A10 10 0 0 0 31 19.4" fill="none" stroke="#403a36" stroke-width="1.1"/></svg><svg style="left:453px;top:563px;" width="48" height="36" viewBox="0 0 48 36"><g fill="#6ef47e" stroke="#6ef47e"><ellipse cx="39.5" cy="6" rx="6.5" ry="1.9" stroke="none"/><path d="M38.6 4.4 L39.5 2.6 L40.4 4.4 Z" stroke="none"/><path d="M39.5 6 L39.5 25.8 M39.5 24 L32.7 27.8 M39.5 24 L44.3 27.8" stroke-width="1.5" fill="none"/><rect x="9.2" y="6.9" width="9.4" height="5.8" stroke="none"/><rect x="23" y="6.9" width="8" height="5.8" stroke="none"/><path d="M20.8 8.3 L20.8 15" stroke-width="1.8"/><path d="M1.4 13.2 L13.2 13.2 L11 25.8 L1.4 25.8 Z" stroke="none"/><path d="M2.3 25 L2.3 32.2" stroke-width="1.8"/><path d="M27.3 13.2 L37.5 13.2 L37 19.6 L31 19.6 Z" stroke="none"/><path d="M32 19 L30.6 29.5 M31 27 L35.5 29.8" stroke-width="1.5" fill="none"/><circle cx="20.8" cy="24.4" r="9.5" stroke="none"/><path d="M13.8 31.4 L11 33.6 M27.8 31.4 L30.6 33.6" stroke-width="1.5"/></g><circle cx="20.8" cy="29.5" r="2.2" fill="#303a36"/></svg><svg style="left:453px;top:629px;" width="47" height="47" viewBox="0 0 47 47"><g fill="#ee5252"><path d="M18.1 26 L39.5 7" stroke="#ee5252" stroke-width="2.7" fill="none"/><path d="M36.2 6.6 L41.6 1.2 L45.4 4.2 L40.2 10.6 Z"/><path d="M37.3 5 L35.6 3.6 M39 3.5 L37.4 2 M40.6 2 L39.2 .6" stroke="#ee5252" stroke-width="1.1"/><path d="M14.7 22.1 Q16.5 20.4 19.1 21.6 Q19.6 24.4 18.1 26.5 Q18.4 29.4 20 30.8 Q21.8 31 23 32.3 Q23 34.2 21.5 35.2 Q18.4 35.6 17.1 37.7 Q16.6 41.4 14.7 43.5 Q12.8 45.7 10.3 45.9 Q6.2 45.4 4.5 42.5 Q1.4 39.6 1.1 36.2 Q1.2 33 3.5 31.3 Q7.4 30.6 10.3 28.4 Q12.4 26.6 13.2 24 Q13.6 22.8 14.7 22.1 Z"/></g></svg><svg style="left:459px;top:707.5px;" width="35" height="35" viewBox="0 0 35 35"><g fill="#5ec2ce"><path d="M0 2.5 Q0 0 2.5 0 L5.3 0 L5.3 18 L8.1 18 L8.1 34.5 L2.5 34.5 Q0 34.5 0 32 Z"/><path d="M11 0 L14.1 0 L14.1 18 L16 18 L16 34.5 L9.2 34.5 L9.2 18 L11 18 Z"/><path d="M19.9 0 L23 0 L23 18 L24.8 18 L24.8 34.5 L18 34.5 L18 18 L19.9 18 Z"/><path d="M28.7 0 L31.5 0 Q34 0 34 2.5 L34 32 Q34 34.5 31.5 34.5 L26 34.5 L26 18 L28.7 18 Z"/></g></svg><div style="left:434px;top:793px;width:331px;height:58px;background:#2a2c30;border-radius:9px"></div><div class="t" style="left:460px;top:805px;font-size:15.5px;color:#74777c;">Consolidate - Selected Stems are</div><div class="t" style="left:460px;top:822px;font-size:15.5px;color:#74777c;">bounced to new Track</div><div style="left:723px;top:812.5px;width:19px;height:19px;background:#4c4e53;border-radius:3px"></div><div style="left:603.5px;top:915px;width:99px;height:32px;background:#46484c;border-radius:4px"><div class="t" style="left:0px;top:0px;font-size:16px;color:#d4d4d4;width:99px;height:33px;line-height:33px;text-align:center;">OK</div></div><div style="left:716px;top:915px;width:100px;height:32px;background:#46484c;border-radius:4px"><div class="t" style="left:0px;top:0px;font-size:16px;color:#d4d4d4;width:100px;height:33px;line-height:33px;text-align:center;">Abbrechen</div></div>
</div></body></html>
